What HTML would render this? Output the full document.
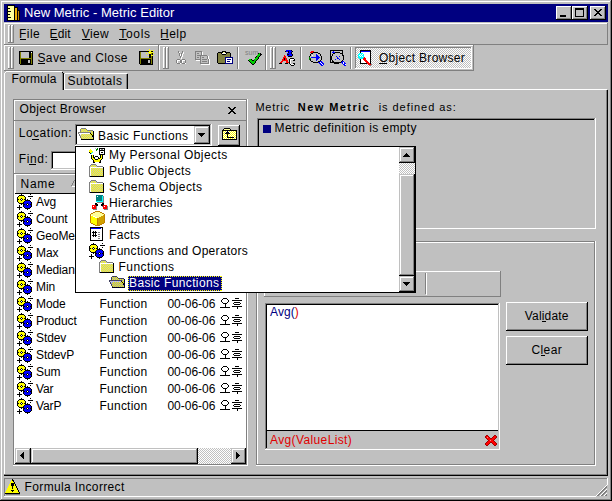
<!DOCTYPE html><html><head><meta charset="utf-8"><style>
html,body{margin:0;padding:0;}
body{width:612px;height:501px;position:relative;overflow:hidden;background:#c0c0c0;font-family:"Liberation Sans",sans-serif;}
div,svg{position:absolute;}
.t{white-space:pre;}
</style></head><body>
<div style="left:0px;top:0px;width:612px;height:501px;background:#000;"></div>
<div style="left:0px;top:0px;width:611px;height:500px;background:#c0c0c0;"></div>
<div style="left:1px;top:1px;width:610px;height:499px;background:#808080;"></div>
<div style="left:1px;top:1px;width:609px;height:498px;background:#fff;"></div>
<div style="left:2px;top:2px;width:608px;height:497px;background:#c0c0c0;"></div>
<div style="left:4px;top:4px;width:604px;height:18px;background:#000080;"></div>
<div class="t" style="left:24.0px;top:6px;font-size:13px;line-height:14px;color:#fff;font-weight:400;letter-spacing:0.032px;">New Metric - Metric Editor</div>
<svg style="left:7px;top:5px" width="13" height="16" viewBox="0 0 13 16" shape-rendering="crispEdges"><rect x="0" y="0" width="8" height="1" fill="#000000"/><rect x="0" y="1" width="1" height="1" fill="#000000"/><rect x="1" y="1" width="6" height="1" fill="#ffff99"/><rect x="7" y="1" width="1" height="1" fill="#000000"/><rect x="0" y="2" width="1" height="1" fill="#000000"/><rect x="1" y="2" width="6" height="1" fill="#ffff99"/><rect x="7" y="2" width="4" height="1" fill="#000000"/><rect x="0" y="3" width="3" height="1" fill="#000000"/><rect x="3" y="3" width="4" height="1" fill="#ffff99"/><rect x="7" y="3" width="1" height="1" fill="#000000"/><rect x="8" y="3" width="2" height="1" fill="#f0b000"/><rect x="10" y="3" width="1" height="1" fill="#000000"/><rect x="0" y="4" width="1" height="1" fill="#000000"/><rect x="1" y="4" width="6" height="1" fill="#ffff99"/><rect x="7" y="4" width="1" height="1" fill="#000000"/><rect x="8" y="4" width="2" height="1" fill="#f0b000"/><rect x="10" y="4" width="1" height="1" fill="#000000"/><rect x="0" y="5" width="1" height="1" fill="#000000"/><rect x="1" y="5" width="6" height="1" fill="#ffff99"/><rect x="7" y="5" width="1" height="1" fill="#000000"/><rect x="8" y="5" width="2" height="1" fill="#f0b000"/><rect x="10" y="5" width="3" height="1" fill="#000000"/><rect x="0" y="6" width="4" height="1" fill="#000000"/><rect x="4" y="6" width="3" height="1" fill="#ffff99"/><rect x="7" y="6" width="1" height="1" fill="#000000"/><rect x="8" y="6" width="2" height="1" fill="#f0b000"/><rect x="10" y="6" width="1" height="1" fill="#000000"/><rect x="11" y="6" width="1" height="1" fill="#c08000"/><rect x="12" y="6" width="1" height="1" fill="#000000"/><rect x="0" y="7" width="1" height="1" fill="#000000"/><rect x="1" y="7" width="6" height="1" fill="#ffff99"/><rect x="7" y="7" width="1" height="1" fill="#000000"/><rect x="8" y="7" width="2" height="1" fill="#f0b000"/><rect x="10" y="7" width="1" height="1" fill="#000000"/><rect x="11" y="7" width="1" height="1" fill="#c08000"/><rect x="12" y="7" width="1" height="1" fill="#000000"/><rect x="0" y="8" width="1" height="1" fill="#000000"/><rect x="1" y="8" width="6" height="1" fill="#ffff99"/><rect x="7" y="8" width="1" height="1" fill="#000000"/><rect x="8" y="8" width="2" height="1" fill="#f0b000"/><rect x="10" y="8" width="1" height="1" fill="#000000"/><rect x="11" y="8" width="1" height="1" fill="#c08000"/><rect x="12" y="8" width="1" height="1" fill="#000000"/><rect x="0" y="9" width="3" height="1" fill="#000000"/><rect x="3" y="9" width="4" height="1" fill="#ffff99"/><rect x="7" y="9" width="1" height="1" fill="#000000"/><rect x="8" y="9" width="2" height="1" fill="#f0b000"/><rect x="10" y="9" width="1" height="1" fill="#000000"/><rect x="11" y="9" width="1" height="1" fill="#c08000"/><rect x="12" y="9" width="1" height="1" fill="#000000"/><rect x="0" y="10" width="1" height="1" fill="#000000"/><rect x="1" y="10" width="6" height="1" fill="#ffff99"/><rect x="7" y="10" width="1" height="1" fill="#000000"/><rect x="8" y="10" width="2" height="1" fill="#f0b000"/><rect x="10" y="10" width="1" height="1" fill="#000000"/><rect x="11" y="10" width="1" height="1" fill="#c08000"/><rect x="12" y="10" width="1" height="1" fill="#000000"/><rect x="0" y="11" width="1" height="1" fill="#000000"/><rect x="1" y="11" width="6" height="1" fill="#ffff99"/><rect x="7" y="11" width="1" height="1" fill="#000000"/><rect x="8" y="11" width="2" height="1" fill="#f0b000"/><rect x="10" y="11" width="1" height="1" fill="#000000"/><rect x="11" y="11" width="1" height="1" fill="#c08000"/><rect x="12" y="11" width="1" height="1" fill="#000000"/><rect x="0" y="12" width="4" height="1" fill="#000000"/><rect x="4" y="12" width="3" height="1" fill="#ffff99"/><rect x="7" y="12" width="1" height="1" fill="#000000"/><rect x="8" y="12" width="2" height="1" fill="#f0b000"/><rect x="10" y="12" width="1" height="1" fill="#000000"/><rect x="11" y="12" width="1" height="1" fill="#c08000"/><rect x="12" y="12" width="1" height="1" fill="#000000"/><rect x="0" y="13" width="1" height="1" fill="#000000"/><rect x="1" y="13" width="6" height="1" fill="#ffff99"/><rect x="7" y="13" width="1" height="1" fill="#000000"/><rect x="8" y="13" width="2" height="1" fill="#f0b000"/><rect x="10" y="13" width="1" height="1" fill="#000000"/><rect x="11" y="13" width="1" height="1" fill="#c08000"/><rect x="12" y="13" width="1" height="1" fill="#000000"/><rect x="0" y="14" width="1" height="1" fill="#000000"/><rect x="1" y="14" width="6" height="1" fill="#ffff99"/><rect x="7" y="14" width="1" height="1" fill="#000000"/><rect x="8" y="14" width="2" height="1" fill="#f0b000"/><rect x="10" y="14" width="1" height="1" fill="#000000"/><rect x="11" y="14" width="1" height="1" fill="#c08000"/><rect x="12" y="14" width="1" height="1" fill="#000000"/><rect x="0" y="15" width="13" height="1" fill="#000000"/></svg>
<div style="left:556px;top:6px;width:16px;height:14px;background:#000;"></div>
<div style="left:556px;top:6px;width:15px;height:13px;background:#fff;"></div>
<div style="left:557px;top:7px;width:14px;height:12px;background:#808080;"></div>
<div style="left:557px;top:7px;width:13px;height:11px;background:#c0c0c0;"></div>
<div style="left:558px;top:8px;width:12px;height:10px;background:#c0c0c0;"></div>
<div style="left:560px;top:15px;width:6px;height:2px;background:#000;"></div>
<div style="left:572px;top:6px;width:16px;height:14px;background:#000;"></div>
<div style="left:572px;top:6px;width:15px;height:13px;background:#fff;"></div>
<div style="left:573px;top:7px;width:14px;height:12px;background:#808080;"></div>
<div style="left:573px;top:7px;width:13px;height:11px;background:#c0c0c0;"></div>
<div style="left:574px;top:8px;width:12px;height:10px;background:#c0c0c0;"></div>
<div style="left:575px;top:8px;width:9px;height:9px;background:#000;"></div>
<div style="left:576px;top:10px;width:7px;height:6px;background:#c0c0c0;"></div>
<div style="left:590px;top:6px;width:16px;height:14px;background:#000;"></div>
<div style="left:590px;top:6px;width:15px;height:13px;background:#fff;"></div>
<div style="left:591px;top:7px;width:14px;height:12px;background:#808080;"></div>
<div style="left:591px;top:7px;width:13px;height:11px;background:#c0c0c0;"></div>
<div style="left:592px;top:8px;width:12px;height:10px;background:#c0c0c0;"></div>
<svg style="left:594px;top:9px" width="8" height="7" viewBox="0 0 8 7" shape-rendering="crispEdges"><rect x="0" y="0" width="2" height="1" fill="#000000"/><rect x="6" y="0" width="2" height="1" fill="#000000"/><rect x="1" y="1" width="2" height="1" fill="#000000"/><rect x="5" y="1" width="2" height="1" fill="#000000"/><rect x="2" y="2" width="4" height="1" fill="#000000"/><rect x="3" y="3" width="2" height="1" fill="#000000"/><rect x="2" y="4" width="4" height="1" fill="#000000"/><rect x="1" y="5" width="2" height="1" fill="#000000"/><rect x="5" y="5" width="2" height="1" fill="#000000"/><rect x="0" y="6" width="2" height="1" fill="#000000"/><rect x="6" y="6" width="2" height="1" fill="#000000"/></svg>
<div style="left:4px;top:23px;width:604px;height:1px;background:#fff;"></div>
<div style="left:4px;top:23px;width:1px;height:21px;background:#fff;"></div>
<div style="left:607px;top:23px;width:1px;height:22px;background:#808080;"></div>
<div style="left:4px;top:44px;width:604px;height:1px;background:#808080;"></div>
<div style="left:4px;top:45px;width:469px;height:1px;background:#fff;"></div>
<div style="left:8px;top:25px;width:3px;height:18px;background:#808080;"></div>
<div style="left:8px;top:25px;width:2px;height:17px;background:#fff;"></div>
<div style="left:9px;top:26px;width:1px;height:16px;background:#c0c0c0;"></div>
<div style="left:11px;top:25px;width:3px;height:18px;background:#808080;"></div>
<div style="left:11px;top:25px;width:2px;height:17px;background:#fff;"></div>
<div style="left:12px;top:26px;width:1px;height:16px;background:#c0c0c0;"></div>
<div class="t" style="left:19.0px;top:27px;font-size:12px;line-height:14px;color:#000;font-weight:400;letter-spacing:0.446px;">File</div>
<div class="t" style="left:49.6px;top:27px;font-size:12px;line-height:14px;color:#000;font-weight:400;letter-spacing:0.085px;">Edit</div>
<div class="t" style="left:81.7px;top:27px;font-size:12px;line-height:14px;color:#000;font-weight:400;letter-spacing:0.423px;">View</div>
<div class="t" style="left:119.3px;top:27px;font-size:12px;line-height:14px;color:#000;font-weight:400;letter-spacing:0.697px;">Tools</div>
<div class="t" style="left:160.0px;top:27px;font-size:12px;line-height:14px;color:#000;font-weight:400;letter-spacing:0.465px;">Help</div>
<div style="left:20px;top:39px;width:6px;height:1px;background:#000;"></div>
<div style="left:51px;top:39px;width:7px;height:1px;background:#000;"></div>
<div style="left:82px;top:39px;width:8px;height:1px;background:#000;"></div>
<div style="left:119px;top:39px;width:8px;height:1px;background:#000;"></div>
<div style="left:161px;top:39px;width:8px;height:1px;background:#000;"></div>
<div style="left:4px;top:45px;width:1px;height:25px;background:#fff;"></div>
<div style="left:4px;top:70px;width:470px;height:1px;background:#808080;"></div>
<div style="left:473px;top:45px;width:1px;height:26px;background:#808080;"></div>
<div style="left:8px;top:47px;width:3px;height:22px;background:#808080;"></div>
<div style="left:8px;top:47px;width:2px;height:21px;background:#fff;"></div>
<div style="left:9px;top:48px;width:1px;height:20px;background:#c0c0c0;"></div>
<div style="left:11px;top:47px;width:3px;height:22px;background:#808080;"></div>
<div style="left:11px;top:47px;width:2px;height:21px;background:#fff;"></div>
<div style="left:12px;top:48px;width:1px;height:20px;background:#c0c0c0;"></div>
<svg style="left:19px;top:51px" width="14" height="14" viewBox="0 0 14 14" shape-rendering="crispEdges"><rect x="0" y="0" width="14" height="14" fill="#000"/><rect x="1" y="1" width="1" height="12" fill="#808000"/><rect x="12" y="2" width="1" height="11" fill="#808000"/><rect x="2" y="7" width="10" height="1" fill="#808000"/><rect x="2" y="1" width="8" height="6" fill="#c0c0c0"/><rect x="9" y="9" width="2" height="3" fill="#c0c0c0"/><rect x="12" y="1" width="1" height="1" fill="#fff"/><rect x="0" y="13" width="1" height="1" fill="#c0c0c0"/></svg>
<div class="t" style="left:37.4px;top:51px;font-size:12px;line-height:14px;color:#000;font-weight:400;letter-spacing:0.413px;">Save and Close</div>
<div style="left:38px;top:63px;width:7px;height:1px;background:#000;"></div>
<svg style="left:139px;top:51px" width="14" height="14" viewBox="0 0 14 14" shape-rendering="crispEdges"><rect x="0" y="0" width="14" height="14" fill="#000"/><rect x="1" y="1" width="1" height="12" fill="#808000"/><rect x="12" y="2" width="1" height="11" fill="#808000"/><rect x="2" y="7" width="10" height="1" fill="#808000"/><rect x="2" y="1" width="8" height="6" fill="#c0c0c0"/><rect x="9" y="9" width="2" height="3" fill="#c0c0c0"/><rect x="12" y="1" width="1" height="1" fill="#fff"/><rect x="0" y="13" width="1" height="1" fill="#c0c0c0"/></svg>
<svg style="left:146px;top:49px" width="9" height="9" viewBox="0 0 9 9" shape-rendering="crispEdges"><rect x="3" y="0" width="1" height="1" fill="#ff0"/><rect x="1" y="1" width="1" height="1" fill="#ff0"/><rect x="5" y="1" width="1" height="1" fill="#ff0"/><rect x="3" y="2" width="2" height="3" fill="#ff0"/><rect x="2" y="3" width="5" height="1" fill="#ff0"/><rect x="0" y="4" width="1" height="1" fill="#ff0"/><rect x="7" y="4" width="1" height="1" fill="#ff0"/><rect x="2" y="6" width="1" height="1" fill="#ff0"/><rect x="5" y="6" width="2" height="1" fill="#ff0"/><rect x="7" y="1" width="1" height="1" fill="#ff0"/></svg>
<div style="left:158px;top:45px;width:1px;height:25px;background:#808080;"></div>
<div style="left:159px;top:45px;width:1px;height:25px;background:#fff;"></div>
<div style="left:163px;top:47px;width:3px;height:22px;background:#808080;"></div>
<div style="left:163px;top:47px;width:2px;height:21px;background:#fff;"></div>
<div style="left:164px;top:48px;width:1px;height:20px;background:#c0c0c0;"></div>
<div style="left:166px;top:47px;width:3px;height:22px;background:#808080;"></div>
<div style="left:166px;top:47px;width:2px;height:21px;background:#fff;"></div>
<div style="left:167px;top:48px;width:1px;height:20px;background:#c0c0c0;"></div>
<svg style="left:176px;top:51px" width="11" height="14" viewBox="0 0 11 14" shape-rendering="crispEdges"><g fill="none" stroke="#fff" stroke-width="1"><path d="M3 1 L6 8 M8 1 L5 8"/><circle cx="3" cy="11" r="2"/><circle cx="8" cy="11" r="2"/></g><g fill="none" stroke="#808080" stroke-width="1"><path d="M2 0 L5 7 M7 0 L4 7"/><circle cx="2.5" cy="10.5" r="2"/><circle cx="7.5" cy="10.5" r="2"/></g></svg>
<svg style="left:195px;top:51px" width="16" height="14" viewBox="0 0 16 14" shape-rendering="crispEdges"><rect x="0" y="0" width="7" height="1" fill="#808080"/><rect x="0" y="1" width="1" height="1" fill="#808080"/><rect x="1" y="1" width="5" height="1" fill="#c0c0c0"/><rect x="6" y="1" width="1" height="1" fill="#808080"/><rect x="7" y="1" width="1" height="1" fill="#ffffff"/><rect x="0" y="2" width="1" height="1" fill="#808080"/><rect x="1" y="2" width="1" height="1" fill="#c0c0c0"/><rect x="2" y="2" width="2" height="1" fill="#808080"/><rect x="4" y="2" width="2" height="1" fill="#c0c0c0"/><rect x="6" y="2" width="1" height="1" fill="#808080"/><rect x="7" y="2" width="1" height="1" fill="#ffffff"/><rect x="0" y="3" width="1" height="1" fill="#808080"/><rect x="1" y="3" width="5" height="1" fill="#c0c0c0"/><rect x="6" y="3" width="1" height="1" fill="#808080"/><rect x="7" y="3" width="1" height="1" fill="#ffffff"/><rect x="0" y="4" width="1" height="1" fill="#808080"/><rect x="1" y="4" width="1" height="1" fill="#c0c0c0"/><rect x="2" y="4" width="10" height="1" fill="#808080"/><rect x="0" y="5" width="1" height="1" fill="#808080"/><rect x="1" y="5" width="4" height="1" fill="#c0c0c0"/><rect x="5" y="5" width="1" height="1" fill="#808080"/><rect x="6" y="5" width="6" height="1" fill="#c0c0c0"/><rect x="12" y="5" width="1" height="1" fill="#808080"/><rect x="13" y="5" width="1" height="1" fill="#ffffff"/><rect x="0" y="6" width="1" height="1" fill="#808080"/><rect x="1" y="6" width="1" height="1" fill="#c0c0c0"/><rect x="2" y="6" width="2" height="1" fill="#808080"/><rect x="4" y="6" width="1" height="1" fill="#c0c0c0"/><rect x="5" y="6" width="1" height="1" fill="#808080"/><rect x="6" y="6" width="1" height="1" fill="#c0c0c0"/><rect x="7" y="6" width="2" height="1" fill="#808080"/><rect x="9" y="6" width="3" height="1" fill="#c0c0c0"/><rect x="12" y="6" width="1" height="1" fill="#808080"/><rect x="13" y="6" width="1" height="1" fill="#ffffff"/><rect x="0" y="7" width="1" height="1" fill="#808080"/><rect x="1" y="7" width="4" height="1" fill="#c0c0c0"/><rect x="5" y="7" width="1" height="1" fill="#808080"/><rect x="6" y="7" width="6" height="1" fill="#c0c0c0"/><rect x="12" y="7" width="1" height="1" fill="#808080"/><rect x="13" y="7" width="1" height="1" fill="#ffffff"/><rect x="0" y="8" width="6" height="1" fill="#808080"/><rect x="6" y="8" width="1" height="1" fill="#c0c0c0"/><rect x="7" y="8" width="5" height="1" fill="#808080"/><rect x="12" y="8" width="1" height="1" fill="#c0c0c0"/><rect x="13" y="8" width="1" height="1" fill="#808080"/><rect x="14" y="8" width="1" height="1" fill="#ffffff"/><rect x="1" y="9" width="4" height="1" fill="#ffffff"/><rect x="5" y="9" width="1" height="1" fill="#808080"/><rect x="6" y="9" width="7" height="1" fill="#c0c0c0"/><rect x="13" y="9" width="1" height="1" fill="#808080"/><rect x="14" y="9" width="1" height="1" fill="#ffffff"/><rect x="5" y="10" width="1" height="1" fill="#808080"/><rect x="6" y="10" width="1" height="1" fill="#c0c0c0"/><rect x="7" y="10" width="5" height="1" fill="#808080"/><rect x="12" y="10" width="1" height="1" fill="#c0c0c0"/><rect x="13" y="10" width="1" height="1" fill="#808080"/><rect x="14" y="10" width="1" height="1" fill="#ffffff"/><rect x="5" y="11" width="1" height="1" fill="#808080"/><rect x="6" y="11" width="7" height="1" fill="#c0c0c0"/><rect x="13" y="11" width="1" height="1" fill="#808080"/><rect x="14" y="11" width="1" height="1" fill="#ffffff"/><rect x="5" y="12" width="9" height="1" fill="#808080"/><rect x="14" y="12" width="1" height="1" fill="#ffffff"/><rect x="6" y="13" width="9" height="1" fill="#ffffff"/></svg>
<svg style="left:217px;top:51px" width="17" height="13" viewBox="0 0 17 13" shape-rendering="crispEdges"><rect x="5" y="0" width="4" height="1" fill="#000000"/><rect x="1" y="1" width="5" height="1" fill="#000000"/><rect x="6" y="1" width="2" height="1" fill="#ffff99"/><rect x="8" y="1" width="5" height="1" fill="#000000"/><rect x="0" y="2" width="1" height="1" fill="#000000"/><rect x="1" y="2" width="3" height="1" fill="#808040"/><rect x="4" y="2" width="1" height="1" fill="#000000"/><rect x="5" y="2" width="4" height="1" fill="#ffffff"/><rect x="9" y="2" width="1" height="1" fill="#000000"/><rect x="10" y="2" width="3" height="1" fill="#808040"/><rect x="13" y="2" width="1" height="1" fill="#000000"/><rect x="0" y="3" width="1" height="1" fill="#000000"/><rect x="1" y="3" width="4" height="1" fill="#808040"/><rect x="5" y="3" width="4" height="1" fill="#000000"/><rect x="9" y="3" width="4" height="1" fill="#808040"/><rect x="13" y="3" width="1" height="1" fill="#000000"/><rect x="0" y="4" width="1" height="1" fill="#000000"/><rect x="1" y="4" width="12" height="1" fill="#808040"/><rect x="13" y="4" width="1" height="1" fill="#000000"/><rect x="0" y="5" width="1" height="1" fill="#000000"/><rect x="1" y="5" width="12" height="1" fill="#808040"/><rect x="13" y="5" width="1" height="1" fill="#000000"/><rect x="0" y="6" width="1" height="1" fill="#000000"/><rect x="1" y="6" width="7" height="1" fill="#808040"/><rect x="8" y="6" width="8" height="1" fill="#000080"/><rect x="0" y="7" width="1" height="1" fill="#000000"/><rect x="1" y="7" width="7" height="1" fill="#808040"/><rect x="8" y="7" width="1" height="1" fill="#000080"/><rect x="9" y="7" width="6" height="1" fill="#ffffff"/><rect x="15" y="7" width="1" height="1" fill="#000080"/><rect x="0" y="8" width="1" height="1" fill="#000000"/><rect x="1" y="8" width="7" height="1" fill="#808040"/><rect x="8" y="8" width="1" height="1" fill="#000080"/><rect x="9" y="8" width="1" height="1" fill="#ffffff"/><rect x="10" y="8" width="4" height="1" fill="#000080"/><rect x="14" y="8" width="1" height="1" fill="#ffffff"/><rect x="15" y="8" width="1" height="1" fill="#000080"/><rect x="0" y="9" width="1" height="1" fill="#000000"/><rect x="1" y="9" width="7" height="1" fill="#808040"/><rect x="8" y="9" width="1" height="1" fill="#000080"/><rect x="9" y="9" width="6" height="1" fill="#ffffff"/><rect x="15" y="9" width="1" height="1" fill="#000080"/><rect x="0" y="10" width="1" height="1" fill="#000000"/><rect x="1" y="10" width="7" height="1" fill="#808040"/><rect x="8" y="10" width="1" height="1" fill="#000080"/><rect x="9" y="10" width="1" height="1" fill="#ffffff"/><rect x="10" y="10" width="3" height="1" fill="#000080"/><rect x="13" y="10" width="2" height="1" fill="#ffffff"/><rect x="15" y="10" width="1" height="1" fill="#000080"/><rect x="0" y="11" width="1" height="1" fill="#000000"/><rect x="1" y="11" width="7" height="1" fill="#808040"/><rect x="8" y="11" width="1" height="1" fill="#000080"/><rect x="9" y="11" width="6" height="1" fill="#ffffff"/><rect x="15" y="11" width="1" height="1" fill="#000080"/><rect x="1" y="12" width="7" height="1" fill="#000000"/><rect x="8" y="12" width="8" height="1" fill="#000080"/></svg>
<div style="left:237px;top:47px;width:1px;height:22px;background:#808080;"></div>
<div style="left:238px;top:47px;width:1px;height:22px;background:#fff;"></div>
<div class="t" style="left:245px;top:49px;font-size:7px;line-height:8px;color:#808080;font-weight:400;">sum</div>
<svg style="left:248px;top:52px" width="14" height="14" viewBox="0 0 14 14" shape-rendering="crispEdges"><path d="M1.5 7.5 L5 11.5 L12.5 1.5" stroke="#000" stroke-width="3.2" fill="none"/><path d="M1.5 7.5 L5 11 L12 1.5" stroke="#0c0" stroke-width="2" fill="none"/></svg>
<div style="left:265px;top:45px;width:1px;height:25px;background:#808080;"></div>
<div style="left:266px;top:45px;width:1px;height:25px;background:#fff;"></div>
<div style="left:270px;top:47px;width:3px;height:22px;background:#808080;"></div>
<div style="left:270px;top:47px;width:2px;height:21px;background:#fff;"></div>
<div style="left:271px;top:48px;width:1px;height:20px;background:#c0c0c0;"></div>
<div style="left:273px;top:47px;width:3px;height:22px;background:#808080;"></div>
<div style="left:273px;top:47px;width:2px;height:21px;background:#fff;"></div>
<div style="left:274px;top:48px;width:1px;height:20px;background:#c0c0c0;"></div>
<svg style="left:279px;top:50px" width="17" height="16" viewBox="0 0 17 16" shape-rendering="crispEdges"><rect x="7" y="0" width="5" height="1" fill="#0000ff"/><rect x="12" y="0" width="1" height="1" fill="#000000"/><rect x="6" y="1" width="1" height="1" fill="#000000"/><rect x="7" y="1" width="2" height="1" fill="#0000ff"/><rect x="9" y="1" width="1" height="1" fill="#000000"/><rect x="10" y="1" width="3" height="1" fill="#0000ff"/><rect x="13" y="1" width="1" height="1" fill="#000000"/><rect x="9" y="2" width="1" height="1" fill="#000000"/><rect x="10" y="2" width="2" height="1" fill="#0000ff"/><rect x="12" y="2" width="1" height="1" fill="#000000"/><rect x="8" y="3" width="4" height="1" fill="#0000ff"/><rect x="12" y="3" width="1" height="1" fill="#000000"/><rect x="8" y="4" width="2" height="1" fill="#000000"/><rect x="10" y="4" width="3" height="1" fill="#0000ff"/><rect x="13" y="4" width="1" height="1" fill="#000000"/><rect x="5" y="5" width="1" height="1" fill="#ff0000"/><rect x="8" y="5" width="5" height="1" fill="#0000ff"/><rect x="13" y="5" width="1" height="1" fill="#000000"/><rect x="5" y="6" width="2" height="1" fill="#ff0000"/><rect x="9" y="6" width="4" height="1" fill="#000000"/><rect x="4" y="7" width="3" height="1" fill="#ff0000"/><rect x="4" y="8" width="1" height="1" fill="#ff0000"/><rect x="5" y="8" width="1" height="1" fill="#000000"/><rect x="6" y="8" width="2" height="1" fill="#ff0000"/><rect x="11" y="8" width="4" height="1" fill="#000000"/><rect x="3" y="9" width="2" height="1" fill="#ff0000"/><rect x="5" y="9" width="1" height="1" fill="#000000"/><rect x="6" y="9" width="2" height="1" fill="#ff0000"/><rect x="10" y="9" width="1" height="1" fill="#000000"/><rect x="11" y="9" width="4" height="1" fill="#ffffff"/><rect x="15" y="9" width="1" height="1" fill="#000000"/><rect x="3" y="10" width="6" height="1" fill="#ff0000"/><rect x="10" y="10" width="1" height="1" fill="#000000"/><rect x="11" y="10" width="1" height="1" fill="#ffffff"/><rect x="14" y="10" width="2" height="1" fill="#000000"/><rect x="2" y="11" width="2" height="1" fill="#ff0000"/><rect x="7" y="11" width="2" height="1" fill="#ff0000"/><rect x="10" y="11" width="1" height="1" fill="#000000"/><rect x="11" y="11" width="1" height="1" fill="#ffffff"/><rect x="1" y="12" width="2" height="1" fill="#ff0000"/><rect x="7" y="12" width="3" height="1" fill="#ff0000"/><rect x="10" y="12" width="1" height="1" fill="#000000"/><rect x="11" y="12" width="1" height="1" fill="#ffffff"/><rect x="0" y="13" width="3" height="1" fill="#000000"/><rect x="6" y="13" width="3" height="1" fill="#000000"/><rect x="10" y="13" width="1" height="1" fill="#000000"/><rect x="11" y="13" width="1" height="1" fill="#ffffff"/><rect x="14" y="13" width="2" height="1" fill="#000000"/><rect x="11" y="14" width="1" height="1" fill="#000000"/><rect x="12" y="14" width="3" height="1" fill="#ffffff"/><rect x="15" y="14" width="1" height="1" fill="#000000"/><rect x="12" y="15" width="3" height="1" fill="#000000"/></svg>
<div style="left:300px;top:47px;width:1px;height:22px;background:#808080;"></div>
<div style="left:301px;top:47px;width:1px;height:22px;background:#fff;"></div>
<svg style="left:309px;top:50px" width="16" height="16" viewBox="0 0 16 16" shape-rendering="crispEdges"><rect x="2" y="1" width="3" height="1" fill="#ff0000"/><rect x="1" y="2" width="3" height="1" fill="#ff0000"/><rect x="4" y="2" width="5" height="1" fill="#000000"/><rect x="2" y="3" width="2" height="1" fill="#000000"/><rect x="4" y="3" width="5" height="1" fill="#c0c0c0"/><rect x="9" y="3" width="2" height="1" fill="#000000"/><rect x="1" y="4" width="1" height="1" fill="#000000"/><rect x="2" y="4" width="5" height="1" fill="#c0c0c0"/><rect x="7" y="4" width="1" height="1" fill="#0000ff"/><rect x="8" y="4" width="3" height="1" fill="#c0c0c0"/><rect x="11" y="4" width="1" height="1" fill="#000000"/><rect x="1" y="5" width="1" height="1" fill="#000000"/><rect x="2" y="5" width="1" height="1" fill="#c0c0c0"/><rect x="3" y="5" width="1" height="1" fill="#ffffff"/><rect x="4" y="5" width="3" height="1" fill="#c0c0c0"/><rect x="7" y="5" width="2" height="1" fill="#0000ff"/><rect x="9" y="5" width="2" height="1" fill="#c0c0c0"/><rect x="11" y="5" width="1" height="1" fill="#000000"/><rect x="0" y="6" width="1" height="1" fill="#000000"/><rect x="1" y="6" width="6" height="1" fill="#c0c0c0"/><rect x="7" y="6" width="3" height="1" fill="#0000ff"/><rect x="10" y="6" width="2" height="1" fill="#c0c0c0"/><rect x="12" y="6" width="1" height="1" fill="#000000"/><rect x="0" y="7" width="1" height="1" fill="#008000"/><rect x="1" y="7" width="1" height="1" fill="#c0c0c0"/><rect x="2" y="7" width="9" height="1" fill="#0000ff"/><rect x="11" y="7" width="1" height="1" fill="#c0c0c0"/><rect x="12" y="7" width="1" height="1" fill="#000000"/><rect x="0" y="8" width="2" height="1" fill="#008000"/><rect x="2" y="8" width="5" height="1" fill="#c0c0c0"/><rect x="7" y="8" width="3" height="1" fill="#0000ff"/><rect x="10" y="8" width="2" height="1" fill="#c0c0c0"/><rect x="12" y="8" width="1" height="1" fill="#000000"/><rect x="0" y="9" width="1" height="1" fill="#008000"/><rect x="1" y="9" width="1" height="1" fill="#000000"/><rect x="2" y="9" width="5" height="1" fill="#c0c0c0"/><rect x="7" y="9" width="2" height="1" fill="#0000ff"/><rect x="9" y="9" width="3" height="1" fill="#c0c0c0"/><rect x="12" y="9" width="1" height="1" fill="#000000"/><rect x="1" y="10" width="1" height="1" fill="#000000"/><rect x="2" y="10" width="5" height="1" fill="#c0c0c0"/><rect x="7" y="10" width="1" height="1" fill="#0000ff"/><rect x="8" y="10" width="3" height="1" fill="#c0c0c0"/><rect x="11" y="10" width="1" height="1" fill="#000000"/><rect x="2" y="11" width="2" height="1" fill="#000000"/><rect x="4" y="11" width="5" height="1" fill="#c0c0c0"/><rect x="9" y="11" width="2" height="1" fill="#000000"/><rect x="11" y="11" width="2" height="1" fill="#0000ff"/><rect x="4" y="12" width="5" height="1" fill="#000000"/><rect x="9" y="12" width="2" height="1" fill="#0000ff"/><rect x="11" y="12" width="1" height="1" fill="#ffffff"/><rect x="12" y="12" width="2" height="1" fill="#0000ff"/><rect x="10" y="13" width="2" height="1" fill="#0000ff"/><rect x="12" y="13" width="1" height="1" fill="#ffffff"/><rect x="13" y="13" width="2" height="1" fill="#0000ff"/><rect x="11" y="14" width="2" height="1" fill="#0000ff"/><rect x="13" y="14" width="1" height="1" fill="#ffffff"/><rect x="14" y="14" width="1" height="1" fill="#0000ff"/><rect x="12" y="15" width="2" height="1" fill="#0000ff"/></svg>
<svg style="left:330px;top:50px" width="16" height="16" viewBox="0 0 16 16" shape-rendering="crispEdges"><rect x="0" y="0" width="13" height="1" fill="#000000"/><rect x="0" y="1" width="1" height="1" fill="#000000"/><rect x="1" y="1" width="2" height="1" fill="#c0c0c0"/><rect x="3" y="1" width="1" height="1" fill="#0000ff"/><rect x="4" y="1" width="8" height="1" fill="#c0c0c0"/><rect x="12" y="1" width="1" height="1" fill="#000000"/><rect x="0" y="2" width="1" height="1" fill="#000000"/><rect x="1" y="2" width="1" height="1" fill="#c0c0c0"/><rect x="2" y="2" width="3" height="1" fill="#0000ff"/><rect x="5" y="2" width="5" height="1" fill="#000000"/><rect x="10" y="2" width="2" height="1" fill="#c0c0c0"/><rect x="12" y="2" width="1" height="1" fill="#000000"/><rect x="0" y="3" width="1" height="1" fill="#000000"/><rect x="1" y="3" width="2" height="1" fill="#c0c0c0"/><rect x="3" y="3" width="2" height="1" fill="#000000"/><rect x="5" y="3" width="5" height="1" fill="#c0c0c0"/><rect x="10" y="3" width="3" height="1" fill="#000000"/><rect x="0" y="4" width="1" height="1" fill="#000000"/><rect x="1" y="4" width="1" height="1" fill="#c0c0c0"/><rect x="2" y="4" width="1" height="1" fill="#000000"/><rect x="3" y="4" width="9" height="1" fill="#c0c0c0"/><rect x="12" y="4" width="1" height="1" fill="#000000"/><rect x="0" y="5" width="1" height="1" fill="#000000"/><rect x="1" y="5" width="1" height="1" fill="#c0c0c0"/><rect x="2" y="5" width="1" height="1" fill="#000000"/><rect x="3" y="5" width="9" height="1" fill="#c0c0c0"/><rect x="12" y="5" width="2" height="1" fill="#000000"/><rect x="0" y="6" width="2" height="1" fill="#000000"/><rect x="2" y="6" width="4" height="1" fill="#c0c0c0"/><rect x="6" y="6" width="1" height="1" fill="#0000ff"/><rect x="7" y="6" width="2" height="1" fill="#c0c0c0"/><rect x="9" y="6" width="1" height="1" fill="#0000ff"/><rect x="10" y="6" width="3" height="1" fill="#c0c0c0"/><rect x="13" y="6" width="1" height="1" fill="#000000"/><rect x="0" y="7" width="2" height="1" fill="#000000"/><rect x="2" y="7" width="5" height="1" fill="#c0c0c0"/><rect x="7" y="7" width="1" height="1" fill="#0000ff"/><rect x="8" y="7" width="5" height="1" fill="#c0c0c0"/><rect x="13" y="7" width="1" height="1" fill="#000000"/><rect x="0" y="8" width="2" height="1" fill="#000000"/><rect x="2" y="8" width="5" height="1" fill="#c0c0c0"/><rect x="7" y="8" width="2" height="1" fill="#0000ff"/><rect x="9" y="8" width="4" height="1" fill="#c0c0c0"/><rect x="13" y="8" width="1" height="1" fill="#000000"/><rect x="0" y="9" width="2" height="1" fill="#000000"/><rect x="2" y="9" width="3" height="1" fill="#c0c0c0"/><rect x="5" y="9" width="1" height="1" fill="#0000ff"/><rect x="6" y="9" width="3" height="1" fill="#c0c0c0"/><rect x="9" y="9" width="1" height="1" fill="#0000ff"/><rect x="10" y="9" width="3" height="1" fill="#c0c0c0"/><rect x="13" y="9" width="1" height="1" fill="#000000"/><rect x="0" y="10" width="1" height="1" fill="#000000"/><rect x="1" y="10" width="1" height="1" fill="#c0c0c0"/><rect x="2" y="10" width="1" height="1" fill="#000000"/><rect x="3" y="10" width="9" height="1" fill="#c0c0c0"/><rect x="12" y="10" width="1" height="1" fill="#000000"/><rect x="0" y="11" width="1" height="1" fill="#000000"/><rect x="1" y="11" width="1" height="1" fill="#c0c0c0"/><rect x="2" y="11" width="2" height="1" fill="#000000"/><rect x="4" y="11" width="7" height="1" fill="#c0c0c0"/><rect x="11" y="11" width="1" height="1" fill="#000000"/><rect x="12" y="11" width="2" height="1" fill="#0000ff"/><rect x="0" y="12" width="11" height="1" fill="#000000"/><rect x="11" y="12" width="2" height="1" fill="#0000ff"/><rect x="13" y="12" width="1" height="1" fill="#ffffff"/><rect x="14" y="12" width="1" height="1" fill="#0000ff"/><rect x="4" y="13" width="5" height="1" fill="#000000"/><rect x="12" y="13" width="1" height="1" fill="#0000ff"/><rect x="13" y="13" width="1" height="1" fill="#ffffff"/><rect x="14" y="13" width="2" height="1" fill="#0000ff"/><rect x="13" y="14" width="2" height="1" fill="#0000ff"/><rect x="15" y="14" width="1" height="1" fill="#ffffff"/><rect x="14" y="15" width="2" height="1" fill="#0000ff"/></svg>
<div style="left:350px;top:47px;width:1px;height:22px;background:#808080;"></div>
<div style="left:351px;top:47px;width:1px;height:22px;background:#fff;"></div>
<div style="left:355px;top:47px;width:117px;height:22px;background:#fff;"></div>
<div style="left:355px;top:47px;width:116px;height:21px;background:#808080;"></div>
<div style="left:356px;top:48px;width:115px;height:20px;background-color:#c0c0c0;background-image:linear-gradient(45deg,#fff 25%,transparent 25%,transparent 75%,#fff 75%),linear-gradient(45deg,#fff 25%,transparent 25%,transparent 75%,#fff 75%);background-size:2px 2px;background-position:0 0,1px 1px;"></div>
<svg style="left:358px;top:50px" width="15" height="16" viewBox="0 0 15 16" shape-rendering="crispEdges"><rect x="2" y="0" width="11" height="1" fill="#000000"/><rect x="2" y="1" width="1" height="1" fill="#000000"/><rect x="3" y="1" width="9" height="1" fill="#0000ff"/><rect x="12" y="1" width="1" height="1" fill="#000000"/><rect x="2" y="2" width="1" height="1" fill="#000000"/><rect x="3" y="2" width="9" height="1" fill="#ffffff"/><rect x="12" y="2" width="1" height="1" fill="#000000"/><rect x="1" y="3" width="4" height="1" fill="#00ffff"/><rect x="5" y="3" width="7" height="1" fill="#ffffff"/><rect x="12" y="3" width="1" height="1" fill="#000000"/><rect x="0" y="4" width="2" height="1" fill="#00ffff"/><rect x="2" y="4" width="1" height="1" fill="#ffffff"/><rect x="3" y="4" width="1" height="1" fill="#00ffff"/><rect x="4" y="4" width="1" height="1" fill="#ffffff"/><rect x="5" y="4" width="1" height="1" fill="#00ffff"/><rect x="6" y="4" width="6" height="1" fill="#ffffff"/><rect x="12" y="4" width="1" height="1" fill="#000000"/><rect x="0" y="5" width="1" height="1" fill="#00ffff"/><rect x="1" y="5" width="1" height="1" fill="#ffffff"/><rect x="2" y="5" width="1" height="1" fill="#00ffff"/><rect x="3" y="5" width="1" height="1" fill="#ffffff"/><rect x="4" y="5" width="2" height="1" fill="#00ffff"/><rect x="6" y="5" width="6" height="1" fill="#ffffff"/><rect x="12" y="5" width="1" height="1" fill="#000000"/><rect x="0" y="6" width="2" height="1" fill="#00ffff"/><rect x="2" y="6" width="1" height="1" fill="#ffffff"/><rect x="3" y="6" width="1" height="1" fill="#00ffff"/><rect x="4" y="6" width="1" height="1" fill="#ffffff"/><rect x="5" y="6" width="1" height="1" fill="#00ffff"/><rect x="6" y="6" width="6" height="1" fill="#ffffff"/><rect x="12" y="6" width="1" height="1" fill="#000000"/><rect x="0" y="7" width="6" height="1" fill="#00ffff"/><rect x="6" y="7" width="1" height="1" fill="#ff0000"/><rect x="7" y="7" width="5" height="1" fill="#ffffff"/><rect x="12" y="7" width="1" height="1" fill="#000000"/><rect x="1" y="8" width="4" height="1" fill="#00ffff"/><rect x="5" y="8" width="3" height="1" fill="#ff0000"/><rect x="8" y="8" width="4" height="1" fill="#ffffff"/><rect x="12" y="8" width="1" height="1" fill="#000000"/><rect x="2" y="9" width="1" height="1" fill="#000000"/><rect x="3" y="9" width="2" height="1" fill="#ffffff"/><rect x="5" y="9" width="3" height="1" fill="#ff0000"/><rect x="8" y="9" width="4" height="1" fill="#ffffff"/><rect x="12" y="9" width="1" height="1" fill="#000000"/><rect x="2" y="10" width="1" height="1" fill="#000000"/><rect x="3" y="10" width="3" height="1" fill="#ffffff"/><rect x="6" y="10" width="3" height="1" fill="#ff0000"/><rect x="9" y="10" width="3" height="1" fill="#ffffff"/><rect x="12" y="10" width="1" height="1" fill="#000000"/><rect x="2" y="11" width="1" height="1" fill="#000000"/><rect x="3" y="11" width="4" height="1" fill="#ffffff"/><rect x="7" y="11" width="3" height="1" fill="#ff0000"/><rect x="10" y="11" width="2" height="1" fill="#ffffff"/><rect x="12" y="11" width="1" height="1" fill="#000000"/><rect x="2" y="12" width="1" height="1" fill="#000000"/><rect x="3" y="12" width="5" height="1" fill="#ffffff"/><rect x="8" y="12" width="3" height="1" fill="#ff0000"/><rect x="11" y="12" width="1" height="1" fill="#ffffff"/><rect x="12" y="12" width="1" height="1" fill="#000000"/><rect x="2" y="13" width="7" height="1" fill="#000000"/><rect x="9" y="13" width="3" height="1" fill="#ff0000"/><rect x="12" y="13" width="1" height="1" fill="#000000"/><rect x="10" y="14" width="3" height="1" fill="#ff0000"/><rect x="13" y="14" width="1" height="1" fill="#808080"/><rect x="11" y="15" width="2" height="1" fill="#808080"/></svg>
<div class="t" style="left:379.0px;top:51px;font-size:12px;line-height:14px;color:#000;font-weight:400;letter-spacing:0.29px;">Object Browser</div>
<div style="left:379px;top:63px;width:8px;height:1px;background:#000;"></div>
<div style="left:4px;top:89px;width:604px;height:387px;background:#000;"></div>
<div style="left:4px;top:89px;width:603px;height:386px;background:#808080;"></div>
<div style="left:4px;top:89px;width:602px;height:385px;background:#fff;"></div>
<div style="left:5px;top:90px;width:601px;height:384px;background:#c0c0c0;"></div>
<div style="left:606px;top:89px;width:1px;height:1px;background:#fff;"></div>
<div style="left:607px;top:89px;width:1px;height:1px;background:#c0c0c0;"></div>
<div style="left:64px;top:73px;width:64px;height:17px;background:#000;"></div>
<div style="left:64px;top:73px;width:63px;height:17px;background:#808080;"></div>
<div style="left:64px;top:73px;width:62px;height:17px;background:#fff;"></div>
<div style="left:65px;top:74px;width:61px;height:16px;background:#c0c0c0;"></div>
<div style="left:64px;top:73px;width:1px;height:1px;background:#c0c0c0;"></div>
<div style="left:127px;top:73px;width:1px;height:1px;background:#c0c0c0;"></div>
<div style="left:126px;top:73px;width:1px;height:1px;background:#fff;"></div>
<div style="left:64px;top:89px;width:64px;height:1px;background:#fff;"></div>
<div class="t" style="left:67.4px;top:74px;font-size:12px;line-height:14px;color:#000;font-weight:400;letter-spacing:0.569px;">Subtotals</div>
<div style="left:4px;top:71px;width:60px;height:19px;background:#000;"></div>
<div style="left:4px;top:71px;width:59px;height:19px;background:#808080;"></div>
<div style="left:4px;top:71px;width:58px;height:19px;background:#fff;"></div>
<div style="left:5px;top:72px;width:57px;height:19px;background:#c0c0c0;"></div>
<div style="left:4px;top:71px;width:2px;height:2px;background:#c0c0c0;"></div>
<div style="left:5px;top:72px;width:1px;height:1px;background:#fff;"></div>
<div style="left:63px;top:71px;width:1px;height:2px;background:#c0c0c0;"></div>
<div style="left:62px;top:71px;width:1px;height:1px;background:#c0c0c0;"></div>
<div style="left:62px;top:72px;width:1px;height:1px;background:#000;"></div>
<div class="t" style="left:11.4px;top:72px;font-size:12px;line-height:14px;color:#000;font-weight:400;letter-spacing:0.177px;">Formula</div>
<div style="left:13px;top:99px;width:235px;height:367px;background:#fff;"></div>
<div style="left:13px;top:99px;width:234px;height:366px;background:#808080;"></div>
<div style="left:14px;top:100px;width:233px;height:365px;background:#808080;"></div>
<div style="left:14px;top:100px;width:232px;height:364px;background:#fff;"></div>
<div style="left:15px;top:101px;width:231px;height:363px;background:#c0c0c0;"></div>
<div class="t" style="left:19.5px;top:102px;font-size:12px;line-height:14px;color:#000;font-weight:400;letter-spacing:0.321px;">Object Browser</div>
<svg style="left:228px;top:107px" width="8" height="7" viewBox="0 0 8 7" shape-rendering="crispEdges"><rect x="0" y="0" width="2" height="1" fill="#000000"/><rect x="6" y="0" width="2" height="1" fill="#000000"/><rect x="1" y="1" width="2" height="1" fill="#000000"/><rect x="5" y="1" width="2" height="1" fill="#000000"/><rect x="2" y="2" width="4" height="1" fill="#000000"/><rect x="3" y="3" width="2" height="1" fill="#000000"/><rect x="2" y="4" width="4" height="1" fill="#000000"/><rect x="1" y="5" width="2" height="1" fill="#000000"/><rect x="5" y="5" width="2" height="1" fill="#000000"/><rect x="0" y="6" width="2" height="1" fill="#000000"/><rect x="6" y="6" width="2" height="1" fill="#000000"/></svg>
<div style="left:14px;top:120px;width:233px;height:1px;background:#808080;"></div>
<div class="t" style="left:18.7px;top:126px;font-size:12px;line-height:14px;color:#000;font-weight:400;letter-spacing:0.527px;">Location:</div>
<div style="left:32px;top:139px;width:7px;height:1px;background:#000;"></div>
<div style="left:75px;top:124px;width:137px;height:22px;background:#fff;"></div>
<div style="left:75px;top:124px;width:136px;height:21px;background:#808080;"></div>
<div style="left:76px;top:125px;width:135px;height:20px;background:#c0c0c0;"></div>
<div style="left:76px;top:125px;width:134px;height:19px;background:#000;"></div>
<div style="left:77px;top:126px;width:133px;height:18px;background:#fff;"></div>
<div style="left:194px;top:126px;width:16px;height:18px;background:#000;"></div>
<div style="left:194px;top:126px;width:15px;height:17px;background:#fff;"></div>
<div style="left:195px;top:127px;width:14px;height:16px;background:#808080;"></div>
<div style="left:195px;top:127px;width:13px;height:15px;background:#c0c0c0;"></div>
<div style="left:194px;top:126px;width:1px;height:17px;background:#c0c0c0;"></div>
<div style="left:194px;top:126px;width:15px;height:1px;background:#c0c0c0;"></div>
<div style="left:195px;top:127px;width:1px;height:15px;background:#fff;"></div>
<div style="left:195px;top:127px;width:13px;height:1px;background:#fff;"></div>
<svg style="left:198px;top:133px" width="7" height="4" viewBox="0 0 7 4" shape-rendering="crispEdges"><rect x="3" y="3" width="1" height="1" fill="#000"/><rect x="2" y="2" width="3" height="1" fill="#000"/><rect x="1" y="1" width="5" height="1" fill="#000"/><rect x="0" y="0" width="7" height="1" fill="#000"/></svg>
<svg style="left:78px;top:128px" width="16" height="12" viewBox="0 0 16 12" shape-rendering="crispEdges"><rect x="3" y="0" width="5" height="1" fill="#808080"/><rect x="2" y="1" width="1" height="1" fill="#808080"/><rect x="3" y="1" width="1" height="1" fill="#ffff00"/><rect x="4" y="1" width="1" height="1" fill="#c0c0c0"/><rect x="5" y="1" width="1" height="1" fill="#ffff00"/><rect x="6" y="1" width="1" height="1" fill="#c0c0c0"/><rect x="7" y="1" width="1" height="1" fill="#ffff00"/><rect x="8" y="1" width="1" height="1" fill="#808080"/><rect x="2" y="2" width="1" height="1" fill="#808080"/><rect x="3" y="2" width="1" height="1" fill="#c0c0c0"/><rect x="4" y="2" width="1" height="1" fill="#ffff00"/><rect x="5" y="2" width="1" height="1" fill="#c0c0c0"/><rect x="6" y="2" width="1" height="1" fill="#ffff00"/><rect x="7" y="2" width="1" height="1" fill="#c0c0c0"/><rect x="8" y="2" width="1" height="1" fill="#ffff00"/><rect x="9" y="2" width="6" height="1" fill="#808080"/><rect x="2" y="3" width="1" height="1" fill="#808080"/><rect x="3" y="3" width="1" height="1" fill="#ffff00"/><rect x="4" y="3" width="1" height="1" fill="#c0c0c0"/><rect x="5" y="3" width="1" height="1" fill="#ffff00"/><rect x="6" y="3" width="1" height="1" fill="#c0c0c0"/><rect x="7" y="3" width="1" height="1" fill="#ffff00"/><rect x="8" y="3" width="1" height="1" fill="#c0c0c0"/><rect x="9" y="3" width="1" height="1" fill="#ffff00"/><rect x="10" y="3" width="1" height="1" fill="#c0c0c0"/><rect x="11" y="3" width="1" height="1" fill="#ffff00"/><rect x="12" y="3" width="1" height="1" fill="#c0c0c0"/><rect x="13" y="3" width="1" height="1" fill="#ffff00"/><rect x="14" y="3" width="1" height="1" fill="#c0c0c0"/><rect x="15" y="3" width="1" height="1" fill="#000000"/><rect x="0" y="4" width="13" height="1" fill="#808080"/><rect x="13" y="4" width="1" height="1" fill="#c0c0c0"/><rect x="14" y="4" width="1" height="1" fill="#ffff00"/><rect x="15" y="4" width="1" height="1" fill="#000000"/><rect x="0" y="5" width="1" height="1" fill="#808080"/><rect x="1" y="5" width="11" height="1" fill="#ffffff"/><rect x="12" y="5" width="1" height="1" fill="#000000"/><rect x="13" y="5" width="1" height="1" fill="#ffff00"/><rect x="14" y="5" width="1" height="1" fill="#c0c0c0"/><rect x="15" y="5" width="1" height="1" fill="#000000"/><rect x="1" y="6" width="1" height="1" fill="#808080"/><rect x="2" y="6" width="1" height="1" fill="#ffffff"/><rect x="3" y="6" width="1" height="1" fill="#c0c0c0"/><rect x="4" y="6" width="1" height="1" fill="#ffff00"/><rect x="5" y="6" width="1" height="1" fill="#c0c0c0"/><rect x="6" y="6" width="1" height="1" fill="#ffff00"/><rect x="7" y="6" width="1" height="1" fill="#c0c0c0"/><rect x="8" y="6" width="1" height="1" fill="#ffff00"/><rect x="9" y="6" width="1" height="1" fill="#c0c0c0"/><rect x="10" y="6" width="1" height="1" fill="#ffff00"/><rect x="11" y="6" width="1" height="1" fill="#c0c0c0"/><rect x="12" y="6" width="1" height="1" fill="#ffff00"/><rect x="13" y="6" width="1" height="1" fill="#000000"/><rect x="14" y="6" width="1" height="1" fill="#ffff00"/><rect x="15" y="6" width="1" height="1" fill="#000000"/><rect x="1" y="7" width="1" height="1" fill="#808080"/><rect x="2" y="7" width="1" height="1" fill="#c0c0c0"/><rect x="3" y="7" width="1" height="1" fill="#ffff00"/><rect x="4" y="7" width="1" height="1" fill="#c0c0c0"/><rect x="5" y="7" width="1" height="1" fill="#ffff00"/><rect x="6" y="7" width="1" height="1" fill="#c0c0c0"/><rect x="7" y="7" width="1" height="1" fill="#ffff00"/><rect x="8" y="7" width="1" height="1" fill="#c0c0c0"/><rect x="9" y="7" width="1" height="1" fill="#ffff00"/><rect x="10" y="7" width="1" height="1" fill="#c0c0c0"/><rect x="11" y="7" width="1" height="1" fill="#ffff00"/><rect x="12" y="7" width="1" height="1" fill="#c0c0c0"/><rect x="13" y="7" width="1" height="1" fill="#ffff00"/><rect x="14" y="7" width="2" height="1" fill="#000000"/><rect x="2" y="8" width="1" height="1" fill="#808080"/><rect x="3" y="8" width="1" height="1" fill="#c0c0c0"/><rect x="4" y="8" width="1" height="1" fill="#ffff00"/><rect x="5" y="8" width="1" height="1" fill="#c0c0c0"/><rect x="6" y="8" width="1" height="1" fill="#ffff00"/><rect x="7" y="8" width="1" height="1" fill="#c0c0c0"/><rect x="8" y="8" width="1" height="1" fill="#ffff00"/><rect x="9" y="8" width="1" height="1" fill="#c0c0c0"/><rect x="10" y="8" width="1" height="1" fill="#ffff00"/><rect x="11" y="8" width="1" height="1" fill="#c0c0c0"/><rect x="12" y="8" width="1" height="1" fill="#ffff00"/><rect x="13" y="8" width="1" height="1" fill="#c0c0c0"/><rect x="14" y="8" width="2" height="1" fill="#000000"/><rect x="2" y="9" width="1" height="1" fill="#808080"/><rect x="3" y="9" width="1" height="1" fill="#ffff00"/><rect x="4" y="9" width="1" height="1" fill="#c0c0c0"/><rect x="5" y="9" width="1" height="1" fill="#ffff00"/><rect x="6" y="9" width="1" height="1" fill="#c0c0c0"/><rect x="7" y="9" width="1" height="1" fill="#ffff00"/><rect x="8" y="9" width="1" height="1" fill="#c0c0c0"/><rect x="9" y="9" width="1" height="1" fill="#ffff00"/><rect x="10" y="9" width="1" height="1" fill="#c0c0c0"/><rect x="11" y="9" width="1" height="1" fill="#ffff00"/><rect x="12" y="9" width="1" height="1" fill="#c0c0c0"/><rect x="13" y="9" width="1" height="1" fill="#ffff00"/><rect x="14" y="9" width="1" height="1" fill="#c0c0c0"/><rect x="15" y="9" width="1" height="1" fill="#000000"/><rect x="3" y="10" width="1" height="1" fill="#808080"/><rect x="4" y="10" width="1" height="1" fill="#ffff00"/><rect x="5" y="10" width="1" height="1" fill="#c0c0c0"/><rect x="6" y="10" width="1" height="1" fill="#ffff00"/><rect x="7" y="10" width="1" height="1" fill="#c0c0c0"/><rect x="8" y="10" width="1" height="1" fill="#ffff00"/><rect x="9" y="10" width="1" height="1" fill="#c0c0c0"/><rect x="10" y="10" width="1" height="1" fill="#ffff00"/><rect x="11" y="10" width="1" height="1" fill="#c0c0c0"/><rect x="12" y="10" width="1" height="1" fill="#ffff00"/><rect x="13" y="10" width="1" height="1" fill="#c0c0c0"/><rect x="14" y="10" width="1" height="1" fill="#ffff00"/><rect x="15" y="10" width="1" height="1" fill="#000000"/><rect x="3" y="11" width="13" height="1" fill="#000000"/></svg>
<div class="t" style="left:98.0px;top:129px;font-size:12px;line-height:14px;color:#000;font-weight:400;letter-spacing:0.378px;">Basic Functions</div>
<div style="left:218px;top:125px;width:22px;height:21px;background:#000;"></div>
<div style="left:218px;top:125px;width:21px;height:20px;background:#fff;"></div>
<div style="left:219px;top:126px;width:20px;height:19px;background:#808080;"></div>
<div style="left:219px;top:126px;width:19px;height:18px;background:#c0c0c0;"></div>
<svg style="left:222px;top:128px" width="15" height="12" viewBox="0 0 15 12" shape-rendering="crispEdges"><rect x="2" y="0" width="6" height="1" fill="#000000"/><rect x="1" y="1" width="1" height="1" fill="#000000"/><rect x="2" y="1" width="6" height="1" fill="#ffff99"/><rect x="8" y="1" width="1" height="1" fill="#000000"/><rect x="0" y="2" width="15" height="1" fill="#000000"/><rect x="0" y="3" width="1" height="1" fill="#000000"/><rect x="1" y="3" width="1" height="1" fill="#ffff00"/><rect x="2" y="3" width="1" height="1" fill="#fff"/><rect x="3" y="3" width="1" height="1" fill="#ffff00"/><rect x="4" y="3" width="1" height="1" fill="#fff"/><rect x="5" y="3" width="1" height="1" fill="#000000"/><rect x="6" y="3" width="1" height="1" fill="#fff"/><rect x="7" y="3" width="1" height="1" fill="#ffff00"/><rect x="8" y="3" width="1" height="1" fill="#fff"/><rect x="9" y="3" width="1" height="1" fill="#ffff00"/><rect x="10" y="3" width="1" height="1" fill="#fff"/><rect x="11" y="3" width="1" height="1" fill="#ffff00"/><rect x="12" y="3" width="1" height="1" fill="#fff"/><rect x="13" y="3" width="1" height="1" fill="#ffff00"/><rect x="14" y="3" width="1" height="1" fill="#000000"/><rect x="0" y="4" width="1" height="1" fill="#000000"/><rect x="1" y="4" width="1" height="1" fill="#fff"/><rect x="2" y="4" width="1" height="1" fill="#ffff00"/><rect x="3" y="4" width="1" height="1" fill="#fff"/><rect x="4" y="4" width="3" height="1" fill="#000000"/><rect x="7" y="4" width="1" height="1" fill="#fff"/><rect x="8" y="4" width="1" height="1" fill="#ffff00"/><rect x="9" y="4" width="1" height="1" fill="#fff"/><rect x="10" y="4" width="1" height="1" fill="#ffff00"/><rect x="11" y="4" width="1" height="1" fill="#fff"/><rect x="12" y="4" width="1" height="1" fill="#ffff00"/><rect x="13" y="4" width="1" height="1" fill="#fff"/><rect x="14" y="4" width="1" height="1" fill="#000000"/><rect x="0" y="5" width="1" height="1" fill="#000000"/><rect x="1" y="5" width="1" height="1" fill="#ffff00"/><rect x="2" y="5" width="1" height="1" fill="#fff"/><rect x="3" y="5" width="5" height="1" fill="#000000"/><rect x="8" y="5" width="1" height="1" fill="#fff"/><rect x="9" y="5" width="1" height="1" fill="#ffff00"/><rect x="10" y="5" width="1" height="1" fill="#fff"/><rect x="11" y="5" width="1" height="1" fill="#ffff00"/><rect x="12" y="5" width="1" height="1" fill="#fff"/><rect x="13" y="5" width="1" height="1" fill="#ffff00"/><rect x="14" y="5" width="1" height="1" fill="#000000"/><rect x="0" y="6" width="1" height="1" fill="#000000"/><rect x="1" y="6" width="1" height="1" fill="#fff"/><rect x="2" y="6" width="1" height="1" fill="#ffff00"/><rect x="3" y="6" width="1" height="1" fill="#fff"/><rect x="4" y="6" width="1" height="1" fill="#ffff00"/><rect x="5" y="6" width="1" height="1" fill="#000000"/><rect x="6" y="6" width="1" height="1" fill="#ffff00"/><rect x="7" y="6" width="1" height="1" fill="#fff"/><rect x="8" y="6" width="1" height="1" fill="#ffff00"/><rect x="9" y="6" width="1" height="1" fill="#fff"/><rect x="10" y="6" width="1" height="1" fill="#ffff00"/><rect x="11" y="6" width="1" height="1" fill="#fff"/><rect x="12" y="6" width="1" height="1" fill="#ffff00"/><rect x="13" y="6" width="1" height="1" fill="#fff"/><rect x="14" y="6" width="1" height="1" fill="#000000"/><rect x="0" y="7" width="1" height="1" fill="#000000"/><rect x="1" y="7" width="1" height="1" fill="#ffff00"/><rect x="2" y="7" width="1" height="1" fill="#fff"/><rect x="3" y="7" width="1" height="1" fill="#ffff00"/><rect x="4" y="7" width="1" height="1" fill="#fff"/><rect x="5" y="7" width="1" height="1" fill="#000000"/><rect x="6" y="7" width="1" height="1" fill="#fff"/><rect x="7" y="7" width="1" height="1" fill="#ffff00"/><rect x="8" y="7" width="1" height="1" fill="#fff"/><rect x="9" y="7" width="1" height="1" fill="#ffff00"/><rect x="10" y="7" width="1" height="1" fill="#fff"/><rect x="11" y="7" width="1" height="1" fill="#ffff00"/><rect x="12" y="7" width="1" height="1" fill="#fff"/><rect x="13" y="7" width="1" height="1" fill="#ffff00"/><rect x="14" y="7" width="1" height="1" fill="#000000"/><rect x="0" y="8" width="1" height="1" fill="#000000"/><rect x="1" y="8" width="1" height="1" fill="#fff"/><rect x="2" y="8" width="1" height="1" fill="#ffff00"/><rect x="3" y="8" width="1" height="1" fill="#fff"/><rect x="4" y="8" width="1" height="1" fill="#ffff00"/><rect x="5" y="8" width="1" height="1" fill="#000000"/><rect x="6" y="8" width="1" height="1" fill="#ffff00"/><rect x="7" y="8" width="1" height="1" fill="#fff"/><rect x="8" y="8" width="1" height="1" fill="#ffff00"/><rect x="9" y="8" width="1" height="1" fill="#fff"/><rect x="10" y="8" width="1" height="1" fill="#ffff00"/><rect x="11" y="8" width="1" height="1" fill="#fff"/><rect x="12" y="8" width="1" height="1" fill="#ffff00"/><rect x="13" y="8" width="1" height="1" fill="#fff"/><rect x="14" y="8" width="1" height="1" fill="#000000"/><rect x="0" y="9" width="1" height="1" fill="#000000"/><rect x="1" y="9" width="1" height="1" fill="#ffff00"/><rect x="2" y="9" width="1" height="1" fill="#fff"/><rect x="3" y="9" width="1" height="1" fill="#ffff00"/><rect x="4" y="9" width="1" height="1" fill="#fff"/><rect x="5" y="9" width="7" height="1" fill="#000000"/><rect x="12" y="9" width="1" height="1" fill="#fff"/><rect x="13" y="9" width="1" height="1" fill="#ffff00"/><rect x="14" y="9" width="1" height="1" fill="#000000"/><rect x="0" y="10" width="1" height="1" fill="#000000"/><rect x="1" y="10" width="1" height="1" fill="#fff"/><rect x="2" y="10" width="1" height="1" fill="#ffff00"/><rect x="3" y="10" width="1" height="1" fill="#fff"/><rect x="4" y="10" width="1" height="1" fill="#ffff00"/><rect x="5" y="10" width="1" height="1" fill="#fff"/><rect x="6" y="10" width="1" height="1" fill="#ffff00"/><rect x="7" y="10" width="1" height="1" fill="#fff"/><rect x="8" y="10" width="1" height="1" fill="#ffff00"/><rect x="9" y="10" width="1" height="1" fill="#fff"/><rect x="10" y="10" width="1" height="1" fill="#ffff00"/><rect x="11" y="10" width="1" height="1" fill="#fff"/><rect x="12" y="10" width="1" height="1" fill="#ffff00"/><rect x="13" y="10" width="1" height="1" fill="#fff"/><rect x="14" y="10" width="1" height="1" fill="#000000"/><rect x="0" y="11" width="15" height="1" fill="#000000"/></svg>
<div class="t" style="left:18.7px;top:152px;font-size:12px;line-height:14px;color:#000;font-weight:400;letter-spacing:0.614px;">Find:</div>
<div style="left:29px;top:164px;width:7px;height:1px;background:#000;"></div>
<div style="left:51px;top:151px;width:40px;height:19px;background:#fff;"></div>
<div style="left:51px;top:151px;width:39px;height:18px;background:#808080;"></div>
<div style="left:52px;top:152px;width:38px;height:17px;background:#c0c0c0;"></div>
<div style="left:52px;top:152px;width:37px;height:16px;background:#000;"></div>
<div style="left:53px;top:153px;width:36px;height:15px;background:#fff;"></div>
<div style="left:14px;top:173px;width:233px;height:1px;background:#808080;"></div>
<div style="left:14px;top:174px;width:233px;height:1px;background:#fff;"></div>
<div style="left:15px;top:175px;width:231px;height:273px;background:#fff;"></div>
<div style="left:15px;top:174px;width:231px;height:20px;background:#000;"></div>
<div style="left:15px;top:174px;width:231px;height:19px;background:#fff;"></div>
<div style="left:16px;top:175px;width:230px;height:18px;background:#c0c0c0;"></div>
<div class="t" style="left:20.6px;top:177px;font-size:12px;line-height:14px;color:#000;font-weight:400;letter-spacing:0.688px;">Name</div>
<svg style="left:71px;top:180px" width="4" height="7" viewBox="0 0 4 7" shape-rendering="crispEdges"><rect x="3" y="0" width="1" height="1" fill="#808080"/><rect x="2" y="1" width="1" height="2" fill="#808080"/><rect x="1" y="3" width="1" height="2" fill="#808080"/><rect x="0" y="5" width="1" height="1" fill="#808080"/><rect x="1" y="6" width="3" height="1" fill="#fff"/></svg>
<svg style="left:17px;top:194px" width="16" height="16" viewBox="0 0 16 16" shape-rendering="crispEdges"><rect x="4" y="0" width="1" height="1" fill="#000000"/><rect x="13" y="0" width="1" height="1" fill="#000000"/><rect x="2" y="1" width="5" height="1" fill="#000000"/><rect x="1" y="2" width="1" height="1" fill="#000000"/><rect x="2" y="2" width="5" height="1" fill="#ffff00"/><rect x="7" y="2" width="1" height="1" fill="#000000"/><rect x="11" y="2" width="5" height="1" fill="#000000"/><rect x="0" y="3" width="1" height="1" fill="#000000"/><rect x="1" y="3" width="7" height="1" fill="#ffff00"/><rect x="8" y="3" width="1" height="1" fill="#000000"/><rect x="0" y="4" width="1" height="1" fill="#000000"/><rect x="1" y="4" width="3" height="1" fill="#ffff00"/><rect x="4" y="4" width="1" height="1" fill="#000000"/><rect x="5" y="4" width="3" height="1" fill="#ffff00"/><rect x="8" y="4" width="1" height="1" fill="#000000"/><rect x="13" y="4" width="1" height="1" fill="#000000"/><rect x="0" y="5" width="2" height="1" fill="#000000"/><rect x="2" y="5" width="1" height="1" fill="#ffff00"/><rect x="3" y="5" width="1" height="1" fill="#000000"/><rect x="4" y="5" width="1" height="1" fill="#ffffff"/><rect x="5" y="5" width="1" height="1" fill="#000000"/><rect x="6" y="5" width="1" height="1" fill="#ffff00"/><rect x="7" y="5" width="2" height="1" fill="#000000"/><rect x="10" y="5" width="1" height="1" fill="#000000"/><rect x="0" y="6" width="1" height="1" fill="#000000"/><rect x="1" y="6" width="3" height="1" fill="#ffff00"/><rect x="4" y="6" width="1" height="1" fill="#000000"/><rect x="5" y="6" width="3" height="1" fill="#ffff00"/><rect x="8" y="6" width="5" height="1" fill="#000000"/><rect x="0" y="7" width="1" height="1" fill="#000000"/><rect x="1" y="7" width="6" height="1" fill="#ffff00"/><rect x="7" y="7" width="1" height="1" fill="#000000"/><rect x="8" y="7" width="5" height="1" fill="#0000ff"/><rect x="13" y="7" width="1" height="1" fill="#000000"/><rect x="1" y="8" width="1" height="1" fill="#000000"/><rect x="2" y="8" width="4" height="1" fill="#ffff00"/><rect x="6" y="8" width="1" height="1" fill="#000000"/><rect x="7" y="8" width="7" height="1" fill="#0000ff"/><rect x="14" y="8" width="1" height="1" fill="#000000"/><rect x="2" y="9" width="5" height="1" fill="#000000"/><rect x="7" y="9" width="3" height="1" fill="#0000ff"/><rect x="10" y="9" width="1" height="1" fill="#000000"/><rect x="11" y="9" width="3" height="1" fill="#0000ff"/><rect x="14" y="9" width="1" height="1" fill="#000000"/><rect x="4" y="10" width="1" height="1" fill="#000000"/><rect x="6" y="10" width="2" height="1" fill="#000000"/><rect x="8" y="10" width="1" height="1" fill="#0000ff"/><rect x="9" y="10" width="1" height="1" fill="#000000"/><rect x="10" y="10" width="1" height="1" fill="#ffffff"/><rect x="11" y="10" width="1" height="1" fill="#000000"/><rect x="12" y="10" width="1" height="1" fill="#0000ff"/><rect x="13" y="10" width="2" height="1" fill="#000000"/><rect x="2" y="11" width="1" height="1" fill="#000000"/><rect x="6" y="11" width="1" height="1" fill="#000000"/><rect x="7" y="11" width="3" height="1" fill="#0000ff"/><rect x="10" y="11" width="1" height="1" fill="#000000"/><rect x="11" y="11" width="3" height="1" fill="#0000ff"/><rect x="14" y="11" width="1" height="1" fill="#000000"/><rect x="2" y="12" width="1" height="1" fill="#000000"/><rect x="6" y="12" width="1" height="1" fill="#000000"/><rect x="7" y="12" width="7" height="1" fill="#0000ff"/><rect x="14" y="12" width="1" height="1" fill="#000000"/><rect x="0" y="13" width="5" height="1" fill="#000000"/><rect x="7" y="13" width="1" height="1" fill="#000000"/><rect x="8" y="13" width="5" height="1" fill="#0000ff"/><rect x="13" y="13" width="1" height="1" fill="#000000"/><rect x="2" y="14" width="1" height="1" fill="#000000"/><rect x="8" y="14" width="5" height="1" fill="#000000"/><rect x="2" y="15" width="1" height="1" fill="#000000"/><rect x="10" y="15" width="1" height="1" fill="#000000"/></svg>
<div class="t" style="left:36px;top:195px;font-size:12px;line-height:14px;color:#000;font-weight:400;letter-spacing:-0.1px">Avg</div>
<svg style="left:17px;top:211px" width="16" height="16" viewBox="0 0 16 16" shape-rendering="crispEdges"><rect x="4" y="0" width="1" height="1" fill="#000000"/><rect x="13" y="0" width="1" height="1" fill="#000000"/><rect x="2" y="1" width="5" height="1" fill="#000000"/><rect x="1" y="2" width="1" height="1" fill="#000000"/><rect x="2" y="2" width="5" height="1" fill="#ffff00"/><rect x="7" y="2" width="1" height="1" fill="#000000"/><rect x="11" y="2" width="5" height="1" fill="#000000"/><rect x="0" y="3" width="1" height="1" fill="#000000"/><rect x="1" y="3" width="7" height="1" fill="#ffff00"/><rect x="8" y="3" width="1" height="1" fill="#000000"/><rect x="0" y="4" width="1" height="1" fill="#000000"/><rect x="1" y="4" width="3" height="1" fill="#ffff00"/><rect x="4" y="4" width="1" height="1" fill="#000000"/><rect x="5" y="4" width="3" height="1" fill="#ffff00"/><rect x="8" y="4" width="1" height="1" fill="#000000"/><rect x="13" y="4" width="1" height="1" fill="#000000"/><rect x="0" y="5" width="2" height="1" fill="#000000"/><rect x="2" y="5" width="1" height="1" fill="#ffff00"/><rect x="3" y="5" width="1" height="1" fill="#000000"/><rect x="4" y="5" width="1" height="1" fill="#ffffff"/><rect x="5" y="5" width="1" height="1" fill="#000000"/><rect x="6" y="5" width="1" height="1" fill="#ffff00"/><rect x="7" y="5" width="2" height="1" fill="#000000"/><rect x="10" y="5" width="1" height="1" fill="#000000"/><rect x="0" y="6" width="1" height="1" fill="#000000"/><rect x="1" y="6" width="3" height="1" fill="#ffff00"/><rect x="4" y="6" width="1" height="1" fill="#000000"/><rect x="5" y="6" width="3" height="1" fill="#ffff00"/><rect x="8" y="6" width="5" height="1" fill="#000000"/><rect x="0" y="7" width="1" height="1" fill="#000000"/><rect x="1" y="7" width="6" height="1" fill="#ffff00"/><rect x="7" y="7" width="1" height="1" fill="#000000"/><rect x="8" y="7" width="5" height="1" fill="#0000ff"/><rect x="13" y="7" width="1" height="1" fill="#000000"/><rect x="1" y="8" width="1" height="1" fill="#000000"/><rect x="2" y="8" width="4" height="1" fill="#ffff00"/><rect x="6" y="8" width="1" height="1" fill="#000000"/><rect x="7" y="8" width="7" height="1" fill="#0000ff"/><rect x="14" y="8" width="1" height="1" fill="#000000"/><rect x="2" y="9" width="5" height="1" fill="#000000"/><rect x="7" y="9" width="3" height="1" fill="#0000ff"/><rect x="10" y="9" width="1" height="1" fill="#000000"/><rect x="11" y="9" width="3" height="1" fill="#0000ff"/><rect x="14" y="9" width="1" height="1" fill="#000000"/><rect x="4" y="10" width="1" height="1" fill="#000000"/><rect x="6" y="10" width="2" height="1" fill="#000000"/><rect x="8" y="10" width="1" height="1" fill="#0000ff"/><rect x="9" y="10" width="1" height="1" fill="#000000"/><rect x="10" y="10" width="1" height="1" fill="#ffffff"/><rect x="11" y="10" width="1" height="1" fill="#000000"/><rect x="12" y="10" width="1" height="1" fill="#0000ff"/><rect x="13" y="10" width="2" height="1" fill="#000000"/><rect x="2" y="11" width="1" height="1" fill="#000000"/><rect x="6" y="11" width="1" height="1" fill="#000000"/><rect x="7" y="11" width="3" height="1" fill="#0000ff"/><rect x="10" y="11" width="1" height="1" fill="#000000"/><rect x="11" y="11" width="3" height="1" fill="#0000ff"/><rect x="14" y="11" width="1" height="1" fill="#000000"/><rect x="2" y="12" width="1" height="1" fill="#000000"/><rect x="6" y="12" width="1" height="1" fill="#000000"/><rect x="7" y="12" width="7" height="1" fill="#0000ff"/><rect x="14" y="12" width="1" height="1" fill="#000000"/><rect x="0" y="13" width="5" height="1" fill="#000000"/><rect x="7" y="13" width="1" height="1" fill="#000000"/><rect x="8" y="13" width="5" height="1" fill="#0000ff"/><rect x="13" y="13" width="1" height="1" fill="#000000"/><rect x="2" y="14" width="1" height="1" fill="#000000"/><rect x="8" y="14" width="5" height="1" fill="#000000"/><rect x="2" y="15" width="1" height="1" fill="#000000"/><rect x="10" y="15" width="1" height="1" fill="#000000"/></svg>
<div class="t" style="left:36px;top:212px;font-size:12px;line-height:14px;color:#000;font-weight:400;letter-spacing:-0.1px">Count</div>
<svg style="left:17px;top:228px" width="16" height="16" viewBox="0 0 16 16" shape-rendering="crispEdges"><rect x="4" y="0" width="1" height="1" fill="#000000"/><rect x="13" y="0" width="1" height="1" fill="#000000"/><rect x="2" y="1" width="5" height="1" fill="#000000"/><rect x="1" y="2" width="1" height="1" fill="#000000"/><rect x="2" y="2" width="5" height="1" fill="#ffff00"/><rect x="7" y="2" width="1" height="1" fill="#000000"/><rect x="11" y="2" width="5" height="1" fill="#000000"/><rect x="0" y="3" width="1" height="1" fill="#000000"/><rect x="1" y="3" width="7" height="1" fill="#ffff00"/><rect x="8" y="3" width="1" height="1" fill="#000000"/><rect x="0" y="4" width="1" height="1" fill="#000000"/><rect x="1" y="4" width="3" height="1" fill="#ffff00"/><rect x="4" y="4" width="1" height="1" fill="#000000"/><rect x="5" y="4" width="3" height="1" fill="#ffff00"/><rect x="8" y="4" width="1" height="1" fill="#000000"/><rect x="13" y="4" width="1" height="1" fill="#000000"/><rect x="0" y="5" width="2" height="1" fill="#000000"/><rect x="2" y="5" width="1" height="1" fill="#ffff00"/><rect x="3" y="5" width="1" height="1" fill="#000000"/><rect x="4" y="5" width="1" height="1" fill="#ffffff"/><rect x="5" y="5" width="1" height="1" fill="#000000"/><rect x="6" y="5" width="1" height="1" fill="#ffff00"/><rect x="7" y="5" width="2" height="1" fill="#000000"/><rect x="10" y="5" width="1" height="1" fill="#000000"/><rect x="0" y="6" width="1" height="1" fill="#000000"/><rect x="1" y="6" width="3" height="1" fill="#ffff00"/><rect x="4" y="6" width="1" height="1" fill="#000000"/><rect x="5" y="6" width="3" height="1" fill="#ffff00"/><rect x="8" y="6" width="5" height="1" fill="#000000"/><rect x="0" y="7" width="1" height="1" fill="#000000"/><rect x="1" y="7" width="6" height="1" fill="#ffff00"/><rect x="7" y="7" width="1" height="1" fill="#000000"/><rect x="8" y="7" width="5" height="1" fill="#0000ff"/><rect x="13" y="7" width="1" height="1" fill="#000000"/><rect x="1" y="8" width="1" height="1" fill="#000000"/><rect x="2" y="8" width="4" height="1" fill="#ffff00"/><rect x="6" y="8" width="1" height="1" fill="#000000"/><rect x="7" y="8" width="7" height="1" fill="#0000ff"/><rect x="14" y="8" width="1" height="1" fill="#000000"/><rect x="2" y="9" width="5" height="1" fill="#000000"/><rect x="7" y="9" width="3" height="1" fill="#0000ff"/><rect x="10" y="9" width="1" height="1" fill="#000000"/><rect x="11" y="9" width="3" height="1" fill="#0000ff"/><rect x="14" y="9" width="1" height="1" fill="#000000"/><rect x="4" y="10" width="1" height="1" fill="#000000"/><rect x="6" y="10" width="2" height="1" fill="#000000"/><rect x="8" y="10" width="1" height="1" fill="#0000ff"/><rect x="9" y="10" width="1" height="1" fill="#000000"/><rect x="10" y="10" width="1" height="1" fill="#ffffff"/><rect x="11" y="10" width="1" height="1" fill="#000000"/><rect x="12" y="10" width="1" height="1" fill="#0000ff"/><rect x="13" y="10" width="2" height="1" fill="#000000"/><rect x="2" y="11" width="1" height="1" fill="#000000"/><rect x="6" y="11" width="1" height="1" fill="#000000"/><rect x="7" y="11" width="3" height="1" fill="#0000ff"/><rect x="10" y="11" width="1" height="1" fill="#000000"/><rect x="11" y="11" width="3" height="1" fill="#0000ff"/><rect x="14" y="11" width="1" height="1" fill="#000000"/><rect x="2" y="12" width="1" height="1" fill="#000000"/><rect x="6" y="12" width="1" height="1" fill="#000000"/><rect x="7" y="12" width="7" height="1" fill="#0000ff"/><rect x="14" y="12" width="1" height="1" fill="#000000"/><rect x="0" y="13" width="5" height="1" fill="#000000"/><rect x="7" y="13" width="1" height="1" fill="#000000"/><rect x="8" y="13" width="5" height="1" fill="#0000ff"/><rect x="13" y="13" width="1" height="1" fill="#000000"/><rect x="2" y="14" width="1" height="1" fill="#000000"/><rect x="8" y="14" width="5" height="1" fill="#000000"/><rect x="2" y="15" width="1" height="1" fill="#000000"/><rect x="10" y="15" width="1" height="1" fill="#000000"/></svg>
<div class="t" style="left:36px;top:229px;font-size:12px;line-height:14px;color:#000;font-weight:400;letter-spacing:-0.1px">GeoMean</div>
<svg style="left:17px;top:245px" width="16" height="16" viewBox="0 0 16 16" shape-rendering="crispEdges"><rect x="4" y="0" width="1" height="1" fill="#000000"/><rect x="13" y="0" width="1" height="1" fill="#000000"/><rect x="2" y="1" width="5" height="1" fill="#000000"/><rect x="1" y="2" width="1" height="1" fill="#000000"/><rect x="2" y="2" width="5" height="1" fill="#ffff00"/><rect x="7" y="2" width="1" height="1" fill="#000000"/><rect x="11" y="2" width="5" height="1" fill="#000000"/><rect x="0" y="3" width="1" height="1" fill="#000000"/><rect x="1" y="3" width="7" height="1" fill="#ffff00"/><rect x="8" y="3" width="1" height="1" fill="#000000"/><rect x="0" y="4" width="1" height="1" fill="#000000"/><rect x="1" y="4" width="3" height="1" fill="#ffff00"/><rect x="4" y="4" width="1" height="1" fill="#000000"/><rect x="5" y="4" width="3" height="1" fill="#ffff00"/><rect x="8" y="4" width="1" height="1" fill="#000000"/><rect x="13" y="4" width="1" height="1" fill="#000000"/><rect x="0" y="5" width="2" height="1" fill="#000000"/><rect x="2" y="5" width="1" height="1" fill="#ffff00"/><rect x="3" y="5" width="1" height="1" fill="#000000"/><rect x="4" y="5" width="1" height="1" fill="#ffffff"/><rect x="5" y="5" width="1" height="1" fill="#000000"/><rect x="6" y="5" width="1" height="1" fill="#ffff00"/><rect x="7" y="5" width="2" height="1" fill="#000000"/><rect x="10" y="5" width="1" height="1" fill="#000000"/><rect x="0" y="6" width="1" height="1" fill="#000000"/><rect x="1" y="6" width="3" height="1" fill="#ffff00"/><rect x="4" y="6" width="1" height="1" fill="#000000"/><rect x="5" y="6" width="3" height="1" fill="#ffff00"/><rect x="8" y="6" width="5" height="1" fill="#000000"/><rect x="0" y="7" width="1" height="1" fill="#000000"/><rect x="1" y="7" width="6" height="1" fill="#ffff00"/><rect x="7" y="7" width="1" height="1" fill="#000000"/><rect x="8" y="7" width="5" height="1" fill="#0000ff"/><rect x="13" y="7" width="1" height="1" fill="#000000"/><rect x="1" y="8" width="1" height="1" fill="#000000"/><rect x="2" y="8" width="4" height="1" fill="#ffff00"/><rect x="6" y="8" width="1" height="1" fill="#000000"/><rect x="7" y="8" width="7" height="1" fill="#0000ff"/><rect x="14" y="8" width="1" height="1" fill="#000000"/><rect x="2" y="9" width="5" height="1" fill="#000000"/><rect x="7" y="9" width="3" height="1" fill="#0000ff"/><rect x="10" y="9" width="1" height="1" fill="#000000"/><rect x="11" y="9" width="3" height="1" fill="#0000ff"/><rect x="14" y="9" width="1" height="1" fill="#000000"/><rect x="4" y="10" width="1" height="1" fill="#000000"/><rect x="6" y="10" width="2" height="1" fill="#000000"/><rect x="8" y="10" width="1" height="1" fill="#0000ff"/><rect x="9" y="10" width="1" height="1" fill="#000000"/><rect x="10" y="10" width="1" height="1" fill="#ffffff"/><rect x="11" y="10" width="1" height="1" fill="#000000"/><rect x="12" y="10" width="1" height="1" fill="#0000ff"/><rect x="13" y="10" width="2" height="1" fill="#000000"/><rect x="2" y="11" width="1" height="1" fill="#000000"/><rect x="6" y="11" width="1" height="1" fill="#000000"/><rect x="7" y="11" width="3" height="1" fill="#0000ff"/><rect x="10" y="11" width="1" height="1" fill="#000000"/><rect x="11" y="11" width="3" height="1" fill="#0000ff"/><rect x="14" y="11" width="1" height="1" fill="#000000"/><rect x="2" y="12" width="1" height="1" fill="#000000"/><rect x="6" y="12" width="1" height="1" fill="#000000"/><rect x="7" y="12" width="7" height="1" fill="#0000ff"/><rect x="14" y="12" width="1" height="1" fill="#000000"/><rect x="0" y="13" width="5" height="1" fill="#000000"/><rect x="7" y="13" width="1" height="1" fill="#000000"/><rect x="8" y="13" width="5" height="1" fill="#0000ff"/><rect x="13" y="13" width="1" height="1" fill="#000000"/><rect x="2" y="14" width="1" height="1" fill="#000000"/><rect x="8" y="14" width="5" height="1" fill="#000000"/><rect x="2" y="15" width="1" height="1" fill="#000000"/><rect x="10" y="15" width="1" height="1" fill="#000000"/></svg>
<div class="t" style="left:36px;top:246px;font-size:12px;line-height:14px;color:#000;font-weight:400;letter-spacing:-0.1px">Max</div>
<svg style="left:17px;top:262px" width="16" height="16" viewBox="0 0 16 16" shape-rendering="crispEdges"><rect x="4" y="0" width="1" height="1" fill="#000000"/><rect x="13" y="0" width="1" height="1" fill="#000000"/><rect x="2" y="1" width="5" height="1" fill="#000000"/><rect x="1" y="2" width="1" height="1" fill="#000000"/><rect x="2" y="2" width="5" height="1" fill="#ffff00"/><rect x="7" y="2" width="1" height="1" fill="#000000"/><rect x="11" y="2" width="5" height="1" fill="#000000"/><rect x="0" y="3" width="1" height="1" fill="#000000"/><rect x="1" y="3" width="7" height="1" fill="#ffff00"/><rect x="8" y="3" width="1" height="1" fill="#000000"/><rect x="0" y="4" width="1" height="1" fill="#000000"/><rect x="1" y="4" width="3" height="1" fill="#ffff00"/><rect x="4" y="4" width="1" height="1" fill="#000000"/><rect x="5" y="4" width="3" height="1" fill="#ffff00"/><rect x="8" y="4" width="1" height="1" fill="#000000"/><rect x="13" y="4" width="1" height="1" fill="#000000"/><rect x="0" y="5" width="2" height="1" fill="#000000"/><rect x="2" y="5" width="1" height="1" fill="#ffff00"/><rect x="3" y="5" width="1" height="1" fill="#000000"/><rect x="4" y="5" width="1" height="1" fill="#ffffff"/><rect x="5" y="5" width="1" height="1" fill="#000000"/><rect x="6" y="5" width="1" height="1" fill="#ffff00"/><rect x="7" y="5" width="2" height="1" fill="#000000"/><rect x="10" y="5" width="1" height="1" fill="#000000"/><rect x="0" y="6" width="1" height="1" fill="#000000"/><rect x="1" y="6" width="3" height="1" fill="#ffff00"/><rect x="4" y="6" width="1" height="1" fill="#000000"/><rect x="5" y="6" width="3" height="1" fill="#ffff00"/><rect x="8" y="6" width="5" height="1" fill="#000000"/><rect x="0" y="7" width="1" height="1" fill="#000000"/><rect x="1" y="7" width="6" height="1" fill="#ffff00"/><rect x="7" y="7" width="1" height="1" fill="#000000"/><rect x="8" y="7" width="5" height="1" fill="#0000ff"/><rect x="13" y="7" width="1" height="1" fill="#000000"/><rect x="1" y="8" width="1" height="1" fill="#000000"/><rect x="2" y="8" width="4" height="1" fill="#ffff00"/><rect x="6" y="8" width="1" height="1" fill="#000000"/><rect x="7" y="8" width="7" height="1" fill="#0000ff"/><rect x="14" y="8" width="1" height="1" fill="#000000"/><rect x="2" y="9" width="5" height="1" fill="#000000"/><rect x="7" y="9" width="3" height="1" fill="#0000ff"/><rect x="10" y="9" width="1" height="1" fill="#000000"/><rect x="11" y="9" width="3" height="1" fill="#0000ff"/><rect x="14" y="9" width="1" height="1" fill="#000000"/><rect x="4" y="10" width="1" height="1" fill="#000000"/><rect x="6" y="10" width="2" height="1" fill="#000000"/><rect x="8" y="10" width="1" height="1" fill="#0000ff"/><rect x="9" y="10" width="1" height="1" fill="#000000"/><rect x="10" y="10" width="1" height="1" fill="#ffffff"/><rect x="11" y="10" width="1" height="1" fill="#000000"/><rect x="12" y="10" width="1" height="1" fill="#0000ff"/><rect x="13" y="10" width="2" height="1" fill="#000000"/><rect x="2" y="11" width="1" height="1" fill="#000000"/><rect x="6" y="11" width="1" height="1" fill="#000000"/><rect x="7" y="11" width="3" height="1" fill="#0000ff"/><rect x="10" y="11" width="1" height="1" fill="#000000"/><rect x="11" y="11" width="3" height="1" fill="#0000ff"/><rect x="14" y="11" width="1" height="1" fill="#000000"/><rect x="2" y="12" width="1" height="1" fill="#000000"/><rect x="6" y="12" width="1" height="1" fill="#000000"/><rect x="7" y="12" width="7" height="1" fill="#0000ff"/><rect x="14" y="12" width="1" height="1" fill="#000000"/><rect x="0" y="13" width="5" height="1" fill="#000000"/><rect x="7" y="13" width="1" height="1" fill="#000000"/><rect x="8" y="13" width="5" height="1" fill="#0000ff"/><rect x="13" y="13" width="1" height="1" fill="#000000"/><rect x="2" y="14" width="1" height="1" fill="#000000"/><rect x="8" y="14" width="5" height="1" fill="#000000"/><rect x="2" y="15" width="1" height="1" fill="#000000"/><rect x="10" y="15" width="1" height="1" fill="#000000"/></svg>
<div class="t" style="left:36px;top:263px;font-size:12px;line-height:14px;color:#000;font-weight:400;letter-spacing:-0.1px">Median</div>
<svg style="left:17px;top:279px" width="16" height="16" viewBox="0 0 16 16" shape-rendering="crispEdges"><rect x="4" y="0" width="1" height="1" fill="#000000"/><rect x="13" y="0" width="1" height="1" fill="#000000"/><rect x="2" y="1" width="5" height="1" fill="#000000"/><rect x="1" y="2" width="1" height="1" fill="#000000"/><rect x="2" y="2" width="5" height="1" fill="#ffff00"/><rect x="7" y="2" width="1" height="1" fill="#000000"/><rect x="11" y="2" width="5" height="1" fill="#000000"/><rect x="0" y="3" width="1" height="1" fill="#000000"/><rect x="1" y="3" width="7" height="1" fill="#ffff00"/><rect x="8" y="3" width="1" height="1" fill="#000000"/><rect x="0" y="4" width="1" height="1" fill="#000000"/><rect x="1" y="4" width="3" height="1" fill="#ffff00"/><rect x="4" y="4" width="1" height="1" fill="#000000"/><rect x="5" y="4" width="3" height="1" fill="#ffff00"/><rect x="8" y="4" width="1" height="1" fill="#000000"/><rect x="13" y="4" width="1" height="1" fill="#000000"/><rect x="0" y="5" width="2" height="1" fill="#000000"/><rect x="2" y="5" width="1" height="1" fill="#ffff00"/><rect x="3" y="5" width="1" height="1" fill="#000000"/><rect x="4" y="5" width="1" height="1" fill="#ffffff"/><rect x="5" y="5" width="1" height="1" fill="#000000"/><rect x="6" y="5" width="1" height="1" fill="#ffff00"/><rect x="7" y="5" width="2" height="1" fill="#000000"/><rect x="10" y="5" width="1" height="1" fill="#000000"/><rect x="0" y="6" width="1" height="1" fill="#000000"/><rect x="1" y="6" width="3" height="1" fill="#ffff00"/><rect x="4" y="6" width="1" height="1" fill="#000000"/><rect x="5" y="6" width="3" height="1" fill="#ffff00"/><rect x="8" y="6" width="5" height="1" fill="#000000"/><rect x="0" y="7" width="1" height="1" fill="#000000"/><rect x="1" y="7" width="6" height="1" fill="#ffff00"/><rect x="7" y="7" width="1" height="1" fill="#000000"/><rect x="8" y="7" width="5" height="1" fill="#0000ff"/><rect x="13" y="7" width="1" height="1" fill="#000000"/><rect x="1" y="8" width="1" height="1" fill="#000000"/><rect x="2" y="8" width="4" height="1" fill="#ffff00"/><rect x="6" y="8" width="1" height="1" fill="#000000"/><rect x="7" y="8" width="7" height="1" fill="#0000ff"/><rect x="14" y="8" width="1" height="1" fill="#000000"/><rect x="2" y="9" width="5" height="1" fill="#000000"/><rect x="7" y="9" width="3" height="1" fill="#0000ff"/><rect x="10" y="9" width="1" height="1" fill="#000000"/><rect x="11" y="9" width="3" height="1" fill="#0000ff"/><rect x="14" y="9" width="1" height="1" fill="#000000"/><rect x="4" y="10" width="1" height="1" fill="#000000"/><rect x="6" y="10" width="2" height="1" fill="#000000"/><rect x="8" y="10" width="1" height="1" fill="#0000ff"/><rect x="9" y="10" width="1" height="1" fill="#000000"/><rect x="10" y="10" width="1" height="1" fill="#ffffff"/><rect x="11" y="10" width="1" height="1" fill="#000000"/><rect x="12" y="10" width="1" height="1" fill="#0000ff"/><rect x="13" y="10" width="2" height="1" fill="#000000"/><rect x="2" y="11" width="1" height="1" fill="#000000"/><rect x="6" y="11" width="1" height="1" fill="#000000"/><rect x="7" y="11" width="3" height="1" fill="#0000ff"/><rect x="10" y="11" width="1" height="1" fill="#000000"/><rect x="11" y="11" width="3" height="1" fill="#0000ff"/><rect x="14" y="11" width="1" height="1" fill="#000000"/><rect x="2" y="12" width="1" height="1" fill="#000000"/><rect x="6" y="12" width="1" height="1" fill="#000000"/><rect x="7" y="12" width="7" height="1" fill="#0000ff"/><rect x="14" y="12" width="1" height="1" fill="#000000"/><rect x="0" y="13" width="5" height="1" fill="#000000"/><rect x="7" y="13" width="1" height="1" fill="#000000"/><rect x="8" y="13" width="5" height="1" fill="#0000ff"/><rect x="13" y="13" width="1" height="1" fill="#000000"/><rect x="2" y="14" width="1" height="1" fill="#000000"/><rect x="8" y="14" width="5" height="1" fill="#000000"/><rect x="2" y="15" width="1" height="1" fill="#000000"/><rect x="10" y="15" width="1" height="1" fill="#000000"/></svg>
<div class="t" style="left:36px;top:280px;font-size:12px;line-height:14px;color:#000;font-weight:400;letter-spacing:-0.1px">Min</div>
<svg style="left:17px;top:296px" width="16" height="16" viewBox="0 0 16 16" shape-rendering="crispEdges"><rect x="4" y="0" width="1" height="1" fill="#000000"/><rect x="13" y="0" width="1" height="1" fill="#000000"/><rect x="2" y="1" width="5" height="1" fill="#000000"/><rect x="1" y="2" width="1" height="1" fill="#000000"/><rect x="2" y="2" width="5" height="1" fill="#ffff00"/><rect x="7" y="2" width="1" height="1" fill="#000000"/><rect x="11" y="2" width="5" height="1" fill="#000000"/><rect x="0" y="3" width="1" height="1" fill="#000000"/><rect x="1" y="3" width="7" height="1" fill="#ffff00"/><rect x="8" y="3" width="1" height="1" fill="#000000"/><rect x="0" y="4" width="1" height="1" fill="#000000"/><rect x="1" y="4" width="3" height="1" fill="#ffff00"/><rect x="4" y="4" width="1" height="1" fill="#000000"/><rect x="5" y="4" width="3" height="1" fill="#ffff00"/><rect x="8" y="4" width="1" height="1" fill="#000000"/><rect x="13" y="4" width="1" height="1" fill="#000000"/><rect x="0" y="5" width="2" height="1" fill="#000000"/><rect x="2" y="5" width="1" height="1" fill="#ffff00"/><rect x="3" y="5" width="1" height="1" fill="#000000"/><rect x="4" y="5" width="1" height="1" fill="#ffffff"/><rect x="5" y="5" width="1" height="1" fill="#000000"/><rect x="6" y="5" width="1" height="1" fill="#ffff00"/><rect x="7" y="5" width="2" height="1" fill="#000000"/><rect x="10" y="5" width="1" height="1" fill="#000000"/><rect x="0" y="6" width="1" height="1" fill="#000000"/><rect x="1" y="6" width="3" height="1" fill="#ffff00"/><rect x="4" y="6" width="1" height="1" fill="#000000"/><rect x="5" y="6" width="3" height="1" fill="#ffff00"/><rect x="8" y="6" width="5" height="1" fill="#000000"/><rect x="0" y="7" width="1" height="1" fill="#000000"/><rect x="1" y="7" width="6" height="1" fill="#ffff00"/><rect x="7" y="7" width="1" height="1" fill="#000000"/><rect x="8" y="7" width="5" height="1" fill="#0000ff"/><rect x="13" y="7" width="1" height="1" fill="#000000"/><rect x="1" y="8" width="1" height="1" fill="#000000"/><rect x="2" y="8" width="4" height="1" fill="#ffff00"/><rect x="6" y="8" width="1" height="1" fill="#000000"/><rect x="7" y="8" width="7" height="1" fill="#0000ff"/><rect x="14" y="8" width="1" height="1" fill="#000000"/><rect x="2" y="9" width="5" height="1" fill="#000000"/><rect x="7" y="9" width="3" height="1" fill="#0000ff"/><rect x="10" y="9" width="1" height="1" fill="#000000"/><rect x="11" y="9" width="3" height="1" fill="#0000ff"/><rect x="14" y="9" width="1" height="1" fill="#000000"/><rect x="4" y="10" width="1" height="1" fill="#000000"/><rect x="6" y="10" width="2" height="1" fill="#000000"/><rect x="8" y="10" width="1" height="1" fill="#0000ff"/><rect x="9" y="10" width="1" height="1" fill="#000000"/><rect x="10" y="10" width="1" height="1" fill="#ffffff"/><rect x="11" y="10" width="1" height="1" fill="#000000"/><rect x="12" y="10" width="1" height="1" fill="#0000ff"/><rect x="13" y="10" width="2" height="1" fill="#000000"/><rect x="2" y="11" width="1" height="1" fill="#000000"/><rect x="6" y="11" width="1" height="1" fill="#000000"/><rect x="7" y="11" width="3" height="1" fill="#0000ff"/><rect x="10" y="11" width="1" height="1" fill="#000000"/><rect x="11" y="11" width="3" height="1" fill="#0000ff"/><rect x="14" y="11" width="1" height="1" fill="#000000"/><rect x="2" y="12" width="1" height="1" fill="#000000"/><rect x="6" y="12" width="1" height="1" fill="#000000"/><rect x="7" y="12" width="7" height="1" fill="#0000ff"/><rect x="14" y="12" width="1" height="1" fill="#000000"/><rect x="0" y="13" width="5" height="1" fill="#000000"/><rect x="7" y="13" width="1" height="1" fill="#000000"/><rect x="8" y="13" width="5" height="1" fill="#0000ff"/><rect x="13" y="13" width="1" height="1" fill="#000000"/><rect x="2" y="14" width="1" height="1" fill="#000000"/><rect x="8" y="14" width="5" height="1" fill="#000000"/><rect x="2" y="15" width="1" height="1" fill="#000000"/><rect x="10" y="15" width="1" height="1" fill="#000000"/></svg>
<div class="t" style="left:36px;top:297px;font-size:12px;line-height:14px;color:#000;font-weight:400;letter-spacing:-0.1px">Mode</div>
<div class="t" style="left:99.5px;top:297px;font-size:12px;line-height:14px;color:#000;font-weight:400;letter-spacing:0.235px;">Function</div>
<div class="t" style="left:167.4px;top:297px;font-size:12px;line-height:14px;color:#000;font-weight:400;letter-spacing:0.006px;">00-06-06</div>
<svg style="left:220px;top:296px" width="22" height="13" viewBox="0 0 22 13" shape-rendering="crispEdges"><rect x="3" y="2" width="4" height="1" fill="#000"/><rect x="2" y="3" width="1" height="1" fill="#000"/><rect x="7" y="3" width="1" height="1" fill="#000"/><rect x="1" y="4" width="1" height="2" fill="#000"/><rect x="8" y="4" width="1" height="2" fill="#000"/><rect x="2" y="6" width="1" height="1" fill="#000"/><rect x="7" y="6" width="1" height="1" fill="#000"/><rect x="3" y="7" width="4" height="1" fill="#000"/><rect x="5" y="8" width="1" height="3" fill="#000"/><rect x="0" y="11" width="10" height="1" fill="#000"/><rect x="15" y="2" width="4" height="1" fill="#000"/><rect x="12" y="4" width="10" height="1" fill="#000"/><rect x="14" y="6" width="6" height="1" fill="#000"/><rect x="13" y="7" width="1" height="1" fill="#000"/><rect x="20" y="7" width="1" height="1" fill="#000"/><rect x="14" y="8" width="6" height="1" fill="#000"/><rect x="12" y="10" width="10" height="1" fill="#000"/><rect x="17" y="11" width="1" height="2" fill="#000"/></svg>
<svg style="left:17px;top:313px" width="16" height="16" viewBox="0 0 16 16" shape-rendering="crispEdges"><rect x="4" y="0" width="1" height="1" fill="#000000"/><rect x="13" y="0" width="1" height="1" fill="#000000"/><rect x="2" y="1" width="5" height="1" fill="#000000"/><rect x="1" y="2" width="1" height="1" fill="#000000"/><rect x="2" y="2" width="5" height="1" fill="#ffff00"/><rect x="7" y="2" width="1" height="1" fill="#000000"/><rect x="11" y="2" width="5" height="1" fill="#000000"/><rect x="0" y="3" width="1" height="1" fill="#000000"/><rect x="1" y="3" width="7" height="1" fill="#ffff00"/><rect x="8" y="3" width="1" height="1" fill="#000000"/><rect x="0" y="4" width="1" height="1" fill="#000000"/><rect x="1" y="4" width="3" height="1" fill="#ffff00"/><rect x="4" y="4" width="1" height="1" fill="#000000"/><rect x="5" y="4" width="3" height="1" fill="#ffff00"/><rect x="8" y="4" width="1" height="1" fill="#000000"/><rect x="13" y="4" width="1" height="1" fill="#000000"/><rect x="0" y="5" width="2" height="1" fill="#000000"/><rect x="2" y="5" width="1" height="1" fill="#ffff00"/><rect x="3" y="5" width="1" height="1" fill="#000000"/><rect x="4" y="5" width="1" height="1" fill="#ffffff"/><rect x="5" y="5" width="1" height="1" fill="#000000"/><rect x="6" y="5" width="1" height="1" fill="#ffff00"/><rect x="7" y="5" width="2" height="1" fill="#000000"/><rect x="10" y="5" width="1" height="1" fill="#000000"/><rect x="0" y="6" width="1" height="1" fill="#000000"/><rect x="1" y="6" width="3" height="1" fill="#ffff00"/><rect x="4" y="6" width="1" height="1" fill="#000000"/><rect x="5" y="6" width="3" height="1" fill="#ffff00"/><rect x="8" y="6" width="5" height="1" fill="#000000"/><rect x="0" y="7" width="1" height="1" fill="#000000"/><rect x="1" y="7" width="6" height="1" fill="#ffff00"/><rect x="7" y="7" width="1" height="1" fill="#000000"/><rect x="8" y="7" width="5" height="1" fill="#0000ff"/><rect x="13" y="7" width="1" height="1" fill="#000000"/><rect x="1" y="8" width="1" height="1" fill="#000000"/><rect x="2" y="8" width="4" height="1" fill="#ffff00"/><rect x="6" y="8" width="1" height="1" fill="#000000"/><rect x="7" y="8" width="7" height="1" fill="#0000ff"/><rect x="14" y="8" width="1" height="1" fill="#000000"/><rect x="2" y="9" width="5" height="1" fill="#000000"/><rect x="7" y="9" width="3" height="1" fill="#0000ff"/><rect x="10" y="9" width="1" height="1" fill="#000000"/><rect x="11" y="9" width="3" height="1" fill="#0000ff"/><rect x="14" y="9" width="1" height="1" fill="#000000"/><rect x="4" y="10" width="1" height="1" fill="#000000"/><rect x="6" y="10" width="2" height="1" fill="#000000"/><rect x="8" y="10" width="1" height="1" fill="#0000ff"/><rect x="9" y="10" width="1" height="1" fill="#000000"/><rect x="10" y="10" width="1" height="1" fill="#ffffff"/><rect x="11" y="10" width="1" height="1" fill="#000000"/><rect x="12" y="10" width="1" height="1" fill="#0000ff"/><rect x="13" y="10" width="2" height="1" fill="#000000"/><rect x="2" y="11" width="1" height="1" fill="#000000"/><rect x="6" y="11" width="1" height="1" fill="#000000"/><rect x="7" y="11" width="3" height="1" fill="#0000ff"/><rect x="10" y="11" width="1" height="1" fill="#000000"/><rect x="11" y="11" width="3" height="1" fill="#0000ff"/><rect x="14" y="11" width="1" height="1" fill="#000000"/><rect x="2" y="12" width="1" height="1" fill="#000000"/><rect x="6" y="12" width="1" height="1" fill="#000000"/><rect x="7" y="12" width="7" height="1" fill="#0000ff"/><rect x="14" y="12" width="1" height="1" fill="#000000"/><rect x="0" y="13" width="5" height="1" fill="#000000"/><rect x="7" y="13" width="1" height="1" fill="#000000"/><rect x="8" y="13" width="5" height="1" fill="#0000ff"/><rect x="13" y="13" width="1" height="1" fill="#000000"/><rect x="2" y="14" width="1" height="1" fill="#000000"/><rect x="8" y="14" width="5" height="1" fill="#000000"/><rect x="2" y="15" width="1" height="1" fill="#000000"/><rect x="10" y="15" width="1" height="1" fill="#000000"/></svg>
<div class="t" style="left:36px;top:314px;font-size:12px;line-height:14px;color:#000;font-weight:400;letter-spacing:-0.1px">Product</div>
<div class="t" style="left:99.5px;top:314px;font-size:12px;line-height:14px;color:#000;font-weight:400;letter-spacing:0.235px;">Function</div>
<div class="t" style="left:167.4px;top:314px;font-size:12px;line-height:14px;color:#000;font-weight:400;letter-spacing:0.006px;">00-06-06</div>
<svg style="left:220px;top:313px" width="22" height="13" viewBox="0 0 22 13" shape-rendering="crispEdges"><rect x="3" y="2" width="4" height="1" fill="#000"/><rect x="2" y="3" width="1" height="1" fill="#000"/><rect x="7" y="3" width="1" height="1" fill="#000"/><rect x="1" y="4" width="1" height="2" fill="#000"/><rect x="8" y="4" width="1" height="2" fill="#000"/><rect x="2" y="6" width="1" height="1" fill="#000"/><rect x="7" y="6" width="1" height="1" fill="#000"/><rect x="3" y="7" width="4" height="1" fill="#000"/><rect x="5" y="8" width="1" height="3" fill="#000"/><rect x="0" y="11" width="10" height="1" fill="#000"/><rect x="15" y="2" width="4" height="1" fill="#000"/><rect x="12" y="4" width="10" height="1" fill="#000"/><rect x="14" y="6" width="6" height="1" fill="#000"/><rect x="13" y="7" width="1" height="1" fill="#000"/><rect x="20" y="7" width="1" height="1" fill="#000"/><rect x="14" y="8" width="6" height="1" fill="#000"/><rect x="12" y="10" width="10" height="1" fill="#000"/><rect x="17" y="11" width="1" height="2" fill="#000"/></svg>
<svg style="left:17px;top:330px" width="16" height="16" viewBox="0 0 16 16" shape-rendering="crispEdges"><rect x="4" y="0" width="1" height="1" fill="#000000"/><rect x="13" y="0" width="1" height="1" fill="#000000"/><rect x="2" y="1" width="5" height="1" fill="#000000"/><rect x="1" y="2" width="1" height="1" fill="#000000"/><rect x="2" y="2" width="5" height="1" fill="#ffff00"/><rect x="7" y="2" width="1" height="1" fill="#000000"/><rect x="11" y="2" width="5" height="1" fill="#000000"/><rect x="0" y="3" width="1" height="1" fill="#000000"/><rect x="1" y="3" width="7" height="1" fill="#ffff00"/><rect x="8" y="3" width="1" height="1" fill="#000000"/><rect x="0" y="4" width="1" height="1" fill="#000000"/><rect x="1" y="4" width="3" height="1" fill="#ffff00"/><rect x="4" y="4" width="1" height="1" fill="#000000"/><rect x="5" y="4" width="3" height="1" fill="#ffff00"/><rect x="8" y="4" width="1" height="1" fill="#000000"/><rect x="13" y="4" width="1" height="1" fill="#000000"/><rect x="0" y="5" width="2" height="1" fill="#000000"/><rect x="2" y="5" width="1" height="1" fill="#ffff00"/><rect x="3" y="5" width="1" height="1" fill="#000000"/><rect x="4" y="5" width="1" height="1" fill="#ffffff"/><rect x="5" y="5" width="1" height="1" fill="#000000"/><rect x="6" y="5" width="1" height="1" fill="#ffff00"/><rect x="7" y="5" width="2" height="1" fill="#000000"/><rect x="10" y="5" width="1" height="1" fill="#000000"/><rect x="0" y="6" width="1" height="1" fill="#000000"/><rect x="1" y="6" width="3" height="1" fill="#ffff00"/><rect x="4" y="6" width="1" height="1" fill="#000000"/><rect x="5" y="6" width="3" height="1" fill="#ffff00"/><rect x="8" y="6" width="5" height="1" fill="#000000"/><rect x="0" y="7" width="1" height="1" fill="#000000"/><rect x="1" y="7" width="6" height="1" fill="#ffff00"/><rect x="7" y="7" width="1" height="1" fill="#000000"/><rect x="8" y="7" width="5" height="1" fill="#0000ff"/><rect x="13" y="7" width="1" height="1" fill="#000000"/><rect x="1" y="8" width="1" height="1" fill="#000000"/><rect x="2" y="8" width="4" height="1" fill="#ffff00"/><rect x="6" y="8" width="1" height="1" fill="#000000"/><rect x="7" y="8" width="7" height="1" fill="#0000ff"/><rect x="14" y="8" width="1" height="1" fill="#000000"/><rect x="2" y="9" width="5" height="1" fill="#000000"/><rect x="7" y="9" width="3" height="1" fill="#0000ff"/><rect x="10" y="9" width="1" height="1" fill="#000000"/><rect x="11" y="9" width="3" height="1" fill="#0000ff"/><rect x="14" y="9" width="1" height="1" fill="#000000"/><rect x="4" y="10" width="1" height="1" fill="#000000"/><rect x="6" y="10" width="2" height="1" fill="#000000"/><rect x="8" y="10" width="1" height="1" fill="#0000ff"/><rect x="9" y="10" width="1" height="1" fill="#000000"/><rect x="10" y="10" width="1" height="1" fill="#ffffff"/><rect x="11" y="10" width="1" height="1" fill="#000000"/><rect x="12" y="10" width="1" height="1" fill="#0000ff"/><rect x="13" y="10" width="2" height="1" fill="#000000"/><rect x="2" y="11" width="1" height="1" fill="#000000"/><rect x="6" y="11" width="1" height="1" fill="#000000"/><rect x="7" y="11" width="3" height="1" fill="#0000ff"/><rect x="10" y="11" width="1" height="1" fill="#000000"/><rect x="11" y="11" width="3" height="1" fill="#0000ff"/><rect x="14" y="11" width="1" height="1" fill="#000000"/><rect x="2" y="12" width="1" height="1" fill="#000000"/><rect x="6" y="12" width="1" height="1" fill="#000000"/><rect x="7" y="12" width="7" height="1" fill="#0000ff"/><rect x="14" y="12" width="1" height="1" fill="#000000"/><rect x="0" y="13" width="5" height="1" fill="#000000"/><rect x="7" y="13" width="1" height="1" fill="#000000"/><rect x="8" y="13" width="5" height="1" fill="#0000ff"/><rect x="13" y="13" width="1" height="1" fill="#000000"/><rect x="2" y="14" width="1" height="1" fill="#000000"/><rect x="8" y="14" width="5" height="1" fill="#000000"/><rect x="2" y="15" width="1" height="1" fill="#000000"/><rect x="10" y="15" width="1" height="1" fill="#000000"/></svg>
<div class="t" style="left:36px;top:331px;font-size:12px;line-height:14px;color:#000;font-weight:400;letter-spacing:-0.1px">Stdev</div>
<div class="t" style="left:99.5px;top:331px;font-size:12px;line-height:14px;color:#000;font-weight:400;letter-spacing:0.235px;">Function</div>
<div class="t" style="left:167.4px;top:331px;font-size:12px;line-height:14px;color:#000;font-weight:400;letter-spacing:0.006px;">00-06-06</div>
<svg style="left:220px;top:330px" width="22" height="13" viewBox="0 0 22 13" shape-rendering="crispEdges"><rect x="3" y="2" width="4" height="1" fill="#000"/><rect x="2" y="3" width="1" height="1" fill="#000"/><rect x="7" y="3" width="1" height="1" fill="#000"/><rect x="1" y="4" width="1" height="2" fill="#000"/><rect x="8" y="4" width="1" height="2" fill="#000"/><rect x="2" y="6" width="1" height="1" fill="#000"/><rect x="7" y="6" width="1" height="1" fill="#000"/><rect x="3" y="7" width="4" height="1" fill="#000"/><rect x="5" y="8" width="1" height="3" fill="#000"/><rect x="0" y="11" width="10" height="1" fill="#000"/><rect x="15" y="2" width="4" height="1" fill="#000"/><rect x="12" y="4" width="10" height="1" fill="#000"/><rect x="14" y="6" width="6" height="1" fill="#000"/><rect x="13" y="7" width="1" height="1" fill="#000"/><rect x="20" y="7" width="1" height="1" fill="#000"/><rect x="14" y="8" width="6" height="1" fill="#000"/><rect x="12" y="10" width="10" height="1" fill="#000"/><rect x="17" y="11" width="1" height="2" fill="#000"/></svg>
<svg style="left:17px;top:347px" width="16" height="16" viewBox="0 0 16 16" shape-rendering="crispEdges"><rect x="4" y="0" width="1" height="1" fill="#000000"/><rect x="13" y="0" width="1" height="1" fill="#000000"/><rect x="2" y="1" width="5" height="1" fill="#000000"/><rect x="1" y="2" width="1" height="1" fill="#000000"/><rect x="2" y="2" width="5" height="1" fill="#ffff00"/><rect x="7" y="2" width="1" height="1" fill="#000000"/><rect x="11" y="2" width="5" height="1" fill="#000000"/><rect x="0" y="3" width="1" height="1" fill="#000000"/><rect x="1" y="3" width="7" height="1" fill="#ffff00"/><rect x="8" y="3" width="1" height="1" fill="#000000"/><rect x="0" y="4" width="1" height="1" fill="#000000"/><rect x="1" y="4" width="3" height="1" fill="#ffff00"/><rect x="4" y="4" width="1" height="1" fill="#000000"/><rect x="5" y="4" width="3" height="1" fill="#ffff00"/><rect x="8" y="4" width="1" height="1" fill="#000000"/><rect x="13" y="4" width="1" height="1" fill="#000000"/><rect x="0" y="5" width="2" height="1" fill="#000000"/><rect x="2" y="5" width="1" height="1" fill="#ffff00"/><rect x="3" y="5" width="1" height="1" fill="#000000"/><rect x="4" y="5" width="1" height="1" fill="#ffffff"/><rect x="5" y="5" width="1" height="1" fill="#000000"/><rect x="6" y="5" width="1" height="1" fill="#ffff00"/><rect x="7" y="5" width="2" height="1" fill="#000000"/><rect x="10" y="5" width="1" height="1" fill="#000000"/><rect x="0" y="6" width="1" height="1" fill="#000000"/><rect x="1" y="6" width="3" height="1" fill="#ffff00"/><rect x="4" y="6" width="1" height="1" fill="#000000"/><rect x="5" y="6" width="3" height="1" fill="#ffff00"/><rect x="8" y="6" width="5" height="1" fill="#000000"/><rect x="0" y="7" width="1" height="1" fill="#000000"/><rect x="1" y="7" width="6" height="1" fill="#ffff00"/><rect x="7" y="7" width="1" height="1" fill="#000000"/><rect x="8" y="7" width="5" height="1" fill="#0000ff"/><rect x="13" y="7" width="1" height="1" fill="#000000"/><rect x="1" y="8" width="1" height="1" fill="#000000"/><rect x="2" y="8" width="4" height="1" fill="#ffff00"/><rect x="6" y="8" width="1" height="1" fill="#000000"/><rect x="7" y="8" width="7" height="1" fill="#0000ff"/><rect x="14" y="8" width="1" height="1" fill="#000000"/><rect x="2" y="9" width="5" height="1" fill="#000000"/><rect x="7" y="9" width="3" height="1" fill="#0000ff"/><rect x="10" y="9" width="1" height="1" fill="#000000"/><rect x="11" y="9" width="3" height="1" fill="#0000ff"/><rect x="14" y="9" width="1" height="1" fill="#000000"/><rect x="4" y="10" width="1" height="1" fill="#000000"/><rect x="6" y="10" width="2" height="1" fill="#000000"/><rect x="8" y="10" width="1" height="1" fill="#0000ff"/><rect x="9" y="10" width="1" height="1" fill="#000000"/><rect x="10" y="10" width="1" height="1" fill="#ffffff"/><rect x="11" y="10" width="1" height="1" fill="#000000"/><rect x="12" y="10" width="1" height="1" fill="#0000ff"/><rect x="13" y="10" width="2" height="1" fill="#000000"/><rect x="2" y="11" width="1" height="1" fill="#000000"/><rect x="6" y="11" width="1" height="1" fill="#000000"/><rect x="7" y="11" width="3" height="1" fill="#0000ff"/><rect x="10" y="11" width="1" height="1" fill="#000000"/><rect x="11" y="11" width="3" height="1" fill="#0000ff"/><rect x="14" y="11" width="1" height="1" fill="#000000"/><rect x="2" y="12" width="1" height="1" fill="#000000"/><rect x="6" y="12" width="1" height="1" fill="#000000"/><rect x="7" y="12" width="7" height="1" fill="#0000ff"/><rect x="14" y="12" width="1" height="1" fill="#000000"/><rect x="0" y="13" width="5" height="1" fill="#000000"/><rect x="7" y="13" width="1" height="1" fill="#000000"/><rect x="8" y="13" width="5" height="1" fill="#0000ff"/><rect x="13" y="13" width="1" height="1" fill="#000000"/><rect x="2" y="14" width="1" height="1" fill="#000000"/><rect x="8" y="14" width="5" height="1" fill="#000000"/><rect x="2" y="15" width="1" height="1" fill="#000000"/><rect x="10" y="15" width="1" height="1" fill="#000000"/></svg>
<div class="t" style="left:36px;top:348px;font-size:12px;line-height:14px;color:#000;font-weight:400;letter-spacing:-0.1px">StdevP</div>
<div class="t" style="left:99.5px;top:348px;font-size:12px;line-height:14px;color:#000;font-weight:400;letter-spacing:0.235px;">Function</div>
<div class="t" style="left:167.4px;top:348px;font-size:12px;line-height:14px;color:#000;font-weight:400;letter-spacing:0.006px;">00-06-06</div>
<svg style="left:220px;top:347px" width="22" height="13" viewBox="0 0 22 13" shape-rendering="crispEdges"><rect x="3" y="2" width="4" height="1" fill="#000"/><rect x="2" y="3" width="1" height="1" fill="#000"/><rect x="7" y="3" width="1" height="1" fill="#000"/><rect x="1" y="4" width="1" height="2" fill="#000"/><rect x="8" y="4" width="1" height="2" fill="#000"/><rect x="2" y="6" width="1" height="1" fill="#000"/><rect x="7" y="6" width="1" height="1" fill="#000"/><rect x="3" y="7" width="4" height="1" fill="#000"/><rect x="5" y="8" width="1" height="3" fill="#000"/><rect x="0" y="11" width="10" height="1" fill="#000"/><rect x="15" y="2" width="4" height="1" fill="#000"/><rect x="12" y="4" width="10" height="1" fill="#000"/><rect x="14" y="6" width="6" height="1" fill="#000"/><rect x="13" y="7" width="1" height="1" fill="#000"/><rect x="20" y="7" width="1" height="1" fill="#000"/><rect x="14" y="8" width="6" height="1" fill="#000"/><rect x="12" y="10" width="10" height="1" fill="#000"/><rect x="17" y="11" width="1" height="2" fill="#000"/></svg>
<svg style="left:17px;top:364px" width="16" height="16" viewBox="0 0 16 16" shape-rendering="crispEdges"><rect x="4" y="0" width="1" height="1" fill="#000000"/><rect x="13" y="0" width="1" height="1" fill="#000000"/><rect x="2" y="1" width="5" height="1" fill="#000000"/><rect x="1" y="2" width="1" height="1" fill="#000000"/><rect x="2" y="2" width="5" height="1" fill="#ffff00"/><rect x="7" y="2" width="1" height="1" fill="#000000"/><rect x="11" y="2" width="5" height="1" fill="#000000"/><rect x="0" y="3" width="1" height="1" fill="#000000"/><rect x="1" y="3" width="7" height="1" fill="#ffff00"/><rect x="8" y="3" width="1" height="1" fill="#000000"/><rect x="0" y="4" width="1" height="1" fill="#000000"/><rect x="1" y="4" width="3" height="1" fill="#ffff00"/><rect x="4" y="4" width="1" height="1" fill="#000000"/><rect x="5" y="4" width="3" height="1" fill="#ffff00"/><rect x="8" y="4" width="1" height="1" fill="#000000"/><rect x="13" y="4" width="1" height="1" fill="#000000"/><rect x="0" y="5" width="2" height="1" fill="#000000"/><rect x="2" y="5" width="1" height="1" fill="#ffff00"/><rect x="3" y="5" width="1" height="1" fill="#000000"/><rect x="4" y="5" width="1" height="1" fill="#ffffff"/><rect x="5" y="5" width="1" height="1" fill="#000000"/><rect x="6" y="5" width="1" height="1" fill="#ffff00"/><rect x="7" y="5" width="2" height="1" fill="#000000"/><rect x="10" y="5" width="1" height="1" fill="#000000"/><rect x="0" y="6" width="1" height="1" fill="#000000"/><rect x="1" y="6" width="3" height="1" fill="#ffff00"/><rect x="4" y="6" width="1" height="1" fill="#000000"/><rect x="5" y="6" width="3" height="1" fill="#ffff00"/><rect x="8" y="6" width="5" height="1" fill="#000000"/><rect x="0" y="7" width="1" height="1" fill="#000000"/><rect x="1" y="7" width="6" height="1" fill="#ffff00"/><rect x="7" y="7" width="1" height="1" fill="#000000"/><rect x="8" y="7" width="5" height="1" fill="#0000ff"/><rect x="13" y="7" width="1" height="1" fill="#000000"/><rect x="1" y="8" width="1" height="1" fill="#000000"/><rect x="2" y="8" width="4" height="1" fill="#ffff00"/><rect x="6" y="8" width="1" height="1" fill="#000000"/><rect x="7" y="8" width="7" height="1" fill="#0000ff"/><rect x="14" y="8" width="1" height="1" fill="#000000"/><rect x="2" y="9" width="5" height="1" fill="#000000"/><rect x="7" y="9" width="3" height="1" fill="#0000ff"/><rect x="10" y="9" width="1" height="1" fill="#000000"/><rect x="11" y="9" width="3" height="1" fill="#0000ff"/><rect x="14" y="9" width="1" height="1" fill="#000000"/><rect x="4" y="10" width="1" height="1" fill="#000000"/><rect x="6" y="10" width="2" height="1" fill="#000000"/><rect x="8" y="10" width="1" height="1" fill="#0000ff"/><rect x="9" y="10" width="1" height="1" fill="#000000"/><rect x="10" y="10" width="1" height="1" fill="#ffffff"/><rect x="11" y="10" width="1" height="1" fill="#000000"/><rect x="12" y="10" width="1" height="1" fill="#0000ff"/><rect x="13" y="10" width="2" height="1" fill="#000000"/><rect x="2" y="11" width="1" height="1" fill="#000000"/><rect x="6" y="11" width="1" height="1" fill="#000000"/><rect x="7" y="11" width="3" height="1" fill="#0000ff"/><rect x="10" y="11" width="1" height="1" fill="#000000"/><rect x="11" y="11" width="3" height="1" fill="#0000ff"/><rect x="14" y="11" width="1" height="1" fill="#000000"/><rect x="2" y="12" width="1" height="1" fill="#000000"/><rect x="6" y="12" width="1" height="1" fill="#000000"/><rect x="7" y="12" width="7" height="1" fill="#0000ff"/><rect x="14" y="12" width="1" height="1" fill="#000000"/><rect x="0" y="13" width="5" height="1" fill="#000000"/><rect x="7" y="13" width="1" height="1" fill="#000000"/><rect x="8" y="13" width="5" height="1" fill="#0000ff"/><rect x="13" y="13" width="1" height="1" fill="#000000"/><rect x="2" y="14" width="1" height="1" fill="#000000"/><rect x="8" y="14" width="5" height="1" fill="#000000"/><rect x="2" y="15" width="1" height="1" fill="#000000"/><rect x="10" y="15" width="1" height="1" fill="#000000"/></svg>
<div class="t" style="left:36px;top:365px;font-size:12px;line-height:14px;color:#000;font-weight:400;letter-spacing:-0.1px">Sum</div>
<div class="t" style="left:99.5px;top:365px;font-size:12px;line-height:14px;color:#000;font-weight:400;letter-spacing:0.235px;">Function</div>
<div class="t" style="left:167.4px;top:365px;font-size:12px;line-height:14px;color:#000;font-weight:400;letter-spacing:0.006px;">00-06-06</div>
<svg style="left:220px;top:364px" width="22" height="13" viewBox="0 0 22 13" shape-rendering="crispEdges"><rect x="3" y="2" width="4" height="1" fill="#000"/><rect x="2" y="3" width="1" height="1" fill="#000"/><rect x="7" y="3" width="1" height="1" fill="#000"/><rect x="1" y="4" width="1" height="2" fill="#000"/><rect x="8" y="4" width="1" height="2" fill="#000"/><rect x="2" y="6" width="1" height="1" fill="#000"/><rect x="7" y="6" width="1" height="1" fill="#000"/><rect x="3" y="7" width="4" height="1" fill="#000"/><rect x="5" y="8" width="1" height="3" fill="#000"/><rect x="0" y="11" width="10" height="1" fill="#000"/><rect x="15" y="2" width="4" height="1" fill="#000"/><rect x="12" y="4" width="10" height="1" fill="#000"/><rect x="14" y="6" width="6" height="1" fill="#000"/><rect x="13" y="7" width="1" height="1" fill="#000"/><rect x="20" y="7" width="1" height="1" fill="#000"/><rect x="14" y="8" width="6" height="1" fill="#000"/><rect x="12" y="10" width="10" height="1" fill="#000"/><rect x="17" y="11" width="1" height="2" fill="#000"/></svg>
<svg style="left:17px;top:381px" width="16" height="16" viewBox="0 0 16 16" shape-rendering="crispEdges"><rect x="4" y="0" width="1" height="1" fill="#000000"/><rect x="13" y="0" width="1" height="1" fill="#000000"/><rect x="2" y="1" width="5" height="1" fill="#000000"/><rect x="1" y="2" width="1" height="1" fill="#000000"/><rect x="2" y="2" width="5" height="1" fill="#ffff00"/><rect x="7" y="2" width="1" height="1" fill="#000000"/><rect x="11" y="2" width="5" height="1" fill="#000000"/><rect x="0" y="3" width="1" height="1" fill="#000000"/><rect x="1" y="3" width="7" height="1" fill="#ffff00"/><rect x="8" y="3" width="1" height="1" fill="#000000"/><rect x="0" y="4" width="1" height="1" fill="#000000"/><rect x="1" y="4" width="3" height="1" fill="#ffff00"/><rect x="4" y="4" width="1" height="1" fill="#000000"/><rect x="5" y="4" width="3" height="1" fill="#ffff00"/><rect x="8" y="4" width="1" height="1" fill="#000000"/><rect x="13" y="4" width="1" height="1" fill="#000000"/><rect x="0" y="5" width="2" height="1" fill="#000000"/><rect x="2" y="5" width="1" height="1" fill="#ffff00"/><rect x="3" y="5" width="1" height="1" fill="#000000"/><rect x="4" y="5" width="1" height="1" fill="#ffffff"/><rect x="5" y="5" width="1" height="1" fill="#000000"/><rect x="6" y="5" width="1" height="1" fill="#ffff00"/><rect x="7" y="5" width="2" height="1" fill="#000000"/><rect x="10" y="5" width="1" height="1" fill="#000000"/><rect x="0" y="6" width="1" height="1" fill="#000000"/><rect x="1" y="6" width="3" height="1" fill="#ffff00"/><rect x="4" y="6" width="1" height="1" fill="#000000"/><rect x="5" y="6" width="3" height="1" fill="#ffff00"/><rect x="8" y="6" width="5" height="1" fill="#000000"/><rect x="0" y="7" width="1" height="1" fill="#000000"/><rect x="1" y="7" width="6" height="1" fill="#ffff00"/><rect x="7" y="7" width="1" height="1" fill="#000000"/><rect x="8" y="7" width="5" height="1" fill="#0000ff"/><rect x="13" y="7" width="1" height="1" fill="#000000"/><rect x="1" y="8" width="1" height="1" fill="#000000"/><rect x="2" y="8" width="4" height="1" fill="#ffff00"/><rect x="6" y="8" width="1" height="1" fill="#000000"/><rect x="7" y="8" width="7" height="1" fill="#0000ff"/><rect x="14" y="8" width="1" height="1" fill="#000000"/><rect x="2" y="9" width="5" height="1" fill="#000000"/><rect x="7" y="9" width="3" height="1" fill="#0000ff"/><rect x="10" y="9" width="1" height="1" fill="#000000"/><rect x="11" y="9" width="3" height="1" fill="#0000ff"/><rect x="14" y="9" width="1" height="1" fill="#000000"/><rect x="4" y="10" width="1" height="1" fill="#000000"/><rect x="6" y="10" width="2" height="1" fill="#000000"/><rect x="8" y="10" width="1" height="1" fill="#0000ff"/><rect x="9" y="10" width="1" height="1" fill="#000000"/><rect x="10" y="10" width="1" height="1" fill="#ffffff"/><rect x="11" y="10" width="1" height="1" fill="#000000"/><rect x="12" y="10" width="1" height="1" fill="#0000ff"/><rect x="13" y="10" width="2" height="1" fill="#000000"/><rect x="2" y="11" width="1" height="1" fill="#000000"/><rect x="6" y="11" width="1" height="1" fill="#000000"/><rect x="7" y="11" width="3" height="1" fill="#0000ff"/><rect x="10" y="11" width="1" height="1" fill="#000000"/><rect x="11" y="11" width="3" height="1" fill="#0000ff"/><rect x="14" y="11" width="1" height="1" fill="#000000"/><rect x="2" y="12" width="1" height="1" fill="#000000"/><rect x="6" y="12" width="1" height="1" fill="#000000"/><rect x="7" y="12" width="7" height="1" fill="#0000ff"/><rect x="14" y="12" width="1" height="1" fill="#000000"/><rect x="0" y="13" width="5" height="1" fill="#000000"/><rect x="7" y="13" width="1" height="1" fill="#000000"/><rect x="8" y="13" width="5" height="1" fill="#0000ff"/><rect x="13" y="13" width="1" height="1" fill="#000000"/><rect x="2" y="14" width="1" height="1" fill="#000000"/><rect x="8" y="14" width="5" height="1" fill="#000000"/><rect x="2" y="15" width="1" height="1" fill="#000000"/><rect x="10" y="15" width="1" height="1" fill="#000000"/></svg>
<div class="t" style="left:36px;top:382px;font-size:12px;line-height:14px;color:#000;font-weight:400;letter-spacing:-0.1px">Var</div>
<div class="t" style="left:99.5px;top:382px;font-size:12px;line-height:14px;color:#000;font-weight:400;letter-spacing:0.235px;">Function</div>
<div class="t" style="left:167.4px;top:382px;font-size:12px;line-height:14px;color:#000;font-weight:400;letter-spacing:0.006px;">00-06-06</div>
<svg style="left:220px;top:381px" width="22" height="13" viewBox="0 0 22 13" shape-rendering="crispEdges"><rect x="3" y="2" width="4" height="1" fill="#000"/><rect x="2" y="3" width="1" height="1" fill="#000"/><rect x="7" y="3" width="1" height="1" fill="#000"/><rect x="1" y="4" width="1" height="2" fill="#000"/><rect x="8" y="4" width="1" height="2" fill="#000"/><rect x="2" y="6" width="1" height="1" fill="#000"/><rect x="7" y="6" width="1" height="1" fill="#000"/><rect x="3" y="7" width="4" height="1" fill="#000"/><rect x="5" y="8" width="1" height="3" fill="#000"/><rect x="0" y="11" width="10" height="1" fill="#000"/><rect x="15" y="2" width="4" height="1" fill="#000"/><rect x="12" y="4" width="10" height="1" fill="#000"/><rect x="14" y="6" width="6" height="1" fill="#000"/><rect x="13" y="7" width="1" height="1" fill="#000"/><rect x="20" y="7" width="1" height="1" fill="#000"/><rect x="14" y="8" width="6" height="1" fill="#000"/><rect x="12" y="10" width="10" height="1" fill="#000"/><rect x="17" y="11" width="1" height="2" fill="#000"/></svg>
<svg style="left:17px;top:398px" width="16" height="16" viewBox="0 0 16 16" shape-rendering="crispEdges"><rect x="4" y="0" width="1" height="1" fill="#000000"/><rect x="13" y="0" width="1" height="1" fill="#000000"/><rect x="2" y="1" width="5" height="1" fill="#000000"/><rect x="1" y="2" width="1" height="1" fill="#000000"/><rect x="2" y="2" width="5" height="1" fill="#ffff00"/><rect x="7" y="2" width="1" height="1" fill="#000000"/><rect x="11" y="2" width="5" height="1" fill="#000000"/><rect x="0" y="3" width="1" height="1" fill="#000000"/><rect x="1" y="3" width="7" height="1" fill="#ffff00"/><rect x="8" y="3" width="1" height="1" fill="#000000"/><rect x="0" y="4" width="1" height="1" fill="#000000"/><rect x="1" y="4" width="3" height="1" fill="#ffff00"/><rect x="4" y="4" width="1" height="1" fill="#000000"/><rect x="5" y="4" width="3" height="1" fill="#ffff00"/><rect x="8" y="4" width="1" height="1" fill="#000000"/><rect x="13" y="4" width="1" height="1" fill="#000000"/><rect x="0" y="5" width="2" height="1" fill="#000000"/><rect x="2" y="5" width="1" height="1" fill="#ffff00"/><rect x="3" y="5" width="1" height="1" fill="#000000"/><rect x="4" y="5" width="1" height="1" fill="#ffffff"/><rect x="5" y="5" width="1" height="1" fill="#000000"/><rect x="6" y="5" width="1" height="1" fill="#ffff00"/><rect x="7" y="5" width="2" height="1" fill="#000000"/><rect x="10" y="5" width="1" height="1" fill="#000000"/><rect x="0" y="6" width="1" height="1" fill="#000000"/><rect x="1" y="6" width="3" height="1" fill="#ffff00"/><rect x="4" y="6" width="1" height="1" fill="#000000"/><rect x="5" y="6" width="3" height="1" fill="#ffff00"/><rect x="8" y="6" width="5" height="1" fill="#000000"/><rect x="0" y="7" width="1" height="1" fill="#000000"/><rect x="1" y="7" width="6" height="1" fill="#ffff00"/><rect x="7" y="7" width="1" height="1" fill="#000000"/><rect x="8" y="7" width="5" height="1" fill="#0000ff"/><rect x="13" y="7" width="1" height="1" fill="#000000"/><rect x="1" y="8" width="1" height="1" fill="#000000"/><rect x="2" y="8" width="4" height="1" fill="#ffff00"/><rect x="6" y="8" width="1" height="1" fill="#000000"/><rect x="7" y="8" width="7" height="1" fill="#0000ff"/><rect x="14" y="8" width="1" height="1" fill="#000000"/><rect x="2" y="9" width="5" height="1" fill="#000000"/><rect x="7" y="9" width="3" height="1" fill="#0000ff"/><rect x="10" y="9" width="1" height="1" fill="#000000"/><rect x="11" y="9" width="3" height="1" fill="#0000ff"/><rect x="14" y="9" width="1" height="1" fill="#000000"/><rect x="4" y="10" width="1" height="1" fill="#000000"/><rect x="6" y="10" width="2" height="1" fill="#000000"/><rect x="8" y="10" width="1" height="1" fill="#0000ff"/><rect x="9" y="10" width="1" height="1" fill="#000000"/><rect x="10" y="10" width="1" height="1" fill="#ffffff"/><rect x="11" y="10" width="1" height="1" fill="#000000"/><rect x="12" y="10" width="1" height="1" fill="#0000ff"/><rect x="13" y="10" width="2" height="1" fill="#000000"/><rect x="2" y="11" width="1" height="1" fill="#000000"/><rect x="6" y="11" width="1" height="1" fill="#000000"/><rect x="7" y="11" width="3" height="1" fill="#0000ff"/><rect x="10" y="11" width="1" height="1" fill="#000000"/><rect x="11" y="11" width="3" height="1" fill="#0000ff"/><rect x="14" y="11" width="1" height="1" fill="#000000"/><rect x="2" y="12" width="1" height="1" fill="#000000"/><rect x="6" y="12" width="1" height="1" fill="#000000"/><rect x="7" y="12" width="7" height="1" fill="#0000ff"/><rect x="14" y="12" width="1" height="1" fill="#000000"/><rect x="0" y="13" width="5" height="1" fill="#000000"/><rect x="7" y="13" width="1" height="1" fill="#000000"/><rect x="8" y="13" width="5" height="1" fill="#0000ff"/><rect x="13" y="13" width="1" height="1" fill="#000000"/><rect x="2" y="14" width="1" height="1" fill="#000000"/><rect x="8" y="14" width="5" height="1" fill="#000000"/><rect x="2" y="15" width="1" height="1" fill="#000000"/><rect x="10" y="15" width="1" height="1" fill="#000000"/></svg>
<div class="t" style="left:36px;top:399px;font-size:12px;line-height:14px;color:#000;font-weight:400;letter-spacing:-0.1px">VarP</div>
<div class="t" style="left:99.5px;top:399px;font-size:12px;line-height:14px;color:#000;font-weight:400;letter-spacing:0.235px;">Function</div>
<div class="t" style="left:167.4px;top:399px;font-size:12px;line-height:14px;color:#000;font-weight:400;letter-spacing:0.006px;">00-06-06</div>
<svg style="left:220px;top:398px" width="22" height="13" viewBox="0 0 22 13" shape-rendering="crispEdges"><rect x="3" y="2" width="4" height="1" fill="#000"/><rect x="2" y="3" width="1" height="1" fill="#000"/><rect x="7" y="3" width="1" height="1" fill="#000"/><rect x="1" y="4" width="1" height="2" fill="#000"/><rect x="8" y="4" width="1" height="2" fill="#000"/><rect x="2" y="6" width="1" height="1" fill="#000"/><rect x="7" y="6" width="1" height="1" fill="#000"/><rect x="3" y="7" width="4" height="1" fill="#000"/><rect x="5" y="8" width="1" height="3" fill="#000"/><rect x="0" y="11" width="10" height="1" fill="#000"/><rect x="15" y="2" width="4" height="1" fill="#000"/><rect x="12" y="4" width="10" height="1" fill="#000"/><rect x="14" y="6" width="6" height="1" fill="#000"/><rect x="13" y="7" width="1" height="1" fill="#000"/><rect x="20" y="7" width="1" height="1" fill="#000"/><rect x="14" y="8" width="6" height="1" fill="#000"/><rect x="12" y="10" width="10" height="1" fill="#000"/><rect x="17" y="11" width="1" height="2" fill="#000"/></svg>
<div style="left:15px;top:448px;width:231px;height:16px;background:#c0c0c0;"></div>
<div style="left:15px;top:448px;width:16px;height:16px;background:#000;"></div>
<div style="left:15px;top:448px;width:15px;height:15px;background:#c0c0c0;"></div>
<div style="left:16px;top:449px;width:14px;height:14px;background:#808080;"></div>
<div style="left:16px;top:449px;width:13px;height:13px;background:#fff;"></div>
<div style="left:17px;top:450px;width:12px;height:12px;background:#c0c0c0;"></div>
<svg style="left:20px;top:452px" width="4" height="7" viewBox="0 0 4 7" shape-rendering="crispEdges"><rect x="0" y="3" width="1" height="1" fill="#000"/><rect x="1" y="2" width="1" height="3" fill="#000"/><rect x="2" y="1" width="1" height="5" fill="#000"/><rect x="3" y="0" width="1" height="7" fill="#000"/></svg>
<div style="left:31px;top:448px;width:167px;height:16px;background:#000;"></div>
<div style="left:31px;top:448px;width:166px;height:15px;background:#c0c0c0;"></div>
<div style="left:32px;top:449px;width:165px;height:14px;background:#808080;"></div>
<div style="left:32px;top:449px;width:164px;height:13px;background:#fff;"></div>
<div style="left:33px;top:450px;width:163px;height:12px;background:#c0c0c0;"></div>
<div style="left:198px;top:448px;width:33px;height:16px;background-color:#c0c0c0;background-image:linear-gradient(45deg,#fff 25%,transparent 25%,transparent 75%,#fff 75%),linear-gradient(45deg,#fff 25%,transparent 25%,transparent 75%,#fff 75%);background-size:2px 2px;background-position:0 0,1px 1px;"></div>
<div style="left:231px;top:448px;width:15px;height:16px;background:#000;"></div>
<div style="left:231px;top:448px;width:14px;height:15px;background:#c0c0c0;"></div>
<div style="left:232px;top:449px;width:13px;height:14px;background:#808080;"></div>
<div style="left:232px;top:449px;width:12px;height:13px;background:#fff;"></div>
<div style="left:233px;top:450px;width:11px;height:12px;background:#c0c0c0;"></div>
<svg style="left:236px;top:452px" width="4" height="7" viewBox="0 0 4 7" shape-rendering="crispEdges"><rect x="3" y="3" width="1" height="1" fill="#000"/><rect x="2" y="2" width="1" height="3" fill="#000"/><rect x="1" y="1" width="1" height="5" fill="#000"/><rect x="0" y="0" width="1" height="7" fill="#000"/></svg>
<div class="t" style="left:255.4px;top:100px;font-size:11px;line-height:14px;color:#000;font-weight:400;letter-spacing:0.791px;">Metric</div>
<div class="t" style="left:297.8px;top:100px;font-size:11px;line-height:14px;color:#000;font-weight:700;letter-spacing:1.426px;">New Metric</div>
<div class="t" style="left:378.7px;top:100px;font-size:11px;line-height:14px;color:#000;font-weight:400;letter-spacing:0.942px;">is defined as:</div>
<div style="left:257px;top:118px;width:339px;height:111px;background:#fff;"></div>
<div style="left:257px;top:118px;width:338px;height:110px;background:#808080;"></div>
<div style="left:258px;top:119px;width:337px;height:109px;background:#c0c0c0;"></div>
<div style="left:258px;top:119px;width:336px;height:108px;background:#000;"></div>
<div style="left:259px;top:120px;width:335px;height:107px;background:#c0c0c0;"></div>
<div style="left:263px;top:125px;width:8px;height:8px;background:#000080;"></div>
<div class="t" style="left:274.6px;top:121px;font-size:12px;line-height:14px;color:#000;font-weight:400;letter-spacing:0.398px;">Metric definition is empty</div>
<div style="left:256px;top:241px;width:340px;height:225px;background:#fff;"></div>
<div style="left:256px;top:241px;width:339px;height:224px;background:#808080;"></div>
<div style="left:257px;top:242px;width:338px;height:223px;background:#808080;"></div>
<div style="left:257px;top:242px;width:337px;height:222px;background:#fff;"></div>
<div style="left:258px;top:243px;width:336px;height:221px;background:#c0c0c0;"></div>
<div style="left:264px;top:271px;width:237px;height:26px;background:#808080;"></div>
<div style="left:264px;top:271px;width:236px;height:25px;background:#fff;"></div>
<div style="left:265px;top:272px;width:235px;height:24px;background:#c0c0c0;"></div>
<div style="left:425px;top:273px;width:1px;height:21px;background:#808080;"></div>
<div style="left:426px;top:273px;width:1px;height:22px;background:#fff;"></div>
<div style="left:265px;top:303px;width:235px;height:147px;background:#fff;"></div>
<div style="left:265px;top:303px;width:234px;height:146px;background:#808080;"></div>
<div style="left:266px;top:304px;width:233px;height:145px;background:#c0c0c0;"></div>
<div style="left:266px;top:304px;width:232px;height:144px;background:#000;"></div>
<div style="left:267px;top:305px;width:231px;height:143px;background:#fff;"></div>
<div style="left:267px;top:431px;width:231px;height:17px;background:#c0c0c0;"></div>
<div style="left:267px;top:430px;width:231px;height:1px;background:#000;"></div>
<div class="t" style="left:270px;top:305px;font-size:12px;line-height:14px;color:#000080;font-weight:400;letter-spacing:0.1px">Avg(<span style="color:#e00000">)</span></div>
<div class="t" style="left:270.0px;top:433px;font-size:12px;line-height:14px;color:#e00000;font-weight:400;letter-spacing:0.375px;">Avg(ValueList)</div>
<svg style="left:485px;top:435px" width="12" height="11" viewBox="0 0 12 11" shape-rendering="crispEdges"><rect x="1" y="0" width="2" height="1" fill="#a00000"/><rect x="9" y="0" width="2" height="1" fill="#a00000"/><rect x="0" y="1" width="1" height="1" fill="#a00000"/><rect x="1" y="1" width="2" height="1" fill="#ff0000"/><rect x="3" y="1" width="1" height="1" fill="#a00000"/><rect x="8" y="1" width="1" height="1" fill="#a00000"/><rect x="9" y="1" width="2" height="1" fill="#ff0000"/><rect x="11" y="1" width="1" height="1" fill="#a00000"/><rect x="0" y="2" width="1" height="1" fill="#a00000"/><rect x="1" y="2" width="1" height="1" fill="#ff0000"/><rect x="2" y="2" width="1" height="1" fill="#ff8080"/><rect x="3" y="2" width="1" height="1" fill="#ff0000"/><rect x="4" y="2" width="1" height="1" fill="#a00000"/><rect x="7" y="2" width="1" height="1" fill="#a00000"/><rect x="8" y="2" width="3" height="1" fill="#ff0000"/><rect x="11" y="2" width="1" height="1" fill="#a00000"/><rect x="1" y="3" width="1" height="1" fill="#a00000"/><rect x="2" y="3" width="3" height="1" fill="#ff0000"/><rect x="5" y="3" width="2" height="1" fill="#a00000"/><rect x="7" y="3" width="3" height="1" fill="#ff0000"/><rect x="10" y="3" width="1" height="1" fill="#a00000"/><rect x="2" y="4" width="1" height="1" fill="#a00000"/><rect x="3" y="4" width="6" height="1" fill="#ff0000"/><rect x="9" y="4" width="1" height="1" fill="#a00000"/><rect x="3" y="5" width="1" height="1" fill="#a00000"/><rect x="4" y="5" width="1" height="1" fill="#ff0000"/><rect x="5" y="5" width="1" height="1" fill="#ff8080"/><rect x="6" y="5" width="2" height="1" fill="#ff0000"/><rect x="8" y="5" width="1" height="1" fill="#a00000"/><rect x="2" y="6" width="1" height="1" fill="#a00000"/><rect x="3" y="6" width="6" height="1" fill="#ff0000"/><rect x="9" y="6" width="1" height="1" fill="#a00000"/><rect x="1" y="7" width="1" height="1" fill="#a00000"/><rect x="2" y="7" width="3" height="1" fill="#ff0000"/><rect x="5" y="7" width="2" height="1" fill="#a00000"/><rect x="7" y="7" width="3" height="1" fill="#ff0000"/><rect x="10" y="7" width="1" height="1" fill="#a00000"/><rect x="0" y="8" width="1" height="1" fill="#a00000"/><rect x="1" y="8" width="3" height="1" fill="#ff0000"/><rect x="4" y="8" width="1" height="1" fill="#a00000"/><rect x="7" y="8" width="1" height="1" fill="#a00000"/><rect x="8" y="8" width="3" height="1" fill="#ff0000"/><rect x="11" y="8" width="1" height="1" fill="#a00000"/><rect x="0" y="9" width="1" height="1" fill="#a00000"/><rect x="1" y="9" width="2" height="1" fill="#ff0000"/><rect x="3" y="9" width="1" height="1" fill="#a00000"/><rect x="8" y="9" width="1" height="1" fill="#a00000"/><rect x="9" y="9" width="2" height="1" fill="#ff0000"/><rect x="11" y="9" width="1" height="1" fill="#a00000"/><rect x="1" y="10" width="2" height="1" fill="#a00000"/><rect x="9" y="10" width="2" height="1" fill="#a00000"/></svg>
<div style="left:506px;top:302px;width:82px;height:29px;background:#000;"></div>
<div style="left:506px;top:302px;width:81px;height:28px;background:#fff;"></div>
<div style="left:507px;top:303px;width:80px;height:27px;background:#808080;"></div>
<div style="left:507px;top:303px;width:79px;height:26px;background:#c0c0c0;"></div>
<div style="left:508px;top:304px;width:78px;height:25px;background:#c0c0c0;"></div>
<div class="t" style="left:524.8px;top:309px;font-size:12px;line-height:14px;color:#000;font-weight:400;letter-spacing:0.171px;">Validate</div>
<div style="left:542px;top:321px;width:4px;height:1px;background:#000;"></div>
<div style="left:506px;top:336px;width:82px;height:29px;background:#000;"></div>
<div style="left:506px;top:336px;width:81px;height:28px;background:#fff;"></div>
<div style="left:507px;top:337px;width:80px;height:27px;background:#808080;"></div>
<div style="left:507px;top:337px;width:79px;height:26px;background:#c0c0c0;"></div>
<div style="left:508px;top:338px;width:78px;height:25px;background:#c0c0c0;"></div>
<div class="t" style="left:531.4px;top:343px;font-size:12px;line-height:14px;color:#000;font-weight:400;letter-spacing:0.43px;">Clear</div>
<div style="left:541px;top:355px;width:4px;height:1px;background:#000;"></div>
<div style="left:4px;top:478px;width:604px;height:19px;background:#fff;"></div>
<div style="left:4px;top:478px;width:603px;height:18px;background:#808080;"></div>
<div style="left:5px;top:479px;width:602px;height:17px;background:#c0c0c0;"></div>
<svg style="left:5px;top:479px" width="15" height="16" viewBox="0 0 15 16" shape-rendering="crispEdges"><rect x="7" y="0" width="1" height="1" fill="#000000"/><rect x="6" y="1" width="1" height="1" fill="#ffff00"/><rect x="7" y="1" width="2" height="1" fill="#000000"/><rect x="6" y="2" width="2" height="1" fill="#ffff00"/><rect x="8" y="2" width="1" height="1" fill="#000000"/><rect x="5" y="3" width="4" height="1" fill="#ffff00"/><rect x="9" y="3" width="1" height="1" fill="#000000"/><rect x="5" y="4" width="1" height="1" fill="#ffff00"/><rect x="6" y="4" width="4" height="1" fill="#000000"/><rect x="4" y="5" width="2" height="1" fill="#ffff00"/><rect x="6" y="5" width="3" height="1" fill="#000000"/><rect x="9" y="5" width="1" height="1" fill="#ffff00"/><rect x="10" y="5" width="1" height="1" fill="#000000"/><rect x="4" y="6" width="2" height="1" fill="#ffff00"/><rect x="6" y="6" width="3" height="1" fill="#000000"/><rect x="9" y="6" width="1" height="1" fill="#ffff00"/><rect x="10" y="6" width="1" height="1" fill="#000000"/><rect x="3" y="7" width="4" height="1" fill="#ffff00"/><rect x="7" y="7" width="1" height="1" fill="#000000"/><rect x="8" y="7" width="3" height="1" fill="#ffff00"/><rect x="11" y="7" width="1" height="1" fill="#000000"/><rect x="3" y="8" width="4" height="1" fill="#ffff00"/><rect x="7" y="8" width="1" height="1" fill="#000000"/><rect x="8" y="8" width="3" height="1" fill="#ffff00"/><rect x="11" y="8" width="1" height="1" fill="#000000"/><rect x="2" y="9" width="5" height="1" fill="#ffff00"/><rect x="7" y="9" width="1" height="1" fill="#000000"/><rect x="8" y="9" width="4" height="1" fill="#ffff00"/><rect x="12" y="9" width="1" height="1" fill="#000000"/><rect x="2" y="10" width="10" height="1" fill="#ffff00"/><rect x="12" y="10" width="1" height="1" fill="#000000"/><rect x="1" y="11" width="5" height="1" fill="#ffff00"/><rect x="6" y="11" width="3" height="1" fill="#000000"/><rect x="9" y="11" width="4" height="1" fill="#ffff00"/><rect x="13" y="11" width="1" height="1" fill="#000000"/><rect x="1" y="12" width="6" height="1" fill="#ffff00"/><rect x="7" y="12" width="1" height="1" fill="#000000"/><rect x="8" y="12" width="5" height="1" fill="#ffff00"/><rect x="13" y="12" width="1" height="1" fill="#000000"/><rect x="0" y="13" width="14" height="1" fill="#ffff00"/><rect x="14" y="13" width="1" height="1" fill="#000000"/><rect x="0" y="14" width="15" height="1" fill="#000000"/><rect x="1" y="15" width="14" height="1" fill="#808080"/></svg>
<div class="t" style="left:24.6px;top:480px;font-size:12px;line-height:14px;color:#000;font-weight:400;letter-spacing:0.356px;">Formula Incorrect</div>
<div style="left:595px;top:484px;width:13px;height:13px;background:#c0c0c0;"></div>
<svg style="left:595px;top:484px" width="13" height="13" viewBox="0 0 13 13" shape-rendering="crispEdges"><rect x="0" y="12" width="1" height="1" fill="#fff"/><rect x="1" y="11" width="1" height="1" fill="#fff"/><rect x="2" y="10" width="1" height="1" fill="#fff"/><rect x="2" y="11" width="1" height="1" fill="#808080"/><rect x="3" y="9" width="1" height="1" fill="#fff"/><rect x="3" y="10" width="1" height="1" fill="#808080"/><rect x="3" y="11" width="1" height="1" fill="#808080"/><rect x="4" y="8" width="1" height="1" fill="#fff"/><rect x="4" y="9" width="1" height="1" fill="#808080"/><rect x="4" y="10" width="1" height="1" fill="#808080"/><rect x="5" y="7" width="1" height="1" fill="#fff"/><rect x="5" y="8" width="1" height="1" fill="#808080"/><rect x="5" y="9" width="1" height="1" fill="#808080"/><rect x="5" y="11" width="1" height="1" fill="#fff"/><rect x="6" y="6" width="1" height="1" fill="#fff"/><rect x="6" y="7" width="1" height="1" fill="#808080"/><rect x="6" y="8" width="1" height="1" fill="#808080"/><rect x="6" y="10" width="1" height="1" fill="#fff"/><rect x="6" y="11" width="1" height="1" fill="#808080"/><rect x="7" y="5" width="1" height="1" fill="#fff"/><rect x="7" y="6" width="1" height="1" fill="#808080"/><rect x="7" y="7" width="1" height="1" fill="#808080"/><rect x="7" y="9" width="1" height="1" fill="#fff"/><rect x="7" y="10" width="1" height="1" fill="#808080"/><rect x="7" y="11" width="1" height="1" fill="#808080"/><rect x="8" y="4" width="1" height="1" fill="#fff"/><rect x="8" y="5" width="1" height="1" fill="#808080"/><rect x="8" y="6" width="1" height="1" fill="#808080"/><rect x="8" y="8" width="1" height="1" fill="#fff"/><rect x="8" y="9" width="1" height="1" fill="#808080"/><rect x="8" y="10" width="1" height="1" fill="#808080"/><rect x="9" y="3" width="1" height="1" fill="#fff"/><rect x="9" y="4" width="1" height="1" fill="#808080"/><rect x="9" y="5" width="1" height="1" fill="#808080"/><rect x="9" y="7" width="1" height="1" fill="#fff"/><rect x="9" y="8" width="1" height="1" fill="#808080"/><rect x="9" y="9" width="1" height="1" fill="#808080"/><rect x="9" y="11" width="1" height="1" fill="#fff"/><rect x="10" y="2" width="1" height="1" fill="#fff"/><rect x="10" y="3" width="1" height="1" fill="#808080"/><rect x="10" y="4" width="1" height="1" fill="#808080"/><rect x="10" y="6" width="1" height="1" fill="#fff"/><rect x="10" y="7" width="1" height="1" fill="#808080"/><rect x="10" y="8" width="1" height="1" fill="#808080"/><rect x="10" y="10" width="1" height="1" fill="#fff"/><rect x="10" y="11" width="1" height="1" fill="#808080"/><rect x="11" y="1" width="1" height="1" fill="#fff"/><rect x="11" y="2" width="1" height="1" fill="#808080"/><rect x="11" y="3" width="1" height="1" fill="#808080"/><rect x="11" y="5" width="1" height="1" fill="#fff"/><rect x="11" y="6" width="1" height="1" fill="#808080"/><rect x="11" y="7" width="1" height="1" fill="#808080"/><rect x="11" y="9" width="1" height="1" fill="#fff"/><rect x="11" y="10" width="1" height="1" fill="#808080"/><rect x="11" y="11" width="1" height="1" fill="#808080"/><rect x="12" y="0" width="1" height="1" fill="#fff"/></svg>
<div style="left:75px;top:146px;width:341px;height:147px;background:#000;"></div>
<div style="left:76px;top:147px;width:339px;height:145px;background:#fff;"></div>
<svg style="left:89px;top:147px" width="16" height="16" viewBox="0 0 16 16" shape-rendering="crispEdges"><rect x="6" y="1" width="1" height="1" fill="#c0c0c0"/><rect x="8" y="1" width="1" height="1" fill="#008000"/><rect x="10" y="1" width="6" height="1" fill="#000000"/><rect x="1" y="2" width="1" height="1" fill="#ffff00"/><rect x="7" y="2" width="2" height="1" fill="#008000"/><rect x="10" y="2" width="1" height="1" fill="#000000"/><rect x="11" y="2" width="1" height="1" fill="#ffffff"/><rect x="12" y="2" width="2" height="1" fill="#808080"/><rect x="14" y="2" width="1" height="1" fill="#ffffff"/><rect x="15" y="2" width="1" height="1" fill="#000000"/><rect x="0" y="3" width="3" height="1" fill="#ffff00"/><rect x="7" y="3" width="1" height="1" fill="#008000"/><rect x="10" y="3" width="6" height="1" fill="#000000"/><rect x="0" y="4" width="4" height="1" fill="#ffff00"/><rect x="10" y="4" width="1" height="1" fill="#000000"/><rect x="11" y="4" width="4" height="1" fill="#ffffff"/><rect x="15" y="4" width="1" height="1" fill="#000000"/><rect x="0" y="5" width="1" height="1" fill="#000000"/><rect x="1" y="5" width="2" height="1" fill="#ffff00"/><rect x="3" y="5" width="1" height="1" fill="#00ffff"/><rect x="10" y="5" width="1" height="1" fill="#000000"/><rect x="11" y="5" width="1" height="1" fill="#ffffff"/><rect x="12" y="5" width="2" height="1" fill="#000000"/><rect x="14" y="5" width="1" height="1" fill="#ffffff"/><rect x="15" y="5" width="1" height="1" fill="#000000"/><rect x="1" y="6" width="1" height="1" fill="#000000"/><rect x="2" y="6" width="1" height="1" fill="#00ffff"/><rect x="10" y="6" width="1" height="1" fill="#000000"/><rect x="11" y="6" width="4" height="1" fill="#ffffff"/><rect x="15" y="6" width="1" height="1" fill="#000000"/><rect x="10" y="7" width="6" height="1" fill="#000000"/><rect x="2" y="8" width="1" height="1" fill="#000000"/><rect x="3" y="8" width="1" height="1" fill="#ffff00"/><rect x="4" y="8" width="1" height="1" fill="#000000"/><rect x="11" y="8" width="1" height="1" fill="#000000"/><rect x="12" y="8" width="1" height="1" fill="#ffff00"/><rect x="13" y="8" width="1" height="1" fill="#000000"/><rect x="2" y="9" width="1" height="1" fill="#000000"/><rect x="3" y="9" width="1" height="1" fill="#ffff00"/><rect x="4" y="9" width="1" height="1" fill="#000000"/><rect x="6" y="9" width="3" height="1" fill="#000000"/><rect x="11" y="9" width="1" height="1" fill="#000000"/><rect x="12" y="9" width="1" height="1" fill="#ffff00"/><rect x="13" y="9" width="1" height="1" fill="#000000"/><rect x="2" y="10" width="1" height="1" fill="#000000"/><rect x="3" y="10" width="1" height="1" fill="#ffff00"/><rect x="4" y="10" width="2" height="1" fill="#000000"/><rect x="6" y="10" width="3" height="1" fill="#ffffff"/><rect x="9" y="10" width="1" height="1" fill="#000000"/><rect x="11" y="10" width="1" height="1" fill="#000000"/><rect x="12" y="10" width="1" height="1" fill="#ffff00"/><rect x="13" y="10" width="1" height="1" fill="#000000"/><rect x="2" y="11" width="1" height="1" fill="#000000"/><rect x="3" y="11" width="2" height="1" fill="#ffff00"/><rect x="5" y="11" width="1" height="1" fill="#000000"/><rect x="6" y="11" width="3" height="1" fill="#ffffff"/><rect x="9" y="11" width="2" height="1" fill="#000000"/><rect x="11" y="11" width="2" height="1" fill="#ffff00"/><rect x="13" y="11" width="1" height="1" fill="#000000"/><rect x="3" y="12" width="1" height="1" fill="#000000"/><rect x="4" y="12" width="2" height="1" fill="#ffff00"/><rect x="6" y="12" width="3" height="1" fill="#000000"/><rect x="9" y="12" width="3" height="1" fill="#ffff00"/><rect x="12" y="12" width="1" height="1" fill="#000000"/><rect x="4" y="13" width="1" height="1" fill="#000000"/><rect x="5" y="13" width="6" height="1" fill="#ffff00"/><rect x="11" y="13" width="1" height="1" fill="#000000"/><rect x="4" y="14" width="1" height="1" fill="#000000"/><rect x="5" y="14" width="1" height="1" fill="#e0a000"/><rect x="6" y="14" width="4" height="1" fill="#ffff00"/><rect x="10" y="14" width="1" height="1" fill="#e0a000"/><rect x="11" y="14" width="1" height="1" fill="#000000"/><rect x="4" y="15" width="2" height="1" fill="#000000"/><rect x="10" y="15" width="2" height="1" fill="#000000"/></svg>
<div class="t" style="left:109.0px;top:148px;font-size:12px;line-height:14px;color:#000;font-weight:400;letter-spacing:0.416px;">My Personal Objects</div>
<svg style="left:89px;top:164px" width="15" height="13" viewBox="0 0 15 13" shape-rendering="crispEdges"><rect x="2" y="0" width="5" height="1" fill="#808080"/><rect x="1" y="1" width="1" height="1" fill="#808080"/><rect x="2" y="1" width="1" height="1" fill="#c0c0c0"/><rect x="3" y="1" width="1" height="1" fill="#ffff00"/><rect x="4" y="1" width="1" height="1" fill="#c0c0c0"/><rect x="5" y="1" width="1" height="1" fill="#ffff00"/><rect x="6" y="1" width="1" height="1" fill="#c0c0c0"/><rect x="7" y="1" width="1" height="1" fill="#808080"/><rect x="0" y="2" width="1" height="1" fill="#808080"/><rect x="1" y="2" width="1" height="1" fill="#c0c0c0"/><rect x="2" y="2" width="1" height="1" fill="#ffff00"/><rect x="3" y="2" width="1" height="1" fill="#c0c0c0"/><rect x="4" y="2" width="1" height="1" fill="#ffff00"/><rect x="5" y="2" width="1" height="1" fill="#c0c0c0"/><rect x="6" y="2" width="1" height="1" fill="#ffff00"/><rect x="7" y="2" width="1" height="1" fill="#c0c0c0"/><rect x="8" y="2" width="6" height="1" fill="#808080"/><rect x="0" y="3" width="1" height="1" fill="#808080"/><rect x="1" y="3" width="13" height="1" fill="#ffffff"/><rect x="14" y="3" width="1" height="1" fill="#000000"/><rect x="0" y="4" width="1" height="1" fill="#808080"/><rect x="1" y="4" width="1" height="1" fill="#ffffff"/><rect x="2" y="4" width="1" height="1" fill="#ffff00"/><rect x="3" y="4" width="1" height="1" fill="#c0c0c0"/><rect x="4" y="4" width="1" height="1" fill="#ffff00"/><rect x="5" y="4" width="1" height="1" fill="#c0c0c0"/><rect x="6" y="4" width="1" height="1" fill="#ffff00"/><rect x="7" y="4" width="1" height="1" fill="#c0c0c0"/><rect x="8" y="4" width="1" height="1" fill="#ffff00"/><rect x="9" y="4" width="1" height="1" fill="#c0c0c0"/><rect x="10" y="4" width="1" height="1" fill="#ffff00"/><rect x="11" y="4" width="1" height="1" fill="#c0c0c0"/><rect x="12" y="4" width="1" height="1" fill="#ffff00"/><rect x="13" y="4" width="1" height="1" fill="#c0c0c0"/><rect x="14" y="4" width="1" height="1" fill="#000000"/><rect x="0" y="5" width="1" height="1" fill="#808080"/><rect x="1" y="5" width="1" height="1" fill="#ffffff"/><rect x="2" y="5" width="1" height="1" fill="#c0c0c0"/><rect x="3" y="5" width="1" height="1" fill="#ffff00"/><rect x="4" y="5" width="1" height="1" fill="#c0c0c0"/><rect x="5" y="5" width="1" height="1" fill="#ffff00"/><rect x="6" y="5" width="1" height="1" fill="#c0c0c0"/><rect x="7" y="5" width="1" height="1" fill="#ffff00"/><rect x="8" y="5" width="1" height="1" fill="#c0c0c0"/><rect x="9" y="5" width="1" height="1" fill="#ffff00"/><rect x="10" y="5" width="1" height="1" fill="#c0c0c0"/><rect x="11" y="5" width="1" height="1" fill="#ffff00"/><rect x="12" y="5" width="1" height="1" fill="#c0c0c0"/><rect x="13" y="5" width="1" height="1" fill="#ffff00"/><rect x="14" y="5" width="1" height="1" fill="#000000"/><rect x="0" y="6" width="1" height="1" fill="#808080"/><rect x="1" y="6" width="1" height="1" fill="#ffffff"/><rect x="2" y="6" width="1" height="1" fill="#ffff00"/><rect x="3" y="6" width="1" height="1" fill="#c0c0c0"/><rect x="4" y="6" width="1" height="1" fill="#ffff00"/><rect x="5" y="6" width="1" height="1" fill="#c0c0c0"/><rect x="6" y="6" width="1" height="1" fill="#ffff00"/><rect x="7" y="6" width="1" height="1" fill="#c0c0c0"/><rect x="8" y="6" width="1" height="1" fill="#ffff00"/><rect x="9" y="6" width="1" height="1" fill="#c0c0c0"/><rect x="10" y="6" width="1" height="1" fill="#ffff00"/><rect x="11" y="6" width="1" height="1" fill="#c0c0c0"/><rect x="12" y="6" width="1" height="1" fill="#ffff00"/><rect x="13" y="6" width="1" height="1" fill="#c0c0c0"/><rect x="14" y="6" width="1" height="1" fill="#000000"/><rect x="0" y="7" width="1" height="1" fill="#808080"/><rect x="1" y="7" width="1" height="1" fill="#ffffff"/><rect x="2" y="7" width="1" height="1" fill="#c0c0c0"/><rect x="3" y="7" width="1" height="1" fill="#ffff00"/><rect x="4" y="7" width="1" height="1" fill="#c0c0c0"/><rect x="5" y="7" width="1" height="1" fill="#ffff00"/><rect x="6" y="7" width="1" height="1" fill="#c0c0c0"/><rect x="7" y="7" width="1" height="1" fill="#ffff00"/><rect x="8" y="7" width="1" height="1" fill="#c0c0c0"/><rect x="9" y="7" width="1" height="1" fill="#ffff00"/><rect x="10" y="7" width="1" height="1" fill="#c0c0c0"/><rect x="11" y="7" width="1" height="1" fill="#ffff00"/><rect x="12" y="7" width="1" height="1" fill="#c0c0c0"/><rect x="13" y="7" width="1" height="1" fill="#ffff00"/><rect x="14" y="7" width="1" height="1" fill="#000000"/><rect x="0" y="8" width="1" height="1" fill="#808080"/><rect x="1" y="8" width="1" height="1" fill="#ffffff"/><rect x="2" y="8" width="1" height="1" fill="#ffff00"/><rect x="3" y="8" width="1" height="1" fill="#c0c0c0"/><rect x="4" y="8" width="1" height="1" fill="#ffff00"/><rect x="5" y="8" width="1" height="1" fill="#c0c0c0"/><rect x="6" y="8" width="1" height="1" fill="#ffff00"/><rect x="7" y="8" width="1" height="1" fill="#c0c0c0"/><rect x="8" y="8" width="1" height="1" fill="#ffff00"/><rect x="9" y="8" width="1" height="1" fill="#c0c0c0"/><rect x="10" y="8" width="1" height="1" fill="#ffff00"/><rect x="11" y="8" width="1" height="1" fill="#c0c0c0"/><rect x="12" y="8" width="1" height="1" fill="#ffff00"/><rect x="13" y="8" width="1" height="1" fill="#c0c0c0"/><rect x="14" y="8" width="1" height="1" fill="#000000"/><rect x="0" y="9" width="1" height="1" fill="#808080"/><rect x="1" y="9" width="1" height="1" fill="#ffffff"/><rect x="2" y="9" width="1" height="1" fill="#c0c0c0"/><rect x="3" y="9" width="1" height="1" fill="#ffff00"/><rect x="4" y="9" width="1" height="1" fill="#c0c0c0"/><rect x="5" y="9" width="1" height="1" fill="#ffff00"/><rect x="6" y="9" width="1" height="1" fill="#c0c0c0"/><rect x="7" y="9" width="1" height="1" fill="#ffff00"/><rect x="8" y="9" width="1" height="1" fill="#c0c0c0"/><rect x="9" y="9" width="1" height="1" fill="#ffff00"/><rect x="10" y="9" width="1" height="1" fill="#c0c0c0"/><rect x="11" y="9" width="1" height="1" fill="#ffff00"/><rect x="12" y="9" width="1" height="1" fill="#c0c0c0"/><rect x="13" y="9" width="1" height="1" fill="#ffff00"/><rect x="14" y="9" width="1" height="1" fill="#000000"/><rect x="0" y="10" width="1" height="1" fill="#808080"/><rect x="1" y="10" width="1" height="1" fill="#ffffff"/><rect x="2" y="10" width="1" height="1" fill="#ffff00"/><rect x="3" y="10" width="1" height="1" fill="#c0c0c0"/><rect x="4" y="10" width="1" height="1" fill="#ffff00"/><rect x="5" y="10" width="1" height="1" fill="#c0c0c0"/><rect x="6" y="10" width="1" height="1" fill="#ffff00"/><rect x="7" y="10" width="1" height="1" fill="#c0c0c0"/><rect x="8" y="10" width="1" height="1" fill="#ffff00"/><rect x="9" y="10" width="1" height="1" fill="#c0c0c0"/><rect x="10" y="10" width="1" height="1" fill="#ffff00"/><rect x="11" y="10" width="1" height="1" fill="#c0c0c0"/><rect x="12" y="10" width="1" height="1" fill="#ffff00"/><rect x="13" y="10" width="1" height="1" fill="#c0c0c0"/><rect x="14" y="10" width="1" height="1" fill="#000000"/><rect x="0" y="11" width="1" height="1" fill="#808080"/><rect x="1" y="11" width="1" height="1" fill="#ffffff"/><rect x="2" y="11" width="1" height="1" fill="#c0c0c0"/><rect x="3" y="11" width="1" height="1" fill="#ffff00"/><rect x="4" y="11" width="1" height="1" fill="#c0c0c0"/><rect x="5" y="11" width="1" height="1" fill="#ffff00"/><rect x="6" y="11" width="1" height="1" fill="#c0c0c0"/><rect x="7" y="11" width="1" height="1" fill="#ffff00"/><rect x="8" y="11" width="1" height="1" fill="#c0c0c0"/><rect x="9" y="11" width="1" height="1" fill="#ffff00"/><rect x="10" y="11" width="1" height="1" fill="#c0c0c0"/><rect x="11" y="11" width="1" height="1" fill="#ffff00"/><rect x="12" y="11" width="1" height="1" fill="#c0c0c0"/><rect x="13" y="11" width="1" height="1" fill="#ffff00"/><rect x="14" y="11" width="1" height="1" fill="#000000"/><rect x="0" y="12" width="1" height="1" fill="#808080"/><rect x="1" y="12" width="14" height="1" fill="#000000"/></svg>
<div class="t" style="left:109.0px;top:164px;font-size:12px;line-height:14px;color:#000;font-weight:400;letter-spacing:0.391px;">Public Objects</div>
<svg style="left:89px;top:180px" width="15" height="13" viewBox="0 0 15 13" shape-rendering="crispEdges"><rect x="2" y="0" width="5" height="1" fill="#808080"/><rect x="1" y="1" width="1" height="1" fill="#808080"/><rect x="2" y="1" width="1" height="1" fill="#c0c0c0"/><rect x="3" y="1" width="1" height="1" fill="#ffff00"/><rect x="4" y="1" width="1" height="1" fill="#c0c0c0"/><rect x="5" y="1" width="1" height="1" fill="#ffff00"/><rect x="6" y="1" width="1" height="1" fill="#c0c0c0"/><rect x="7" y="1" width="1" height="1" fill="#808080"/><rect x="0" y="2" width="1" height="1" fill="#808080"/><rect x="1" y="2" width="1" height="1" fill="#c0c0c0"/><rect x="2" y="2" width="1" height="1" fill="#ffff00"/><rect x="3" y="2" width="1" height="1" fill="#c0c0c0"/><rect x="4" y="2" width="1" height="1" fill="#ffff00"/><rect x="5" y="2" width="1" height="1" fill="#c0c0c0"/><rect x="6" y="2" width="1" height="1" fill="#ffff00"/><rect x="7" y="2" width="1" height="1" fill="#c0c0c0"/><rect x="8" y="2" width="6" height="1" fill="#808080"/><rect x="0" y="3" width="1" height="1" fill="#808080"/><rect x="1" y="3" width="13" height="1" fill="#ffffff"/><rect x="14" y="3" width="1" height="1" fill="#000000"/><rect x="0" y="4" width="1" height="1" fill="#808080"/><rect x="1" y="4" width="1" height="1" fill="#ffffff"/><rect x="2" y="4" width="1" height="1" fill="#ffff00"/><rect x="3" y="4" width="1" height="1" fill="#c0c0c0"/><rect x="4" y="4" width="1" height="1" fill="#ffff00"/><rect x="5" y="4" width="1" height="1" fill="#c0c0c0"/><rect x="6" y="4" width="1" height="1" fill="#ffff00"/><rect x="7" y="4" width="1" height="1" fill="#c0c0c0"/><rect x="8" y="4" width="1" height="1" fill="#ffff00"/><rect x="9" y="4" width="1" height="1" fill="#c0c0c0"/><rect x="10" y="4" width="1" height="1" fill="#ffff00"/><rect x="11" y="4" width="1" height="1" fill="#c0c0c0"/><rect x="12" y="4" width="1" height="1" fill="#ffff00"/><rect x="13" y="4" width="1" height="1" fill="#c0c0c0"/><rect x="14" y="4" width="1" height="1" fill="#000000"/><rect x="0" y="5" width="1" height="1" fill="#808080"/><rect x="1" y="5" width="1" height="1" fill="#ffffff"/><rect x="2" y="5" width="1" height="1" fill="#c0c0c0"/><rect x="3" y="5" width="1" height="1" fill="#ffff00"/><rect x="4" y="5" width="1" height="1" fill="#c0c0c0"/><rect x="5" y="5" width="1" height="1" fill="#ffff00"/><rect x="6" y="5" width="1" height="1" fill="#c0c0c0"/><rect x="7" y="5" width="1" height="1" fill="#ffff00"/><rect x="8" y="5" width="1" height="1" fill="#c0c0c0"/><rect x="9" y="5" width="1" height="1" fill="#ffff00"/><rect x="10" y="5" width="1" height="1" fill="#c0c0c0"/><rect x="11" y="5" width="1" height="1" fill="#ffff00"/><rect x="12" y="5" width="1" height="1" fill="#c0c0c0"/><rect x="13" y="5" width="1" height="1" fill="#ffff00"/><rect x="14" y="5" width="1" height="1" fill="#000000"/><rect x="0" y="6" width="1" height="1" fill="#808080"/><rect x="1" y="6" width="1" height="1" fill="#ffffff"/><rect x="2" y="6" width="1" height="1" fill="#ffff00"/><rect x="3" y="6" width="1" height="1" fill="#c0c0c0"/><rect x="4" y="6" width="1" height="1" fill="#ffff00"/><rect x="5" y="6" width="1" height="1" fill="#c0c0c0"/><rect x="6" y="6" width="1" height="1" fill="#ffff00"/><rect x="7" y="6" width="1" height="1" fill="#c0c0c0"/><rect x="8" y="6" width="1" height="1" fill="#ffff00"/><rect x="9" y="6" width="1" height="1" fill="#c0c0c0"/><rect x="10" y="6" width="1" height="1" fill="#ffff00"/><rect x="11" y="6" width="1" height="1" fill="#c0c0c0"/><rect x="12" y="6" width="1" height="1" fill="#ffff00"/><rect x="13" y="6" width="1" height="1" fill="#c0c0c0"/><rect x="14" y="6" width="1" height="1" fill="#000000"/><rect x="0" y="7" width="1" height="1" fill="#808080"/><rect x="1" y="7" width="1" height="1" fill="#ffffff"/><rect x="2" y="7" width="1" height="1" fill="#c0c0c0"/><rect x="3" y="7" width="1" height="1" fill="#ffff00"/><rect x="4" y="7" width="1" height="1" fill="#c0c0c0"/><rect x="5" y="7" width="1" height="1" fill="#ffff00"/><rect x="6" y="7" width="1" height="1" fill="#c0c0c0"/><rect x="7" y="7" width="1" height="1" fill="#ffff00"/><rect x="8" y="7" width="1" height="1" fill="#c0c0c0"/><rect x="9" y="7" width="1" height="1" fill="#ffff00"/><rect x="10" y="7" width="1" height="1" fill="#c0c0c0"/><rect x="11" y="7" width="1" height="1" fill="#ffff00"/><rect x="12" y="7" width="1" height="1" fill="#c0c0c0"/><rect x="13" y="7" width="1" height="1" fill="#ffff00"/><rect x="14" y="7" width="1" height="1" fill="#000000"/><rect x="0" y="8" width="1" height="1" fill="#808080"/><rect x="1" y="8" width="1" height="1" fill="#ffffff"/><rect x="2" y="8" width="1" height="1" fill="#ffff00"/><rect x="3" y="8" width="1" height="1" fill="#c0c0c0"/><rect x="4" y="8" width="1" height="1" fill="#ffff00"/><rect x="5" y="8" width="1" height="1" fill="#c0c0c0"/><rect x="6" y="8" width="1" height="1" fill="#ffff00"/><rect x="7" y="8" width="1" height="1" fill="#c0c0c0"/><rect x="8" y="8" width="1" height="1" fill="#ffff00"/><rect x="9" y="8" width="1" height="1" fill="#c0c0c0"/><rect x="10" y="8" width="1" height="1" fill="#ffff00"/><rect x="11" y="8" width="1" height="1" fill="#c0c0c0"/><rect x="12" y="8" width="1" height="1" fill="#ffff00"/><rect x="13" y="8" width="1" height="1" fill="#c0c0c0"/><rect x="14" y="8" width="1" height="1" fill="#000000"/><rect x="0" y="9" width="1" height="1" fill="#808080"/><rect x="1" y="9" width="1" height="1" fill="#ffffff"/><rect x="2" y="9" width="1" height="1" fill="#c0c0c0"/><rect x="3" y="9" width="1" height="1" fill="#ffff00"/><rect x="4" y="9" width="1" height="1" fill="#c0c0c0"/><rect x="5" y="9" width="1" height="1" fill="#ffff00"/><rect x="6" y="9" width="1" height="1" fill="#c0c0c0"/><rect x="7" y="9" width="1" height="1" fill="#ffff00"/><rect x="8" y="9" width="1" height="1" fill="#c0c0c0"/><rect x="9" y="9" width="1" height="1" fill="#ffff00"/><rect x="10" y="9" width="1" height="1" fill="#c0c0c0"/><rect x="11" y="9" width="1" height="1" fill="#ffff00"/><rect x="12" y="9" width="1" height="1" fill="#c0c0c0"/><rect x="13" y="9" width="1" height="1" fill="#ffff00"/><rect x="14" y="9" width="1" height="1" fill="#000000"/><rect x="0" y="10" width="1" height="1" fill="#808080"/><rect x="1" y="10" width="1" height="1" fill="#ffffff"/><rect x="2" y="10" width="1" height="1" fill="#ffff00"/><rect x="3" y="10" width="1" height="1" fill="#c0c0c0"/><rect x="4" y="10" width="1" height="1" fill="#ffff00"/><rect x="5" y="10" width="1" height="1" fill="#c0c0c0"/><rect x="6" y="10" width="1" height="1" fill="#ffff00"/><rect x="7" y="10" width="1" height="1" fill="#c0c0c0"/><rect x="8" y="10" width="1" height="1" fill="#ffff00"/><rect x="9" y="10" width="1" height="1" fill="#c0c0c0"/><rect x="10" y="10" width="1" height="1" fill="#ffff00"/><rect x="11" y="10" width="1" height="1" fill="#c0c0c0"/><rect x="12" y="10" width="1" height="1" fill="#ffff00"/><rect x="13" y="10" width="1" height="1" fill="#c0c0c0"/><rect x="14" y="10" width="1" height="1" fill="#000000"/><rect x="0" y="11" width="1" height="1" fill="#808080"/><rect x="1" y="11" width="1" height="1" fill="#ffffff"/><rect x="2" y="11" width="1" height="1" fill="#c0c0c0"/><rect x="3" y="11" width="1" height="1" fill="#ffff00"/><rect x="4" y="11" width="1" height="1" fill="#c0c0c0"/><rect x="5" y="11" width="1" height="1" fill="#ffff00"/><rect x="6" y="11" width="1" height="1" fill="#c0c0c0"/><rect x="7" y="11" width="1" height="1" fill="#ffff00"/><rect x="8" y="11" width="1" height="1" fill="#c0c0c0"/><rect x="9" y="11" width="1" height="1" fill="#ffff00"/><rect x="10" y="11" width="1" height="1" fill="#c0c0c0"/><rect x="11" y="11" width="1" height="1" fill="#ffff00"/><rect x="12" y="11" width="1" height="1" fill="#c0c0c0"/><rect x="13" y="11" width="1" height="1" fill="#ffff00"/><rect x="14" y="11" width="1" height="1" fill="#000000"/><rect x="0" y="12" width="1" height="1" fill="#808080"/><rect x="1" y="12" width="14" height="1" fill="#000000"/></svg>
<div class="t" style="left:109.0px;top:180px;font-size:12px;line-height:14px;color:#000;font-weight:400;letter-spacing:0.382px;">Schema Objects</div>
<svg style="left:92px;top:195px" width="16" height="15" viewBox="0 0 16 15" shape-rendering="crispEdges"><rect x="4" y="0" width="7" height="1" fill="#008080"/><rect x="4" y="1" width="1" height="1" fill="#008080"/><rect x="5" y="1" width="1" height="1" fill="#ffffff"/><rect x="6" y="1" width="4" height="1" fill="#008080"/><rect x="10" y="1" width="1" height="1" fill="#00ffff"/><rect x="11" y="1" width="1" height="1" fill="#808080"/><rect x="4" y="2" width="6" height="1" fill="#008080"/><rect x="10" y="2" width="1" height="1" fill="#00ffff"/><rect x="11" y="2" width="1" height="1" fill="#808080"/><rect x="4" y="3" width="6" height="1" fill="#008080"/><rect x="10" y="3" width="1" height="1" fill="#00ffff"/><rect x="11" y="3" width="1" height="1" fill="#808080"/><rect x="4" y="4" width="6" height="1" fill="#008080"/><rect x="10" y="4" width="1" height="1" fill="#00ffff"/><rect x="11" y="4" width="1" height="1" fill="#808080"/><rect x="4" y="5" width="6" height="1" fill="#008080"/><rect x="10" y="5" width="1" height="1" fill="#00ffff"/><rect x="11" y="5" width="1" height="1" fill="#808080"/><rect x="4" y="6" width="7" height="1" fill="#00ffff"/><rect x="11" y="6" width="1" height="1" fill="#808080"/><rect x="5" y="7" width="7" height="1" fill="#808080"/><rect x="3" y="8" width="2" height="1" fill="#000000"/><rect x="10" y="8" width="2" height="1" fill="#000000"/><rect x="3" y="9" width="3" height="1" fill="#000000"/><rect x="9" y="9" width="3" height="1" fill="#000000"/><rect x="0" y="10" width="4" height="1" fill="#ff0000"/><rect x="4" y="10" width="2" height="1" fill="#000000"/><rect x="9" y="10" width="2" height="1" fill="#000000"/><rect x="11" y="10" width="4" height="1" fill="#ff0000"/><rect x="0" y="11" width="1" height="1" fill="#ff0000"/><rect x="1" y="11" width="1" height="1" fill="#ffffff"/><rect x="2" y="11" width="2" height="1" fill="#ff0000"/><rect x="4" y="11" width="1" height="1" fill="#808080"/><rect x="10" y="11" width="1" height="1" fill="#808080"/><rect x="11" y="11" width="1" height="1" fill="#ff0000"/><rect x="12" y="11" width="1" height="1" fill="#ffffff"/><rect x="13" y="11" width="2" height="1" fill="#ff0000"/><rect x="15" y="11" width="1" height="1" fill="#808080"/><rect x="0" y="12" width="4" height="1" fill="#ff0000"/><rect x="4" y="12" width="1" height="1" fill="#808080"/><rect x="11" y="12" width="4" height="1" fill="#ff0000"/><rect x="15" y="12" width="1" height="1" fill="#808080"/><rect x="0" y="13" width="4" height="1" fill="#ff0000"/><rect x="4" y="13" width="1" height="1" fill="#808080"/><rect x="11" y="13" width="4" height="1" fill="#ff0000"/><rect x="15" y="13" width="1" height="1" fill="#808080"/><rect x="1" y="14" width="4" height="1" fill="#808080"/><rect x="12" y="14" width="4" height="1" fill="#808080"/></svg>
<div class="t" style="left:109.0px;top:196px;font-size:12px;line-height:14px;color:#000;font-weight:400;letter-spacing:0.291px;">Hierarchies</div>
<svg style="left:90px;top:211px" width="16" height="15" viewBox="0 0 16 15" shape-rendering="crispEdges"><rect x="5" y="0" width="5" height="1" fill="#c08000"/><rect x="3" y="1" width="2" height="1" fill="#c08000"/><rect x="5" y="1" width="5" height="1" fill="#ffff99"/><rect x="10" y="1" width="2" height="1" fill="#c08000"/><rect x="1" y="2" width="2" height="1" fill="#c08000"/><rect x="3" y="2" width="9" height="1" fill="#ffff99"/><rect x="12" y="2" width="2" height="1" fill="#c08000"/><rect x="0" y="3" width="1" height="1" fill="#c08000"/><rect x="1" y="3" width="13" height="1" fill="#ffff99"/><rect x="14" y="3" width="1" height="1" fill="#c08000"/><rect x="0" y="4" width="1" height="1" fill="#c08000"/><rect x="1" y="4" width="1" height="1" fill="#ffffff"/><rect x="2" y="4" width="11" height="1" fill="#ffff99"/><rect x="13" y="4" width="1" height="1" fill="#d0a000"/><rect x="14" y="4" width="1" height="1" fill="#c08000"/><rect x="0" y="5" width="1" height="1" fill="#c08000"/><rect x="1" y="5" width="2" height="1" fill="#ffff00"/><rect x="3" y="5" width="2" height="1" fill="#ffffff"/><rect x="5" y="5" width="6" height="1" fill="#ffff99"/><rect x="11" y="5" width="3" height="1" fill="#d0a000"/><rect x="14" y="5" width="1" height="1" fill="#c08000"/><rect x="0" y="6" width="1" height="1" fill="#c08000"/><rect x="1" y="6" width="4" height="1" fill="#ffff00"/><rect x="5" y="6" width="2" height="1" fill="#ffffff"/><rect x="7" y="6" width="2" height="1" fill="#ffff99"/><rect x="9" y="6" width="5" height="1" fill="#d0a000"/><rect x="14" y="6" width="1" height="1" fill="#c08000"/><rect x="0" y="7" width="1" height="1" fill="#c08000"/><rect x="1" y="7" width="6" height="1" fill="#ffff00"/><rect x="7" y="7" width="1" height="1" fill="#c08000"/><rect x="8" y="7" width="6" height="1" fill="#d0a000"/><rect x="14" y="7" width="1" height="1" fill="#c08000"/><rect x="0" y="8" width="1" height="1" fill="#c08000"/><rect x="1" y="8" width="6" height="1" fill="#ffff00"/><rect x="7" y="8" width="1" height="1" fill="#c08000"/><rect x="8" y="8" width="6" height="1" fill="#d0a000"/><rect x="14" y="8" width="1" height="1" fill="#c08000"/><rect x="0" y="9" width="1" height="1" fill="#c08000"/><rect x="1" y="9" width="6" height="1" fill="#ffff00"/><rect x="7" y="9" width="1" height="1" fill="#c08000"/><rect x="8" y="9" width="6" height="1" fill="#d0a000"/><rect x="14" y="9" width="1" height="1" fill="#c08000"/><rect x="0" y="10" width="1" height="1" fill="#c08000"/><rect x="1" y="10" width="6" height="1" fill="#ffff00"/><rect x="7" y="10" width="1" height="1" fill="#c08000"/><rect x="8" y="10" width="6" height="1" fill="#d0a000"/><rect x="14" y="10" width="1" height="1" fill="#c08000"/><rect x="0" y="11" width="1" height="1" fill="#c08000"/><rect x="1" y="11" width="6" height="1" fill="#ffff00"/><rect x="7" y="11" width="1" height="1" fill="#c08000"/><rect x="8" y="11" width="6" height="1" fill="#d0a000"/><rect x="14" y="11" width="1" height="1" fill="#c08000"/><rect x="1" y="12" width="2" height="1" fill="#c08000"/><rect x="3" y="12" width="4" height="1" fill="#ffff00"/><rect x="7" y="12" width="1" height="1" fill="#c08000"/><rect x="8" y="12" width="4" height="1" fill="#d0a000"/><rect x="12" y="12" width="2" height="1" fill="#c08000"/><rect x="3" y="13" width="2" height="1" fill="#c08000"/><rect x="5" y="13" width="2" height="1" fill="#ffff00"/><rect x="7" y="13" width="1" height="1" fill="#c08000"/><rect x="8" y="13" width="2" height="1" fill="#d0a000"/><rect x="10" y="13" width="2" height="1" fill="#c08000"/><rect x="5" y="14" width="5" height="1" fill="#c08000"/></svg>
<div class="t" style="left:110.0px;top:212px;font-size:12px;line-height:14px;color:#000;font-weight:400;letter-spacing:-0.077px;">Attributes</div>
<svg style="left:90px;top:227px" width="13" height="14" viewBox="0 0 13 14" shape-rendering="crispEdges"><rect x="0" y="0" width="13" height="1" fill="#000000"/><rect x="0" y="1" width="1" height="1" fill="#000000"/><rect x="1" y="1" width="10" height="1" fill="#0000ff"/><rect x="11" y="1" width="1" height="1" fill="#ffffff"/><rect x="12" y="1" width="1" height="1" fill="#000000"/><rect x="0" y="2" width="1" height="1" fill="#000000"/><rect x="1" y="2" width="11" height="1" fill="#ffffff"/><rect x="12" y="2" width="1" height="1" fill="#000000"/><rect x="0" y="3" width="1" height="1" fill="#000000"/><rect x="1" y="3" width="11" height="1" fill="#ffffff"/><rect x="12" y="3" width="1" height="1" fill="#000000"/><rect x="0" y="4" width="1" height="1" fill="#000000"/><rect x="1" y="4" width="2" height="1" fill="#ffffff"/><rect x="3" y="4" width="1" height="1" fill="#000000"/><rect x="4" y="4" width="1" height="1" fill="#ffffff"/><rect x="5" y="4" width="1" height="1" fill="#000000"/><rect x="6" y="4" width="6" height="1" fill="#ffffff"/><rect x="12" y="4" width="1" height="1" fill="#000000"/><rect x="0" y="5" width="1" height="1" fill="#000000"/><rect x="1" y="5" width="1" height="1" fill="#ffffff"/><rect x="2" y="5" width="5" height="1" fill="#000000"/><rect x="7" y="5" width="1" height="1" fill="#ffffff"/><rect x="8" y="5" width="2" height="1" fill="#808080"/><rect x="10" y="5" width="2" height="1" fill="#ffffff"/><rect x="12" y="5" width="1" height="1" fill="#000000"/><rect x="0" y="6" width="1" height="1" fill="#000000"/><rect x="1" y="6" width="2" height="1" fill="#ffffff"/><rect x="3" y="6" width="1" height="1" fill="#000000"/><rect x="4" y="6" width="1" height="1" fill="#ffffff"/><rect x="5" y="6" width="1" height="1" fill="#000000"/><rect x="6" y="6" width="6" height="1" fill="#ffffff"/><rect x="12" y="6" width="1" height="1" fill="#000000"/><rect x="0" y="7" width="1" height="1" fill="#000000"/><rect x="1" y="7" width="2" height="1" fill="#ffffff"/><rect x="3" y="7" width="1" height="1" fill="#000000"/><rect x="4" y="7" width="1" height="1" fill="#ffffff"/><rect x="5" y="7" width="1" height="1" fill="#000000"/><rect x="6" y="7" width="2" height="1" fill="#ffffff"/><rect x="8" y="7" width="2" height="1" fill="#808080"/><rect x="10" y="7" width="2" height="1" fill="#ffffff"/><rect x="12" y="7" width="1" height="1" fill="#000000"/><rect x="0" y="8" width="1" height="1" fill="#000000"/><rect x="1" y="8" width="1" height="1" fill="#ffffff"/><rect x="2" y="8" width="5" height="1" fill="#000000"/><rect x="7" y="8" width="5" height="1" fill="#ffffff"/><rect x="12" y="8" width="1" height="1" fill="#000000"/><rect x="0" y="9" width="1" height="1" fill="#000000"/><rect x="1" y="9" width="2" height="1" fill="#ffffff"/><rect x="3" y="9" width="1" height="1" fill="#000000"/><rect x="4" y="9" width="1" height="1" fill="#ffffff"/><rect x="5" y="9" width="1" height="1" fill="#000000"/><rect x="6" y="9" width="2" height="1" fill="#ffffff"/><rect x="8" y="9" width="2" height="1" fill="#808080"/><rect x="10" y="9" width="2" height="1" fill="#ffffff"/><rect x="12" y="9" width="1" height="1" fill="#000000"/><rect x="0" y="10" width="1" height="1" fill="#000000"/><rect x="1" y="10" width="11" height="1" fill="#ffffff"/><rect x="12" y="10" width="1" height="1" fill="#000000"/><rect x="0" y="11" width="1" height="1" fill="#000000"/><rect x="1" y="11" width="7" height="1" fill="#ffffff"/><rect x="8" y="11" width="2" height="1" fill="#808080"/><rect x="10" y="11" width="2" height="1" fill="#ffffff"/><rect x="12" y="11" width="1" height="1" fill="#000000"/><rect x="0" y="12" width="1" height="1" fill="#000000"/><rect x="1" y="12" width="11" height="1" fill="#ffffff"/><rect x="12" y="12" width="1" height="1" fill="#000000"/><rect x="0" y="13" width="13" height="1" fill="#000000"/></svg>
<div class="t" style="left:109.0px;top:228px;font-size:12px;line-height:14px;color:#000;font-weight:400;letter-spacing:0.366px;">Facts</div>
<svg style="left:89px;top:243px" width="16" height="16" viewBox="0 0 16 16" shape-rendering="crispEdges"><rect x="4" y="0" width="1" height="1" fill="#000000"/><rect x="13" y="0" width="1" height="1" fill="#000000"/><rect x="2" y="1" width="5" height="1" fill="#000000"/><rect x="1" y="2" width="1" height="1" fill="#000000"/><rect x="2" y="2" width="5" height="1" fill="#ffff00"/><rect x="7" y="2" width="1" height="1" fill="#000000"/><rect x="11" y="2" width="5" height="1" fill="#000000"/><rect x="0" y="3" width="1" height="1" fill="#000000"/><rect x="1" y="3" width="7" height="1" fill="#ffff00"/><rect x="8" y="3" width="1" height="1" fill="#000000"/><rect x="0" y="4" width="1" height="1" fill="#000000"/><rect x="1" y="4" width="3" height="1" fill="#ffff00"/><rect x="4" y="4" width="1" height="1" fill="#000000"/><rect x="5" y="4" width="3" height="1" fill="#ffff00"/><rect x="8" y="4" width="1" height="1" fill="#000000"/><rect x="13" y="4" width="1" height="1" fill="#000000"/><rect x="0" y="5" width="2" height="1" fill="#000000"/><rect x="2" y="5" width="1" height="1" fill="#ffff00"/><rect x="3" y="5" width="1" height="1" fill="#000000"/><rect x="4" y="5" width="1" height="1" fill="#ffffff"/><rect x="5" y="5" width="1" height="1" fill="#000000"/><rect x="6" y="5" width="1" height="1" fill="#ffff00"/><rect x="7" y="5" width="2" height="1" fill="#000000"/><rect x="10" y="5" width="1" height="1" fill="#000000"/><rect x="0" y="6" width="1" height="1" fill="#000000"/><rect x="1" y="6" width="3" height="1" fill="#ffff00"/><rect x="4" y="6" width="1" height="1" fill="#000000"/><rect x="5" y="6" width="3" height="1" fill="#ffff00"/><rect x="8" y="6" width="5" height="1" fill="#000000"/><rect x="0" y="7" width="1" height="1" fill="#000000"/><rect x="1" y="7" width="6" height="1" fill="#ffff00"/><rect x="7" y="7" width="1" height="1" fill="#000000"/><rect x="8" y="7" width="5" height="1" fill="#0000ff"/><rect x="13" y="7" width="1" height="1" fill="#000000"/><rect x="1" y="8" width="1" height="1" fill="#000000"/><rect x="2" y="8" width="4" height="1" fill="#ffff00"/><rect x="6" y="8" width="1" height="1" fill="#000000"/><rect x="7" y="8" width="7" height="1" fill="#0000ff"/><rect x="14" y="8" width="1" height="1" fill="#000000"/><rect x="2" y="9" width="5" height="1" fill="#000000"/><rect x="7" y="9" width="3" height="1" fill="#0000ff"/><rect x="10" y="9" width="1" height="1" fill="#000000"/><rect x="11" y="9" width="3" height="1" fill="#0000ff"/><rect x="14" y="9" width="1" height="1" fill="#000000"/><rect x="4" y="10" width="1" height="1" fill="#000000"/><rect x="6" y="10" width="2" height="1" fill="#000000"/><rect x="8" y="10" width="1" height="1" fill="#0000ff"/><rect x="9" y="10" width="1" height="1" fill="#000000"/><rect x="10" y="10" width="1" height="1" fill="#ffffff"/><rect x="11" y="10" width="1" height="1" fill="#000000"/><rect x="12" y="10" width="1" height="1" fill="#0000ff"/><rect x="13" y="10" width="2" height="1" fill="#000000"/><rect x="2" y="11" width="1" height="1" fill="#000000"/><rect x="6" y="11" width="1" height="1" fill="#000000"/><rect x="7" y="11" width="3" height="1" fill="#0000ff"/><rect x="10" y="11" width="1" height="1" fill="#000000"/><rect x="11" y="11" width="3" height="1" fill="#0000ff"/><rect x="14" y="11" width="1" height="1" fill="#000000"/><rect x="2" y="12" width="1" height="1" fill="#000000"/><rect x="6" y="12" width="1" height="1" fill="#000000"/><rect x="7" y="12" width="7" height="1" fill="#0000ff"/><rect x="14" y="12" width="1" height="1" fill="#000000"/><rect x="0" y="13" width="5" height="1" fill="#000000"/><rect x="7" y="13" width="1" height="1" fill="#000000"/><rect x="8" y="13" width="5" height="1" fill="#0000ff"/><rect x="13" y="13" width="1" height="1" fill="#000000"/><rect x="2" y="14" width="1" height="1" fill="#000000"/><rect x="8" y="14" width="5" height="1" fill="#000000"/><rect x="2" y="15" width="1" height="1" fill="#000000"/><rect x="10" y="15" width="1" height="1" fill="#000000"/></svg>
<div class="t" style="left:109.0px;top:244px;font-size:12px;line-height:14px;color:#000;font-weight:400;letter-spacing:0.306px;">Functions and Operators</div>
<svg style="left:99px;top:260px" width="15" height="13" viewBox="0 0 15 13" shape-rendering="crispEdges"><rect x="2" y="0" width="5" height="1" fill="#808080"/><rect x="1" y="1" width="1" height="1" fill="#808080"/><rect x="2" y="1" width="1" height="1" fill="#c0c0c0"/><rect x="3" y="1" width="1" height="1" fill="#ffff00"/><rect x="4" y="1" width="1" height="1" fill="#c0c0c0"/><rect x="5" y="1" width="1" height="1" fill="#ffff00"/><rect x="6" y="1" width="1" height="1" fill="#c0c0c0"/><rect x="7" y="1" width="1" height="1" fill="#808080"/><rect x="0" y="2" width="1" height="1" fill="#808080"/><rect x="1" y="2" width="1" height="1" fill="#c0c0c0"/><rect x="2" y="2" width="1" height="1" fill="#ffff00"/><rect x="3" y="2" width="1" height="1" fill="#c0c0c0"/><rect x="4" y="2" width="1" height="1" fill="#ffff00"/><rect x="5" y="2" width="1" height="1" fill="#c0c0c0"/><rect x="6" y="2" width="1" height="1" fill="#ffff00"/><rect x="7" y="2" width="1" height="1" fill="#c0c0c0"/><rect x="8" y="2" width="6" height="1" fill="#808080"/><rect x="0" y="3" width="1" height="1" fill="#808080"/><rect x="1" y="3" width="13" height="1" fill="#ffffff"/><rect x="14" y="3" width="1" height="1" fill="#000000"/><rect x="0" y="4" width="1" height="1" fill="#808080"/><rect x="1" y="4" width="1" height="1" fill="#ffffff"/><rect x="2" y="4" width="1" height="1" fill="#ffff00"/><rect x="3" y="4" width="1" height="1" fill="#c0c0c0"/><rect x="4" y="4" width="1" height="1" fill="#ffff00"/><rect x="5" y="4" width="1" height="1" fill="#c0c0c0"/><rect x="6" y="4" width="1" height="1" fill="#ffff00"/><rect x="7" y="4" width="1" height="1" fill="#c0c0c0"/><rect x="8" y="4" width="1" height="1" fill="#ffff00"/><rect x="9" y="4" width="1" height="1" fill="#c0c0c0"/><rect x="10" y="4" width="1" height="1" fill="#ffff00"/><rect x="11" y="4" width="1" height="1" fill="#c0c0c0"/><rect x="12" y="4" width="1" height="1" fill="#ffff00"/><rect x="13" y="4" width="1" height="1" fill="#c0c0c0"/><rect x="14" y="4" width="1" height="1" fill="#000000"/><rect x="0" y="5" width="1" height="1" fill="#808080"/><rect x="1" y="5" width="1" height="1" fill="#ffffff"/><rect x="2" y="5" width="1" height="1" fill="#c0c0c0"/><rect x="3" y="5" width="1" height="1" fill="#ffff00"/><rect x="4" y="5" width="1" height="1" fill="#c0c0c0"/><rect x="5" y="5" width="1" height="1" fill="#ffff00"/><rect x="6" y="5" width="1" height="1" fill="#c0c0c0"/><rect x="7" y="5" width="1" height="1" fill="#ffff00"/><rect x="8" y="5" width="1" height="1" fill="#c0c0c0"/><rect x="9" y="5" width="1" height="1" fill="#ffff00"/><rect x="10" y="5" width="1" height="1" fill="#c0c0c0"/><rect x="11" y="5" width="1" height="1" fill="#ffff00"/><rect x="12" y="5" width="1" height="1" fill="#c0c0c0"/><rect x="13" y="5" width="1" height="1" fill="#ffff00"/><rect x="14" y="5" width="1" height="1" fill="#000000"/><rect x="0" y="6" width="1" height="1" fill="#808080"/><rect x="1" y="6" width="1" height="1" fill="#ffffff"/><rect x="2" y="6" width="1" height="1" fill="#ffff00"/><rect x="3" y="6" width="1" height="1" fill="#c0c0c0"/><rect x="4" y="6" width="1" height="1" fill="#ffff00"/><rect x="5" y="6" width="1" height="1" fill="#c0c0c0"/><rect x="6" y="6" width="1" height="1" fill="#ffff00"/><rect x="7" y="6" width="1" height="1" fill="#c0c0c0"/><rect x="8" y="6" width="1" height="1" fill="#ffff00"/><rect x="9" y="6" width="1" height="1" fill="#c0c0c0"/><rect x="10" y="6" width="1" height="1" fill="#ffff00"/><rect x="11" y="6" width="1" height="1" fill="#c0c0c0"/><rect x="12" y="6" width="1" height="1" fill="#ffff00"/><rect x="13" y="6" width="1" height="1" fill="#c0c0c0"/><rect x="14" y="6" width="1" height="1" fill="#000000"/><rect x="0" y="7" width="1" height="1" fill="#808080"/><rect x="1" y="7" width="1" height="1" fill="#ffffff"/><rect x="2" y="7" width="1" height="1" fill="#c0c0c0"/><rect x="3" y="7" width="1" height="1" fill="#ffff00"/><rect x="4" y="7" width="1" height="1" fill="#c0c0c0"/><rect x="5" y="7" width="1" height="1" fill="#ffff00"/><rect x="6" y="7" width="1" height="1" fill="#c0c0c0"/><rect x="7" y="7" width="1" height="1" fill="#ffff00"/><rect x="8" y="7" width="1" height="1" fill="#c0c0c0"/><rect x="9" y="7" width="1" height="1" fill="#ffff00"/><rect x="10" y="7" width="1" height="1" fill="#c0c0c0"/><rect x="11" y="7" width="1" height="1" fill="#ffff00"/><rect x="12" y="7" width="1" height="1" fill="#c0c0c0"/><rect x="13" y="7" width="1" height="1" fill="#ffff00"/><rect x="14" y="7" width="1" height="1" fill="#000000"/><rect x="0" y="8" width="1" height="1" fill="#808080"/><rect x="1" y="8" width="1" height="1" fill="#ffffff"/><rect x="2" y="8" width="1" height="1" fill="#ffff00"/><rect x="3" y="8" width="1" height="1" fill="#c0c0c0"/><rect x="4" y="8" width="1" height="1" fill="#ffff00"/><rect x="5" y="8" width="1" height="1" fill="#c0c0c0"/><rect x="6" y="8" width="1" height="1" fill="#ffff00"/><rect x="7" y="8" width="1" height="1" fill="#c0c0c0"/><rect x="8" y="8" width="1" height="1" fill="#ffff00"/><rect x="9" y="8" width="1" height="1" fill="#c0c0c0"/><rect x="10" y="8" width="1" height="1" fill="#ffff00"/><rect x="11" y="8" width="1" height="1" fill="#c0c0c0"/><rect x="12" y="8" width="1" height="1" fill="#ffff00"/><rect x="13" y="8" width="1" height="1" fill="#c0c0c0"/><rect x="14" y="8" width="1" height="1" fill="#000000"/><rect x="0" y="9" width="1" height="1" fill="#808080"/><rect x="1" y="9" width="1" height="1" fill="#ffffff"/><rect x="2" y="9" width="1" height="1" fill="#c0c0c0"/><rect x="3" y="9" width="1" height="1" fill="#ffff00"/><rect x="4" y="9" width="1" height="1" fill="#c0c0c0"/><rect x="5" y="9" width="1" height="1" fill="#ffff00"/><rect x="6" y="9" width="1" height="1" fill="#c0c0c0"/><rect x="7" y="9" width="1" height="1" fill="#ffff00"/><rect x="8" y="9" width="1" height="1" fill="#c0c0c0"/><rect x="9" y="9" width="1" height="1" fill="#ffff00"/><rect x="10" y="9" width="1" height="1" fill="#c0c0c0"/><rect x="11" y="9" width="1" height="1" fill="#ffff00"/><rect x="12" y="9" width="1" height="1" fill="#c0c0c0"/><rect x="13" y="9" width="1" height="1" fill="#ffff00"/><rect x="14" y="9" width="1" height="1" fill="#000000"/><rect x="0" y="10" width="1" height="1" fill="#808080"/><rect x="1" y="10" width="1" height="1" fill="#ffffff"/><rect x="2" y="10" width="1" height="1" fill="#ffff00"/><rect x="3" y="10" width="1" height="1" fill="#c0c0c0"/><rect x="4" y="10" width="1" height="1" fill="#ffff00"/><rect x="5" y="10" width="1" height="1" fill="#c0c0c0"/><rect x="6" y="10" width="1" height="1" fill="#ffff00"/><rect x="7" y="10" width="1" height="1" fill="#c0c0c0"/><rect x="8" y="10" width="1" height="1" fill="#ffff00"/><rect x="9" y="10" width="1" height="1" fill="#c0c0c0"/><rect x="10" y="10" width="1" height="1" fill="#ffff00"/><rect x="11" y="10" width="1" height="1" fill="#c0c0c0"/><rect x="12" y="10" width="1" height="1" fill="#ffff00"/><rect x="13" y="10" width="1" height="1" fill="#c0c0c0"/><rect x="14" y="10" width="1" height="1" fill="#000000"/><rect x="0" y="11" width="1" height="1" fill="#808080"/><rect x="1" y="11" width="1" height="1" fill="#ffffff"/><rect x="2" y="11" width="1" height="1" fill="#c0c0c0"/><rect x="3" y="11" width="1" height="1" fill="#ffff00"/><rect x="4" y="11" width="1" height="1" fill="#c0c0c0"/><rect x="5" y="11" width="1" height="1" fill="#ffff00"/><rect x="6" y="11" width="1" height="1" fill="#c0c0c0"/><rect x="7" y="11" width="1" height="1" fill="#ffff00"/><rect x="8" y="11" width="1" height="1" fill="#c0c0c0"/><rect x="9" y="11" width="1" height="1" fill="#ffff00"/><rect x="10" y="11" width="1" height="1" fill="#c0c0c0"/><rect x="11" y="11" width="1" height="1" fill="#ffff00"/><rect x="12" y="11" width="1" height="1" fill="#c0c0c0"/><rect x="13" y="11" width="1" height="1" fill="#ffff00"/><rect x="14" y="11" width="1" height="1" fill="#000000"/><rect x="0" y="12" width="1" height="1" fill="#808080"/><rect x="1" y="12" width="14" height="1" fill="#000000"/></svg>
<div class="t" style="left:118.6px;top:260px;font-size:12px;line-height:14px;color:#000;font-weight:400;letter-spacing:0.422px;">Functions</div>
<svg style="left:109px;top:276px" width="16" height="12" viewBox="0 0 16 12" shape-rendering="crispEdges"><rect x="3" y="0" width="5" height="1" fill="#404060"/><rect x="2" y="1" width="1" height="1" fill="#404060"/><rect x="3" y="1" width="1" height="1" fill="#ffff00"/><rect x="4" y="1" width="1" height="1" fill="#9090c0"/><rect x="5" y="1" width="1" height="1" fill="#ffff00"/><rect x="6" y="1" width="1" height="1" fill="#9090c0"/><rect x="7" y="1" width="1" height="1" fill="#ffff00"/><rect x="8" y="1" width="1" height="1" fill="#404060"/><rect x="2" y="2" width="1" height="1" fill="#404060"/><rect x="3" y="2" width="1" height="1" fill="#9090c0"/><rect x="4" y="2" width="1" height="1" fill="#ffff00"/><rect x="5" y="2" width="1" height="1" fill="#9090c0"/><rect x="6" y="2" width="1" height="1" fill="#ffff00"/><rect x="7" y="2" width="1" height="1" fill="#9090c0"/><rect x="8" y="2" width="1" height="1" fill="#ffff00"/><rect x="9" y="2" width="6" height="1" fill="#404060"/><rect x="2" y="3" width="1" height="1" fill="#404060"/><rect x="3" y="3" width="1" height="1" fill="#ffff00"/><rect x="4" y="3" width="1" height="1" fill="#9090c0"/><rect x="5" y="3" width="1" height="1" fill="#ffff00"/><rect x="6" y="3" width="1" height="1" fill="#9090c0"/><rect x="7" y="3" width="1" height="1" fill="#ffff00"/><rect x="8" y="3" width="1" height="1" fill="#9090c0"/><rect x="9" y="3" width="1" height="1" fill="#ffff00"/><rect x="10" y="3" width="1" height="1" fill="#9090c0"/><rect x="11" y="3" width="1" height="1" fill="#ffff00"/><rect x="12" y="3" width="1" height="1" fill="#9090c0"/><rect x="13" y="3" width="1" height="1" fill="#ffff00"/><rect x="14" y="3" width="1" height="1" fill="#9090c0"/><rect x="15" y="3" width="1" height="1" fill="#000020"/><rect x="0" y="4" width="13" height="1" fill="#404060"/><rect x="13" y="4" width="1" height="1" fill="#9090c0"/><rect x="14" y="4" width="1" height="1" fill="#ffff00"/><rect x="15" y="4" width="1" height="1" fill="#000020"/><rect x="0" y="5" width="1" height="1" fill="#404060"/><rect x="1" y="5" width="11" height="1" fill="#c0c0e0"/><rect x="12" y="5" width="1" height="1" fill="#000020"/><rect x="13" y="5" width="1" height="1" fill="#ffff00"/><rect x="14" y="5" width="1" height="1" fill="#9090c0"/><rect x="15" y="5" width="1" height="1" fill="#000020"/><rect x="1" y="6" width="1" height="1" fill="#404060"/><rect x="2" y="6" width="1" height="1" fill="#c0c0e0"/><rect x="3" y="6" width="1" height="1" fill="#9090c0"/><rect x="4" y="6" width="1" height="1" fill="#ffff00"/><rect x="5" y="6" width="1" height="1" fill="#9090c0"/><rect x="6" y="6" width="1" height="1" fill="#ffff00"/><rect x="7" y="6" width="1" height="1" fill="#9090c0"/><rect x="8" y="6" width="1" height="1" fill="#ffff00"/><rect x="9" y="6" width="1" height="1" fill="#9090c0"/><rect x="10" y="6" width="1" height="1" fill="#ffff00"/><rect x="11" y="6" width="1" height="1" fill="#9090c0"/><rect x="12" y="6" width="1" height="1" fill="#ffff00"/><rect x="13" y="6" width="1" height="1" fill="#000020"/><rect x="14" y="6" width="1" height="1" fill="#ffff00"/><rect x="15" y="6" width="1" height="1" fill="#000020"/><rect x="1" y="7" width="1" height="1" fill="#404060"/><rect x="2" y="7" width="1" height="1" fill="#9090c0"/><rect x="3" y="7" width="1" height="1" fill="#ffff00"/><rect x="4" y="7" width="1" height="1" fill="#9090c0"/><rect x="5" y="7" width="1" height="1" fill="#ffff00"/><rect x="6" y="7" width="1" height="1" fill="#9090c0"/><rect x="7" y="7" width="1" height="1" fill="#ffff00"/><rect x="8" y="7" width="1" height="1" fill="#9090c0"/><rect x="9" y="7" width="1" height="1" fill="#ffff00"/><rect x="10" y="7" width="1" height="1" fill="#9090c0"/><rect x="11" y="7" width="1" height="1" fill="#ffff00"/><rect x="12" y="7" width="1" height="1" fill="#9090c0"/><rect x="13" y="7" width="1" height="1" fill="#ffff00"/><rect x="14" y="7" width="2" height="1" fill="#000020"/><rect x="2" y="8" width="1" height="1" fill="#404060"/><rect x="3" y="8" width="1" height="1" fill="#9090c0"/><rect x="4" y="8" width="1" height="1" fill="#ffff00"/><rect x="5" y="8" width="1" height="1" fill="#9090c0"/><rect x="6" y="8" width="1" height="1" fill="#ffff00"/><rect x="7" y="8" width="1" height="1" fill="#9090c0"/><rect x="8" y="8" width="1" height="1" fill="#ffff00"/><rect x="9" y="8" width="1" height="1" fill="#9090c0"/><rect x="10" y="8" width="1" height="1" fill="#ffff00"/><rect x="11" y="8" width="1" height="1" fill="#9090c0"/><rect x="12" y="8" width="1" height="1" fill="#ffff00"/><rect x="13" y="8" width="1" height="1" fill="#9090c0"/><rect x="14" y="8" width="2" height="1" fill="#000020"/><rect x="2" y="9" width="1" height="1" fill="#404060"/><rect x="3" y="9" width="1" height="1" fill="#ffff00"/><rect x="4" y="9" width="1" height="1" fill="#9090c0"/><rect x="5" y="9" width="1" height="1" fill="#ffff00"/><rect x="6" y="9" width="1" height="1" fill="#9090c0"/><rect x="7" y="9" width="1" height="1" fill="#ffff00"/><rect x="8" y="9" width="1" height="1" fill="#9090c0"/><rect x="9" y="9" width="1" height="1" fill="#ffff00"/><rect x="10" y="9" width="1" height="1" fill="#9090c0"/><rect x="11" y="9" width="1" height="1" fill="#ffff00"/><rect x="12" y="9" width="1" height="1" fill="#9090c0"/><rect x="13" y="9" width="1" height="1" fill="#ffff00"/><rect x="14" y="9" width="1" height="1" fill="#9090c0"/><rect x="15" y="9" width="1" height="1" fill="#000020"/><rect x="3" y="10" width="1" height="1" fill="#404060"/><rect x="4" y="10" width="1" height="1" fill="#ffff00"/><rect x="5" y="10" width="1" height="1" fill="#9090c0"/><rect x="6" y="10" width="1" height="1" fill="#ffff00"/><rect x="7" y="10" width="1" height="1" fill="#9090c0"/><rect x="8" y="10" width="1" height="1" fill="#ffff00"/><rect x="9" y="10" width="1" height="1" fill="#9090c0"/><rect x="10" y="10" width="1" height="1" fill="#ffff00"/><rect x="11" y="10" width="1" height="1" fill="#9090c0"/><rect x="12" y="10" width="1" height="1" fill="#ffff00"/><rect x="13" y="10" width="1" height="1" fill="#9090c0"/><rect x="14" y="10" width="1" height="1" fill="#ffff00"/><rect x="15" y="10" width="1" height="1" fill="#000020"/><rect x="3" y="11" width="13" height="1" fill="#000020"/></svg>
<div style="left:128px;top:276px;width:94px;height:15px;background:#000080;"></div>
<svg style="left:128px;top:276px" width="94" height="15" viewBox="0 0 94 15" shape-rendering="crispEdges"><rect x="0" y="0" width="1" height="1" fill="#ffff00"/><rect x="0" y="14" width="1" height="1" fill="#ffff00"/><rect x="2" y="0" width="1" height="1" fill="#ffff00"/><rect x="2" y="14" width="1" height="1" fill="#ffff00"/><rect x="4" y="0" width="1" height="1" fill="#ffff00"/><rect x="4" y="14" width="1" height="1" fill="#ffff00"/><rect x="6" y="0" width="1" height="1" fill="#ffff00"/><rect x="6" y="14" width="1" height="1" fill="#ffff00"/><rect x="8" y="0" width="1" height="1" fill="#ffff00"/><rect x="8" y="14" width="1" height="1" fill="#ffff00"/><rect x="10" y="0" width="1" height="1" fill="#ffff00"/><rect x="10" y="14" width="1" height="1" fill="#ffff00"/><rect x="12" y="0" width="1" height="1" fill="#ffff00"/><rect x="12" y="14" width="1" height="1" fill="#ffff00"/><rect x="14" y="0" width="1" height="1" fill="#ffff00"/><rect x="14" y="14" width="1" height="1" fill="#ffff00"/><rect x="16" y="0" width="1" height="1" fill="#ffff00"/><rect x="16" y="14" width="1" height="1" fill="#ffff00"/><rect x="18" y="0" width="1" height="1" fill="#ffff00"/><rect x="18" y="14" width="1" height="1" fill="#ffff00"/><rect x="20" y="0" width="1" height="1" fill="#ffff00"/><rect x="20" y="14" width="1" height="1" fill="#ffff00"/><rect x="22" y="0" width="1" height="1" fill="#ffff00"/><rect x="22" y="14" width="1" height="1" fill="#ffff00"/><rect x="24" y="0" width="1" height="1" fill="#ffff00"/><rect x="24" y="14" width="1" height="1" fill="#ffff00"/><rect x="26" y="0" width="1" height="1" fill="#ffff00"/><rect x="26" y="14" width="1" height="1" fill="#ffff00"/><rect x="28" y="0" width="1" height="1" fill="#ffff00"/><rect x="28" y="14" width="1" height="1" fill="#ffff00"/><rect x="30" y="0" width="1" height="1" fill="#ffff00"/><rect x="30" y="14" width="1" height="1" fill="#ffff00"/><rect x="32" y="0" width="1" height="1" fill="#ffff00"/><rect x="32" y="14" width="1" height="1" fill="#ffff00"/><rect x="34" y="0" width="1" height="1" fill="#ffff00"/><rect x="34" y="14" width="1" height="1" fill="#ffff00"/><rect x="36" y="0" width="1" height="1" fill="#ffff00"/><rect x="36" y="14" width="1" height="1" fill="#ffff00"/><rect x="38" y="0" width="1" height="1" fill="#ffff00"/><rect x="38" y="14" width="1" height="1" fill="#ffff00"/><rect x="40" y="0" width="1" height="1" fill="#ffff00"/><rect x="40" y="14" width="1" height="1" fill="#ffff00"/><rect x="42" y="0" width="1" height="1" fill="#ffff00"/><rect x="42" y="14" width="1" height="1" fill="#ffff00"/><rect x="44" y="0" width="1" height="1" fill="#ffff00"/><rect x="44" y="14" width="1" height="1" fill="#ffff00"/><rect x="46" y="0" width="1" height="1" fill="#ffff00"/><rect x="46" y="14" width="1" height="1" fill="#ffff00"/><rect x="48" y="0" width="1" height="1" fill="#ffff00"/><rect x="48" y="14" width="1" height="1" fill="#ffff00"/><rect x="50" y="0" width="1" height="1" fill="#ffff00"/><rect x="50" y="14" width="1" height="1" fill="#ffff00"/><rect x="52" y="0" width="1" height="1" fill="#ffff00"/><rect x="52" y="14" width="1" height="1" fill="#ffff00"/><rect x="54" y="0" width="1" height="1" fill="#ffff00"/><rect x="54" y="14" width="1" height="1" fill="#ffff00"/><rect x="56" y="0" width="1" height="1" fill="#ffff00"/><rect x="56" y="14" width="1" height="1" fill="#ffff00"/><rect x="58" y="0" width="1" height="1" fill="#ffff00"/><rect x="58" y="14" width="1" height="1" fill="#ffff00"/><rect x="60" y="0" width="1" height="1" fill="#ffff00"/><rect x="60" y="14" width="1" height="1" fill="#ffff00"/><rect x="62" y="0" width="1" height="1" fill="#ffff00"/><rect x="62" y="14" width="1" height="1" fill="#ffff00"/><rect x="64" y="0" width="1" height="1" fill="#ffff00"/><rect x="64" y="14" width="1" height="1" fill="#ffff00"/><rect x="66" y="0" width="1" height="1" fill="#ffff00"/><rect x="66" y="14" width="1" height="1" fill="#ffff00"/><rect x="68" y="0" width="1" height="1" fill="#ffff00"/><rect x="68" y="14" width="1" height="1" fill="#ffff00"/><rect x="70" y="0" width="1" height="1" fill="#ffff00"/><rect x="70" y="14" width="1" height="1" fill="#ffff00"/><rect x="72" y="0" width="1" height="1" fill="#ffff00"/><rect x="72" y="14" width="1" height="1" fill="#ffff00"/><rect x="74" y="0" width="1" height="1" fill="#ffff00"/><rect x="74" y="14" width="1" height="1" fill="#ffff00"/><rect x="76" y="0" width="1" height="1" fill="#ffff00"/><rect x="76" y="14" width="1" height="1" fill="#ffff00"/><rect x="78" y="0" width="1" height="1" fill="#ffff00"/><rect x="78" y="14" width="1" height="1" fill="#ffff00"/><rect x="80" y="0" width="1" height="1" fill="#ffff00"/><rect x="80" y="14" width="1" height="1" fill="#ffff00"/><rect x="82" y="0" width="1" height="1" fill="#ffff00"/><rect x="82" y="14" width="1" height="1" fill="#ffff00"/><rect x="84" y="0" width="1" height="1" fill="#ffff00"/><rect x="84" y="14" width="1" height="1" fill="#ffff00"/><rect x="86" y="0" width="1" height="1" fill="#ffff00"/><rect x="86" y="14" width="1" height="1" fill="#ffff00"/><rect x="88" y="0" width="1" height="1" fill="#ffff00"/><rect x="88" y="14" width="1" height="1" fill="#ffff00"/><rect x="90" y="0" width="1" height="1" fill="#ffff00"/><rect x="90" y="14" width="1" height="1" fill="#ffff00"/><rect x="92" y="0" width="1" height="1" fill="#ffff00"/><rect x="92" y="14" width="1" height="1" fill="#ffff00"/><rect x="0" y="0" width="1" height="1" fill="#ffff00"/><rect x="93" y="0" width="1" height="1" fill="#ffff00"/><rect x="0" y="2" width="1" height="1" fill="#ffff00"/><rect x="93" y="2" width="1" height="1" fill="#ffff00"/><rect x="0" y="4" width="1" height="1" fill="#ffff00"/><rect x="93" y="4" width="1" height="1" fill="#ffff00"/><rect x="0" y="6" width="1" height="1" fill="#ffff00"/><rect x="93" y="6" width="1" height="1" fill="#ffff00"/><rect x="0" y="8" width="1" height="1" fill="#ffff00"/><rect x="93" y="8" width="1" height="1" fill="#ffff00"/><rect x="0" y="10" width="1" height="1" fill="#ffff00"/><rect x="93" y="10" width="1" height="1" fill="#ffff00"/><rect x="0" y="12" width="1" height="1" fill="#ffff00"/><rect x="93" y="12" width="1" height="1" fill="#ffff00"/><rect x="0" y="14" width="1" height="1" fill="#ffff00"/><rect x="93" y="14" width="1" height="1" fill="#ffff00"/></svg>
<div class="t" style="left:129.0px;top:276px;font-size:12px;line-height:14px;color:#fff;font-weight:400;letter-spacing:0.378px;">Basic Functions</div>
<div style="left:399px;top:147px;width:16px;height:145px;background:#c0c0c0;"></div>
<div style="left:399px;top:163px;width:16px;height:11px;background-color:#c0c0c0;background-image:linear-gradient(45deg,#fff 25%,transparent 25%,transparent 75%,#fff 75%),linear-gradient(45deg,#fff 25%,transparent 25%,transparent 75%,#fff 75%);background-size:2px 2px;background-position:0 0,1px 1px;"></div>
<div style="left:399px;top:147px;width:16px;height:16px;background:#000;"></div>
<div style="left:399px;top:147px;width:15px;height:15px;background:#c0c0c0;"></div>
<div style="left:400px;top:148px;width:14px;height:14px;background:#808080;"></div>
<div style="left:400px;top:148px;width:13px;height:13px;background:#fff;"></div>
<div style="left:401px;top:149px;width:12px;height:12px;background:#c0c0c0;"></div>
<svg style="left:403px;top:153px" width="7" height="4" viewBox="0 0 7 4" shape-rendering="crispEdges"><rect x="3" y="0" width="1" height="1" fill="#000"/><rect x="2" y="1" width="3" height="1" fill="#000"/><rect x="1" y="2" width="5" height="1" fill="#000"/><rect x="0" y="3" width="7" height="1" fill="#000"/></svg>
<div style="left:399px;top:174px;width:16px;height:102px;background:#000;"></div>
<div style="left:399px;top:174px;width:15px;height:101px;background:#c0c0c0;"></div>
<div style="left:400px;top:175px;width:14px;height:100px;background:#808080;"></div>
<div style="left:400px;top:175px;width:13px;height:99px;background:#fff;"></div>
<div style="left:401px;top:176px;width:12px;height:98px;background:#c0c0c0;"></div>
<div style="left:399px;top:276px;width:16px;height:16px;background:#000;"></div>
<div style="left:399px;top:276px;width:15px;height:15px;background:#c0c0c0;"></div>
<div style="left:400px;top:277px;width:14px;height:14px;background:#808080;"></div>
<div style="left:400px;top:277px;width:13px;height:13px;background:#fff;"></div>
<div style="left:401px;top:278px;width:12px;height:12px;background:#c0c0c0;"></div>
<svg style="left:403px;top:282px" width="7" height="4" viewBox="0 0 7 4" shape-rendering="crispEdges"><rect x="3" y="3" width="1" height="1" fill="#000"/><rect x="2" y="2" width="3" height="1" fill="#000"/><rect x="1" y="1" width="5" height="1" fill="#000"/><rect x="0" y="0" width="7" height="1" fill="#000"/></svg>
</body></html>
